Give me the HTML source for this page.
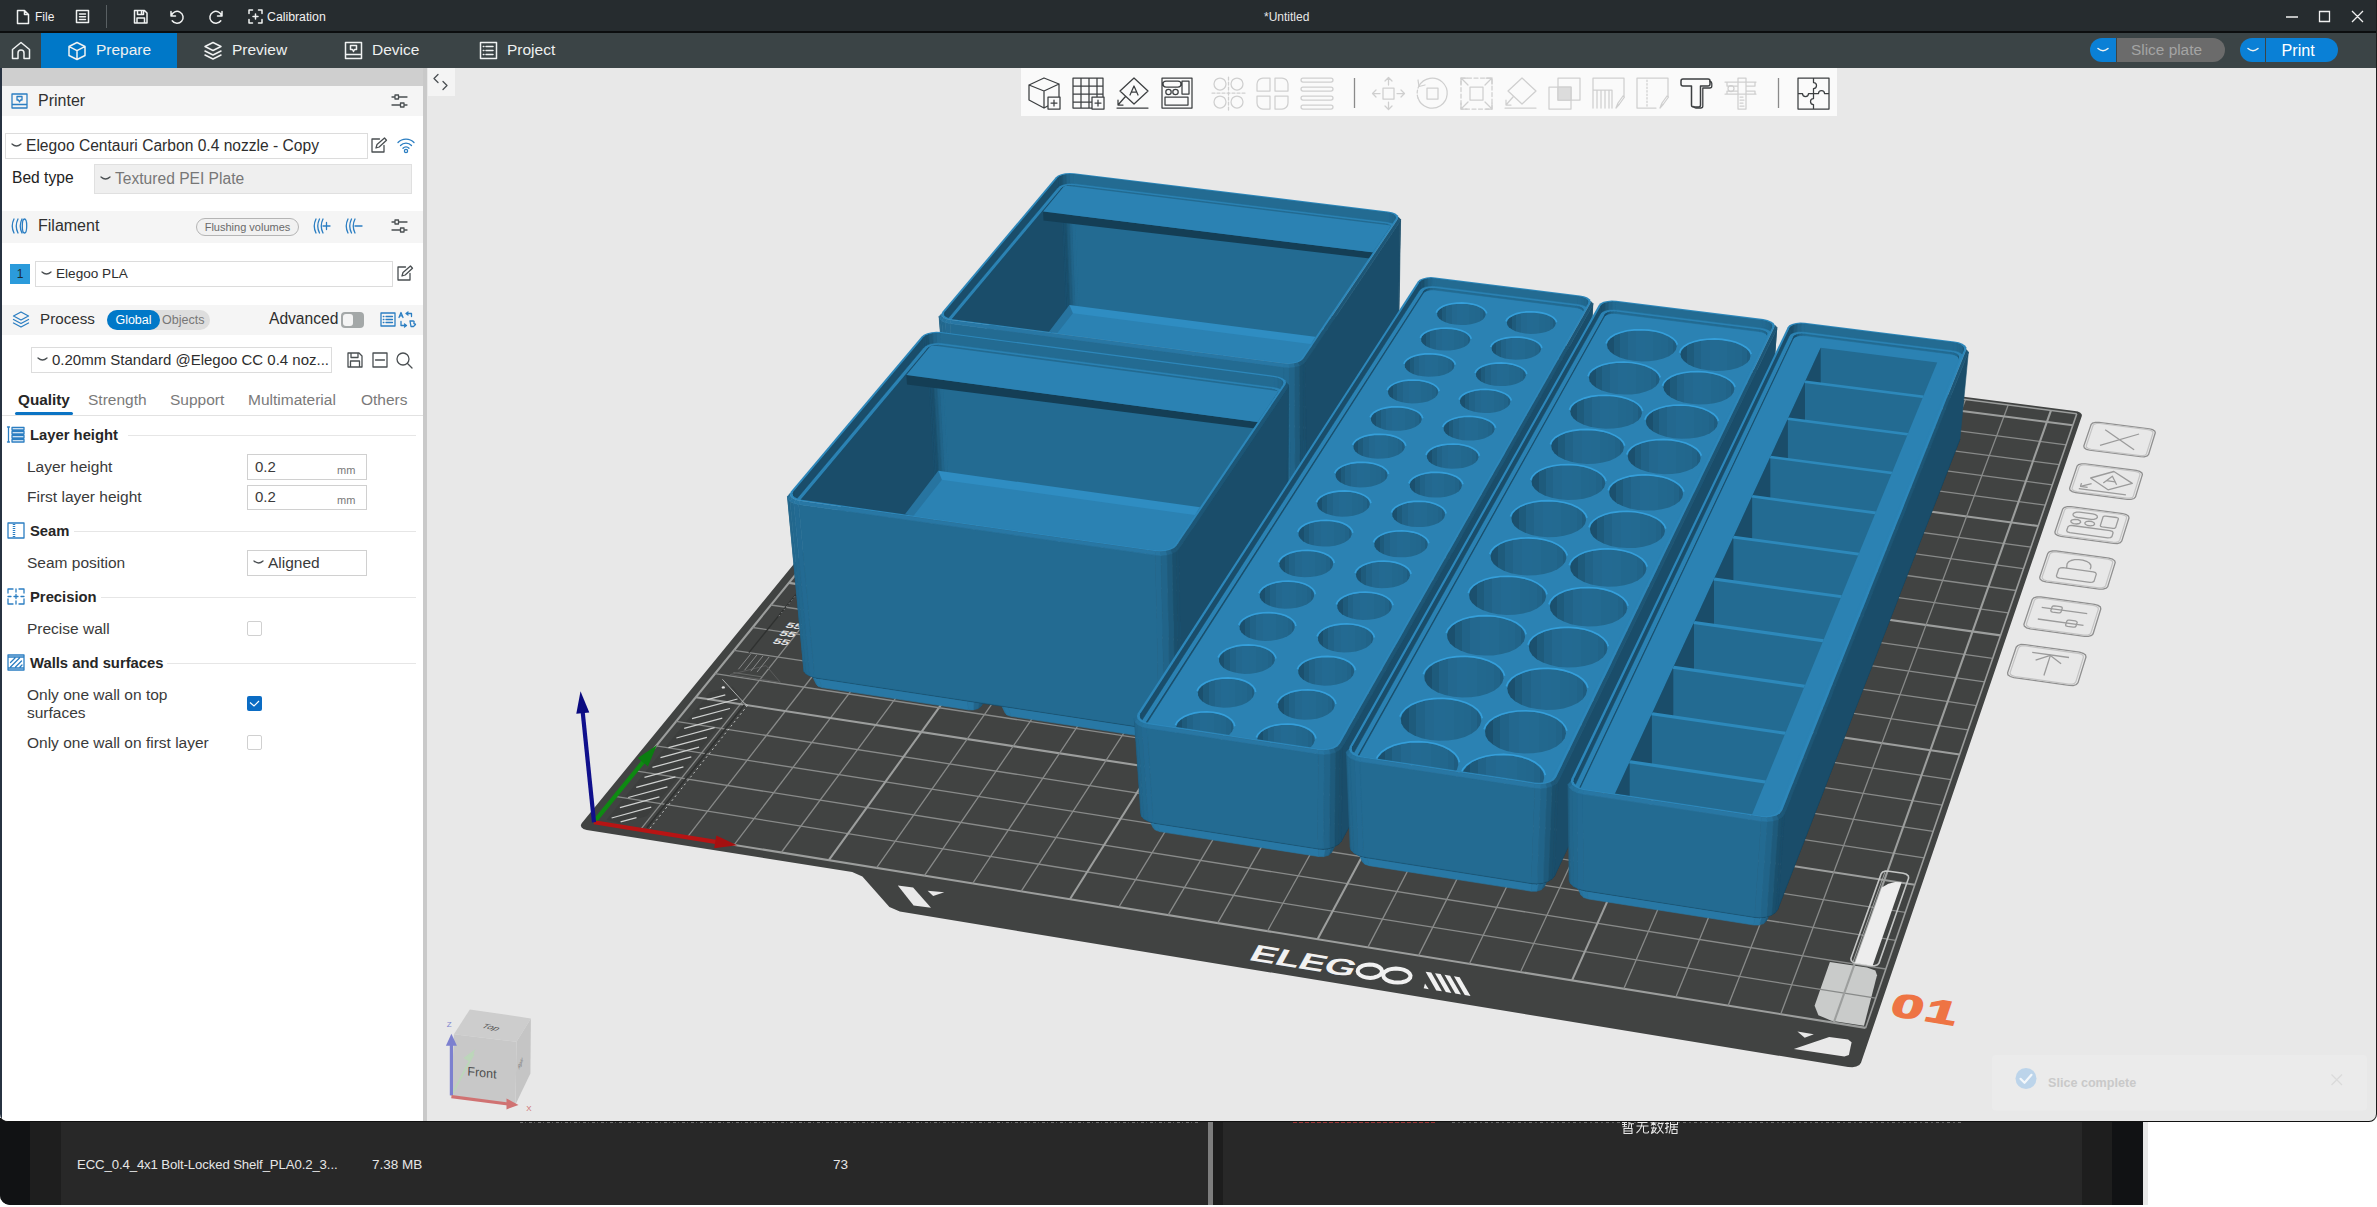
<!DOCTYPE html>
<html><head><meta charset="utf-8"><title>ElegooSlicer</title>
<style>
*{box-sizing:border-box;margin:0;padding:0}
html,body{width:2377px;height:1207px;overflow:hidden;background:#fff;font-family:"Liberation Sans",sans-serif;}
.abs{position:absolute}
#under{position:absolute;left:0;top:1118px;width:2148px;height:87px;background:#282828;border-radius:0 0 0 10px;overflow:hidden}
#win{position:absolute;left:0;top:0;width:2377px;height:1121.5px;background:#e8e8e8;border-radius:0 0 8px 8px;overflow:hidden;border-right:1.5px solid #1c1c1c;border-bottom:1.2px solid #101010}
#title{position:absolute;left:0;top:0;width:2377px;height:33px;background:#262c2f}
#tabs{position:absolute;left:0;top:33px;width:2377px;height:35px;background:#3b4446}
.tt{position:absolute;color:#f2f2f2;font-size:13px;line-height:16px;white-space:nowrap}
.tab{position:absolute;color:#eef0f0;font-size:15.5px;line-height:20px;top:7px;white-space:nowrap}
#side{position:absolute;left:0;top:68px;width:423px;height:1053px;background:#fff;border-left:2px solid #273241}
.hdr{position:absolute;left:0;width:421px;background:#f5f5f5}
.lbl{position:absolute;font-size:15.5px;color:#3a3a3a;white-space:nowrap;line-height:18px}
.sec{position:absolute;font-size:14.8px;color:#262626;font-weight:bold;white-space:nowrap;line-height:18px}
.box{position:absolute;border:1px solid #d0d0d0;background:#fff}
.hr{position:absolute;height:1px;background:#e6e6e6}
svg{position:absolute;overflow:visible}
.ic{fill:none;stroke:#4a4f52;stroke-width:1.3;stroke-linecap:round;stroke-linejoin:round}
.icw{fill:none;stroke:#f0f2f2;stroke-width:1.5;stroke-linecap:round;stroke-linejoin:round}
.icb{fill:none;stroke:#2b7ec2;stroke-width:1.3;stroke-linecap:round;stroke-linejoin:round}
.tb{fill:none;stroke:#3c3f41;stroke-width:1.25;stroke-linecap:round;stroke-linejoin:round}
.tbd{fill:none;stroke:#cfcfcf;stroke-width:1.25;stroke-linecap:round;stroke-linejoin:round}
</style></head><body>
<div id="under">
 <div class="abs" style="left:0;top:0;width:30px;height:87px;background:#111214"></div>
 <div class="abs" style="left:30px;top:0;width:31px;height:87px;background:#1e1e1e"></div>
 <div class="abs" style="left:1208px;top:0;width:5px;height:87px;background:#7d7d7d"></div>
 <div class="abs" style="left:1213px;top:0;width:10px;height:87px;background:#1d1d1d"></div>
 <div class="abs" style="left:2082px;top:0;width:30px;height:87px;background:#1e1e1e"></div>
 <div class="abs" style="left:2112px;top:0;width:31px;height:87px;background:#111214"></div>
 <div class="abs" style="left:2143px;top:0;width:5px;height:87px;background:#e8e8e8"></div>
 <div class="abs" style="left:520px;top:3px;width:680px;height:2px;opacity:.55;background:repeating-linear-gradient(90deg,#a8a8a8 0 3px,transparent 3px 5px,#8a8a8a 5px 6px,transparent 6px 9px)"></div>
 <div class="abs" style="left:1293px;top:3px;width:144px;height:2px;opacity:.75;background:repeating-linear-gradient(90deg,#c63c3c 0 4px,transparent 4px 6px)"></div>
 <div class="abs" style="left:1452px;top:3px;width:510px;height:2px;opacity:.5;background:repeating-linear-gradient(90deg,#b0b0b0 0 3px,transparent 3px 6px,#909090 6px 8px,transparent 8px 11px)"></div>
 <div class="abs" style="left:77px;top:39px;font-size:13.2px;color:#e6e6e6;white-space:nowrap;letter-spacing:-0.12px">ECC_0.4_4x1 Bolt-Locked Shelf_PLA0.2_3...</div>
 <div class="abs" style="left:372px;top:39px;font-size:13.5px;color:#e6e6e6;white-space:nowrap">7.38 MB</div>
 <div class="abs" style="left:833px;top:39px;font-size:13.5px;color:#e6e6e6">73</div>
 <svg class="abs" style="left:1621px;top:2px" width="58" height="15" viewBox="0 0 58 15"><g fill="none" stroke="#e6e6e6" stroke-width="1.050">
<path d="M1 2.500h5 M3.500 0.800v6 M1 4.500h5 M1.500 6.800h4.500 M8 1.800l4-1 M8 1.800v3q0 2-1 3 M8 3.800h5 M10.500 3.800v4 M3 8.500h8v5h-8z M3 11h8"/>
<path transform="translate(14.500 0)" d="M2 2.500h10 M1 6h12 M6.500 2.500q0 6-5.500 10.500 M8 6v5.500q0 1.500 1.500 1.500h2.500q1 0 1-2"/>
<path transform="translate(29 0)" d="M3.500 0.500v5 M1 3h5.500 M1.500 1l1 1.200 M5.500 1l-1 1.200 M1 5.500l2.500-2.500 2.500 2.500 M1 8h6 M4 6.500l-2.500 6.500 M2 10q3 1.500 4.500 3.500 M6 8q-1 4-5 5.500 M9.500 0.500q-0.500 3-2 5 M8.500 3.500h5 M12.500 3.500q-1 6-5.500 10 M8.500 5.500q1.500 5 5 8"/>
<path transform="translate(43.500 0)" d="M0.500 3.500h4 M2.500 0.500v11.500q0 1-1.500 0.500 M0.500 8.500l4-2 M6 1.500h7v3h-7 M6 1.500v5q0 4-1.500 7 M6 7h7.500 M9.500 4.500v5 M7.500 9.500h5v4h-5z"/>
</g></svg>
</div>
<div id="win">
<div id="title">
 <svg style="left:15px;top:9px" width="16" height="16" viewBox="0 0 16 16"><path class="icw" d="M2.5 1.5h7l4 4v9h-11z M9.5 1.5v4h4"/></svg>
 <div class="tt" style="left:35px;top:9px;font-size:12px">File</div>
 <svg style="left:75px;top:9px" width="16" height="16" viewBox="0 0 16 16"><path class="icw" d="M1.5 1.5h12v12h-12z M4.5 5h6 M4.5 7.7h6 M4.5 10.4h6"/></svg>
 <div class="abs" style="left:106px;top:5px;width:1px;height:23px;background:#596063"></div>
 <svg style="left:133px;top:9px" width="16" height="16" viewBox="0 0 16 16"><path class="icw" d="M1.5 1.5h10l2.5 2.5v10h-12.5z M4.5 1.5v4h6v-4 M4 14v-5h7.5v5 M8.5 2.8v1.6"/></svg>
 <svg style="left:169px;top:9px" width="17" height="16" viewBox="0 0 17 16"><path class="icw" d="M2 2.5v4.5h4.5 M2.3 6.8A6 6 0 1 1 3.2 11.8"/></svg>
 <svg style="left:207px;top:9px" width="17" height="16" viewBox="0 0 17 16"><path class="icw" d="M15 2.5v4.5h-4.5 M14.7 6.8A6 6 0 1 0 13.8 11.8"/></svg>
 <svg style="left:248px;top:9px" width="15" height="15" viewBox="0 0 15 15"><path class="icw" d="M1 4.5v-3.5h3.5 M10.5 1h3.5v3.5 M14 10.5v3.5h-3.5 M4.5 14h-3.5v-3.5 M7.5 5v5 M5 7.5h5"/></svg>
 <div class="tt" style="left:267px;top:9px;font-size:12.3px">Calibration</div>
 <div class="tt" style="left:1264px;top:9px;font-size:12px;color:#e8e8e8">*Untitled</div>
 <svg style="left:2285px;top:10px" width="80" height="14" viewBox="0 0 80 14"><path d="M1 7h12 M34.5 1.5h10v10h-10z M67 1l11 11 M78 1l-11 11" fill="none" stroke="#f0f0f0" stroke-width="1.3"/></svg>
</div>
<div id="tabs">
 <div id="sepl" class="abs" style="left:0;top:-2px;width:2377px;height:2px;background:#0c0e0f"></div>
 <svg style="left:11px;top:8px" width="20" height="19" viewBox="0 0 20 19"><path class="icw" d="M1.5 8.5l8.5-7 8.5 7v9h-5.5v-5.5a3 3 0 0 0 -6 0v5.5h-5.5z"/></svg>
 <div class="abs" style="left:41px;top:0;width:136px;height:35px;background:#0078c8"></div>
 <svg style="left:67px;top:8px" width="20" height="20" viewBox="0 0 20 20"><path class="icw" d="M10 1.5l8 4v9l-8 4-8-4v-9z M2.3 5.7l7.7 4 7.7-4 M10 9.7v8.5"/></svg>
 <div class="tab" style="left:96px">Prepare</div>
 <svg style="left:203px;top:8px" width="20" height="20" viewBox="0 0 20 20"><path class="icw" d="M10 1.5l8 4-8 4-8-4z M2 10l8 4 8-4 M2 14l8 4 8-4"/></svg>
 <div class="tab" style="left:232px">Preview</div>
 <svg style="left:344px;top:8px" width="19" height="19" viewBox="0 0 19 19"><path class="icw" d="M1.5 1.5h16v16h-16z M1.5 13.5h16 M6.5 4.5h6v4h-2l-1 2-1-2h-2z"/></svg>
 <div class="tab" style="left:372px">Device</div>
 <svg style="left:479px;top:8px" width="19" height="19" viewBox="0 0 19 19"><path class="icw" d="M1.5 1.5h16v16h-16z M7 5.5h7 M7 9.5h7 M7 13.5h7 M4.3 5.5h.6 M4.3 9.5h.6 M4.3 13.5h.6"/></svg>
 <div class="tab" style="left:507px">Project</div>
 <!-- slice / print -->
 <div class="abs" style="left:2090px;top:5px;width:26px;height:24px;background:#0a80d6;border-radius:12px 0 0 12px"></div>
 <svg style="left:2097px;top:14px" width="12" height="7" viewBox="0 0 12 7"><path class="icw" d="M1 1.5q5 4.5 10 0"/></svg>
 <div class="abs" style="left:2117px;top:5px;width:108px;height:24px;background:#6b6b6b;border-radius:0 12px 12px 0;color:#a4a4a4;font-size:15.4px;line-height:24px;padding-left:14px;white-space:nowrap">Slice plate</div>
 <div class="abs" style="left:2240px;top:5px;width:25px;height:24px;background:#0a80d6;border-radius:12px 0 0 12px"></div>
 <svg style="left:2247px;top:14px" width="12" height="7" viewBox="0 0 12 7"><path class="icw" d="M1 1.5q5 4.5 10 0"/></svg>
 <div class="abs" style="left:2266px;top:5px;width:72px;height:24px;background:#0a80d6;border-radius:0 12px 12px 0;color:#fff;font-size:16.2px;line-height:24px;padding-left:15.5px;white-space:nowrap">Print</div>
</div>
<div id="side">
 <div class="abs" style="left:0;top:0;width:421px;height:18px;background:#cfcfcf"></div>
 <!-- Printer -->
 <div class="hdr" style="top:18px;height:30px"></div>
 <svg style="left:9px;top:25px" width="17" height="16" viewBox="0 0 17 16"><path class="icb" d="M1 1h15v14h-15z M1 11.5h15 M6 3.5h5v3.5h-1.5l-1 2-1-2h-1.5z"/></svg>
 <div class="lbl" style="left:36px;top:24px;color:#303030;font-size:16px">Printer</div>
 <svg style="left:389px;top:25px" width="17" height="16" viewBox="0 0 17 16"><path class="ic" d="M1 4h3 M7.5 4h8.5 M4 2h3.5v4h-3.5z M1 12h8.5 M13 12h3 M9.5 10h3.5v4h-3.5z"/></svg>
 <div class="box" style="left:3px;top:65px;width:363px;height:26px;border-color:#dcdcdc"></div>
 <svg style="left:9px;top:75px" width="11" height="6" viewBox="0 0 11 6"><path class="ic" d="M1 1q4.500 4 9 0" stroke-width="1"/></svg>
 <div class="lbl" style="left:24px;top:69px;color:#2e2e2e;font-size:15.6px">Elegoo Centauri Carbon 0.4 nozzle - Copy</div>
 <svg style="left:369px;top:69px" width="17" height="16" viewBox="0 0 17 16"><path class="ic" d="M13 8.500v6.500h-12v-13h7.500 M5 11l1-3.500 7.500-6.500 2 2.200-7.300 6.800z"/></svg>
 <svg style="left:395px;top:68px" width="18" height="18" viewBox="0 0 18 18"><path class="icb" d="M1 6.500a11 11 0 0 1 16 0 M3.500 9.500a7.500 7.500 0 0 1 11 0 M6 12.300a4 4 0 0 1 6 0"/><circle cx="9" cy="15" r="1.600" class="icb"/></svg>
 <div class="lbl" style="left:10px;top:101px;color:#222;font-size:15.6px">Bed type</div>
 <div class="box" style="left:92px;top:96px;width:318px;height:30px;background:#efefef;border-color:#e0e0e0"></div>
 <svg style="left:98px;top:108px" width="11" height="6" viewBox="0 0 11 6"><path class="ic" d="M1 1q4.500 4 9 0" stroke="#8a8a8a" stroke-width="1"/></svg>
 <div class="lbl" style="left:113px;top:102px;color:#777;font-size:15.6px">Textured PEI Plate</div>
 <!-- Filament -->
 <div class="hdr" style="top:143px;height:32px"></div>
 <svg style="left:9px;top:150px" width="17" height="16" viewBox="0 0 17 16"><path class="icb" d="M3 1q-3.500 7 0 14 M7 1q-3.500 7 0 14 M11 1q-3.500 7 0 14 M13.500 1a2.200 7 0 0 1 0 14a2.200 7 0 0 1 0-14"/></svg>
 <div class="lbl" style="left:36px;top:149px;color:#303030;font-size:16px">Filament</div>
 <div class="abs" style="left:194px;top:150px;width:103px;height:18px;border:1px solid #b5b5b5;border-radius:9px;background:#f1f1f1;font-size:11px;line-height:16px;color:#6a6a6a;text-align:center;white-space:nowrap">Flushing volumes</div>
 <svg style="left:311px;top:150px" width="18" height="16" viewBox="0 0 18 16"><path class="icb" d="M3 1q-3.500 7 0 14 M6.500 1q-3.500 7 0 14 M10 1q-3.500 7 0 14"/><path class="icb" d="M10 8h7 M13.500 4.500v7" stroke="#5a5f62"/></svg>
 <svg style="left:343px;top:150px" width="18" height="16" viewBox="0 0 18 16"><path class="icb" d="M3 1q-3.500 7 0 14 M6.500 1q-3.500 7 0 14 M10 1q-3.500 7 0 14"/><path class="icb" d="M10 8h7" stroke="#5a5f62"/></svg>
 <svg style="left:389px;top:150px" width="17" height="16" viewBox="0 0 17 16"><path class="ic" d="M1 4h3 M7.500 4h8.500 M4 2h3.500v4h-3.500z M1 12h8.500 M13 12h3 M9.500 10h3.500v4h-3.500z"/></svg>
 <div class="abs" style="left:8px;top:196px;width:20px;height:20px;background:#2b9bdb;color:#1b2a33;font-size:12px;line-height:20px;text-align:center">1</div>
 <div class="box" style="left:33px;top:193px;width:358px;height:26px;border-color:#dcdcdc"></div>
 <svg style="left:39px;top:203px" width="11" height="6" viewBox="0 0 11 6"><path class="ic" d="M1 1q4.500 4 9 0" stroke-width="1"/></svg>
 <div class="lbl" style="left:54px;top:197px;color:#2e2e2e;font-size:13.600px">Elegoo PLA</div>
 <svg style="left:395px;top:197px" width="17" height="16" viewBox="0 0 17 16"><path class="ic" d="M13 8.500v6.500h-12v-13h7.500 M5 11l1-3.500 7.500-6.500 2 2.200-7.300 6.800z"/></svg>
 <!-- Process -->
 <div class="hdr" style="top:237px;height:30px"></div>
 <svg style="left:10px;top:243px" width="18" height="17" viewBox="0 0 18 17"><path class="icb" d="M9 1l7.500 4-7.500 4-7.500-4z M1.500 8.500l7.500 4 7.500-4 M1.500 12l7.500 4 7.500-4" stroke="#5b7f9d"/></svg>
 <div class="lbl" style="left:38px;top:242px;color:#303030;font-size:15.2px">Process</div>
 <div class="abs" style="left:105px;top:242px;width:103px;height:20px;border-radius:10px;background:#dedede"></div>
 <div class="abs" style="left:105px;top:242px;width:53px;height:20px;border-radius:10px;background:#0078c8;color:#fff;font-size:12.500px;line-height:20px;text-align:center">Global</div>
 <div class="abs" style="left:160px;top:242px;width:46px;height:20px;color:#777;font-size:12.500px;line-height:20px;white-space:nowrap">Objects</div>
 <div class="lbl" style="left:267px;top:242px;color:#2e2e2e;font-size:15.600px">Advanced</div>
 <div class="abs" style="left:339px;top:244px;width:23px;height:16px;border-radius:4px;background:#a4a8a8"></div>
 <div class="abs" style="left:341px;top:246px;width:10px;height:12px;border-radius:3px;background:#f4f4f4"></div>
 <svg style="left:378px;top:244px" width="16" height="15" viewBox="0 0 16 15"><path class="icb" d="M1 1h14v13h-14z M6 4.500h6.500 M6 7.500h6.500 M6 10.500h6.500 M3.300 4.500h.6 M3.300 7.500h.6 M3.300 10.500h.6"/></svg>
 <svg style="left:396px;top:243px" width="17" height="17" viewBox="0 0 17 17"><path class="icb" d="M1 6.500l2-5 2 5 M1.800 4.800h2.400 M8 2.500h5.500v3 M10 1l-2 1.500 2 1.500 M12 10h3q1.500 0 1 1.500t1 1.500t-1.500 2.500h-2.500z M8.500 14.500h-5.500v-4 M6.500 13l2 1.500-2 1.500" stroke-width="1.100"/></svg>
 <div class="box" style="left:29px;top:279px;width:301px;height:26px;border-color:#dcdcdc"></div>
 <svg style="left:35px;top:289px" width="11" height="6" viewBox="0 0 11 6"><path class="ic" d="M1 1q4.500 4 9 0" stroke-width="1"/></svg>
 <div class="lbl" style="left:50px;top:283px;color:#2e2e2e;font-size:15px">0.20mm Standard @Elegoo CC 0.4 noz...</div>
 <svg style="left:345px;top:284px" width="16" height="16" viewBox="0 0 16 16"><path class="ic" d="M1 1h11l3 3v11h-14z M4 1v4.500h7v-4.500 M3.500 15v-6h9v6" stroke="#868b8e" stroke-width="1.150"/></svg>
 <svg style="left:370px;top:284px" width="16" height="16" viewBox="0 0 16 16"><path class="ic" d="M1 1h14v14h-14z M3.500 8h9" stroke="#868b8e" stroke-width="1.150"/></svg>
 <svg style="left:394px;top:284px" width="17" height="17" viewBox="0 0 17 17"><circle class="ic" cx="7" cy="7" r="6" stroke="#868b8e" stroke-width="1.150"/><path class="ic" d="M11.500 11.500l4.500 4.500" stroke="#868b8e" stroke-width="1.150"/></svg>
 <!-- tabs -->
 <div class="sec" style="left:16px;top:323px;font-size:15.300px">Quality</div>
 <div class="abs" style="left:13px;top:344px;width:58px;height:3px;background:#0b74c4;border-radius:1.500px"></div>
 <div class="lbl" style="left:86px;top:323px;color:#7a7a7a">Strength</div>
 <div class="lbl" style="left:168px;top:323px;color:#7a7a7a">Support</div>
 <div class="lbl" style="left:246px;top:323px;color:#7a7a7a">Multimaterial</div>
 <div class="lbl" style="left:359px;top:323px;color:#7a7a7a">Others</div>
 <div class="hr" style="left:0;top:347px;width:421px;background:#e2e2e2"></div>
 <!-- Layer height -->
 <svg style="left:5px;top:358px" width="18" height="17" viewBox="0 0 18 17"><path class="icb" d="M1.500 1v15 M0.500 1h2 M0.500 16h2 M5 1.500h12v2.500h-12z M5 5.500h12v2.500h-12z M5 9.500h12v2.500h-12z M5 13.500h12v2.500h-12z" stroke="#5b7f9d" stroke-width="1"/></svg>
 <div class="sec" style="left:28px;top:358px">Layer height</div>
 <div class="hr" style="left:126px;top:367px;width:288px"></div>
 <div class="lbl" style="left:25px;top:390px">Layer height</div>
 <div class="box" style="left:245px;top:386px;width:120px;height:26px"></div>
 <div class="lbl" style="left:253px;top:390px;font-size:15px">0.2</div>
 <div class="lbl" style="left:335px;top:393px;font-size:11px;color:#777">mm</div>
 <div class="lbl" style="left:25px;top:420px">First layer height</div>
 <div class="box" style="left:245px;top:417px;width:120px;height:25px"></div>
 <div class="lbl" style="left:253px;top:420px;font-size:15px">0.2</div>
 <div class="lbl" style="left:335px;top:423px;font-size:11px;color:#777">mm</div>
 <!-- Seam -->
 <svg style="left:5px;top:454px" width="18" height="17" viewBox="0 0 18 17"><path class="icb" d="M1 1h16v15h-16z" stroke="#5b7f9d" stroke-width="1"/><path d="M7 2v13" stroke="#2b7ec2" stroke-width="2.500" stroke-dasharray="1 1" fill="none"/></svg>
 <div class="sec" style="left:28px;top:454px">Seam</div>
 <div class="hr" style="left:72px;top:463px;width:342px"></div>
 <div class="lbl" style="left:25px;top:486px">Seam position</div>
 <div class="box" style="left:245px;top:482px;width:120px;height:26px"></div>
 <svg style="left:251px;top:492px" width="11" height="6" viewBox="0 0 11 6"><path class="ic" d="M1 1q4.500 4 9 0" stroke-width="1"/></svg>
 <div class="lbl" style="left:266px;top:486px">Aligned</div>
 <!-- Precision -->
 <svg style="left:5px;top:520px" width="18" height="17" viewBox="0 0 18 17"><path class="icb" d="M1 5v-4h5 M12 1h5v4 M17 11v5h-5 M6 16h-5v-5 M9 1v3 M9 13v3 M1 8.500h3 M14 8.500h3 M9 6.500v4 M7 8.500h4" stroke="#5b7f9d" stroke-width="1"/></svg>
 <div class="sec" style="left:28px;top:520px">Precision</div>
 <div class="hr" style="left:99px;top:529px;width:315px"></div>
 <div class="lbl" style="left:25px;top:552px">Precise wall</div>
 <div class="box" style="left:245px;top:553px;width:15px;height:15px;border-radius:2px"></div>
 <!-- Walls -->
 <svg style="left:5px;top:586px" width="18" height="17" viewBox="0 0 18 17"><path class="icb" d="M1 1h16v15h-16z M1 3h16 M1 14h16 M3.500 13l9-9 M3.500 8.500l4.500-4.500 M8.500 13l6-6 M13 13l2-2" stroke-width="1"/></svg>
 <div class="sec" style="left:28px;top:586px">Walls and surfaces</div>
 <div class="hr" style="left:165px;top:595px;width:249px"></div>
 <div class="lbl" style="left:25px;top:618px">Only one wall on top</div>
 <div class="lbl" style="left:25px;top:636px">surfaces</div>
 <div class="abs" style="left:245px;top:628px;width:15px;height:15px;border-radius:2px;background:#0b6cc4"></div>
 <svg style="left:247px;top:632px" width="11" height="8" viewBox="0 0 11 8"><path d="M1 2.500l4 3.500 5-5" fill="none" stroke="#fff" stroke-width="1.200"/></svg>
 <div class="lbl" style="left:25px;top:666px">Only one wall on first layer</div>
 <div class="box" style="left:245px;top:667px;width:15px;height:15px;border-radius:2px"></div>
</div>
<div class="abs" style="left:423px;top:68px;width:4px;height:1053px;background:#c9c9c9"></div>
<svg style="left:0;top:0" width="2377" height="1121" viewBox="0 0 2377 1121">
<defs><clipPath id="vp"><rect x="427" y="68" width="1950" height="1053"/></clipPath></defs>
<g clip-path="url(#vp)">
<polygon points="581.7,823.2 580.8,825.3 581.4,827.3 583.5,828.9 586.7,829.9 852.2,872.1 862.4,876.5 889.4,907.1 899.8,911.6 1848.1,1067.1 1852.4,1067.3 1856.3,1066.6 1859.3,1065.0 1861.0,1062.8 2081.9,415.8 2081.7,414.2 2080.3,412.7 2077.8,411.6 2074.6,410.9 1036.3,278.2 1033.1,278.0 1030.0,278.5 1027.4,279.4 1025.8,280.6" fill="#414342"/>
<polygon points="1829.9,962.0 1867.0,967.6 1875.4,970.4 1877.0,975.3 1864.0,1025.8 1831.5,1020.8 1818.4,1015.2 1814.6,1005.8" fill="#c9cbca"/>
<polygon points="606.5,819.8 620.3,823.5 647.2,816.1 741.6,697.6 732.6,686.4 709.7,692.5" fill="#3c3e3d"/>
<line x1="594.0" y1="822.2" x2="1035.2" y2="280.5" stroke="#9c9e9d" stroke-width="2.1"/>
<line x1="594.0" y1="822.2" x2="1865.6" y2="1027.9" stroke="#9c9e9d" stroke-width="2.1"/>
<line x1="640.5" y1="829.7" x2="1073.8" y2="285.4" stroke="#888a89" stroke-width="1.3"/>
<line x1="615.1" y1="796.3" x2="1875.8" y2="998.2" stroke="#888a89" stroke-width="1.3"/>
<line x1="687.2" y1="837.3" x2="1112.5" y2="290.4" stroke="#888a89" stroke-width="1.3"/>
<line x1="635.8" y1="770.9" x2="1885.8" y2="969.0" stroke="#888a89" stroke-width="1.3"/>
<line x1="734.1" y1="844.9" x2="1151.4" y2="295.3" stroke="#888a89" stroke-width="1.3"/>
<line x1="656.1" y1="745.9" x2="1895.6" y2="940.4" stroke="#888a89" stroke-width="1.3"/>
<line x1="781.3" y1="852.5" x2="1190.4" y2="300.3" stroke="#888a89" stroke-width="1.3"/>
<line x1="676.1" y1="721.4" x2="1905.3" y2="912.4" stroke="#888a89" stroke-width="1.3"/>
<line x1="828.8" y1="860.2" x2="1229.6" y2="305.4" stroke="#9c9e9d" stroke-width="2.1"/>
<line x1="695.7" y1="697.3" x2="1914.8" y2="884.8" stroke="#9c9e9d" stroke-width="2.1"/>
<line x1="876.5" y1="867.9" x2="1269.0" y2="310.4" stroke="#888a89" stroke-width="1.3"/>
<line x1="715.0" y1="673.6" x2="1924.1" y2="857.8" stroke="#888a89" stroke-width="1.3"/>
<line x1="924.4" y1="875.7" x2="1308.6" y2="315.5" stroke="#888a89" stroke-width="1.3"/>
<line x1="734.0" y1="650.4" x2="1933.2" y2="831.3" stroke="#888a89" stroke-width="1.3"/>
<line x1="972.6" y1="883.5" x2="1348.3" y2="320.5" stroke="#888a89" stroke-width="1.3"/>
<line x1="752.6" y1="627.5" x2="1942.1" y2="805.2" stroke="#888a89" stroke-width="1.3"/>
<line x1="1021.1" y1="891.3" x2="1388.2" y2="325.6" stroke="#888a89" stroke-width="1.3"/>
<line x1="770.9" y1="605.0" x2="1950.9" y2="779.7" stroke="#888a89" stroke-width="1.3"/>
<line x1="1069.9" y1="899.2" x2="1428.3" y2="330.8" stroke="#9c9e9d" stroke-width="2.1"/>
<line x1="788.9" y1="582.9" x2="1959.6" y2="754.5" stroke="#9c9e9d" stroke-width="2.1"/>
<line x1="1118.8" y1="907.1" x2="1468.5" y2="335.9" stroke="#888a89" stroke-width="1.3"/>
<line x1="806.6" y1="561.2" x2="1968.0" y2="729.9" stroke="#888a89" stroke-width="1.3"/>
<line x1="1168.1" y1="915.1" x2="1509.0" y2="341.1" stroke="#888a89" stroke-width="1.3"/>
<line x1="824.0" y1="539.8" x2="1976.4" y2="705.6" stroke="#888a89" stroke-width="1.3"/>
<line x1="1217.6" y1="923.1" x2="1549.6" y2="346.3" stroke="#888a89" stroke-width="1.3"/>
<line x1="841.2" y1="518.7" x2="1984.6" y2="681.8" stroke="#888a89" stroke-width="1.3"/>
<line x1="1267.4" y1="931.2" x2="1590.3" y2="351.5" stroke="#888a89" stroke-width="1.3"/>
<line x1="858.0" y1="498.1" x2="1992.6" y2="658.4" stroke="#888a89" stroke-width="1.3"/>
<line x1="1317.5" y1="939.3" x2="1631.3" y2="356.7" stroke="#9c9e9d" stroke-width="2.1"/>
<line x1="874.6" y1="477.7" x2="2000.5" y2="635.4" stroke="#9c9e9d" stroke-width="2.1"/>
<line x1="1367.8" y1="947.4" x2="1672.4" y2="362.0" stroke="#888a89" stroke-width="1.3"/>
<line x1="890.9" y1="457.7" x2="2008.3" y2="612.8" stroke="#888a89" stroke-width="1.3"/>
<line x1="1418.5" y1="955.6" x2="1713.8" y2="367.3" stroke="#888a89" stroke-width="1.3"/>
<line x1="907.0" y1="438.0" x2="2016.0" y2="590.5" stroke="#888a89" stroke-width="1.3"/>
<line x1="1469.4" y1="963.8" x2="1755.3" y2="372.6" stroke="#888a89" stroke-width="1.3"/>
<line x1="922.8" y1="418.5" x2="2023.5" y2="568.7" stroke="#888a89" stroke-width="1.3"/>
<line x1="1520.5" y1="972.1" x2="1796.9" y2="377.9" stroke="#888a89" stroke-width="1.3"/>
<line x1="938.3" y1="399.4" x2="2030.9" y2="547.2" stroke="#888a89" stroke-width="1.3"/>
<line x1="1572.0" y1="980.4" x2="1838.8" y2="383.3" stroke="#9c9e9d" stroke-width="2.1"/>
<line x1="953.7" y1="380.6" x2="2038.1" y2="526.0" stroke="#9c9e9d" stroke-width="2.1"/>
<line x1="1623.8" y1="988.8" x2="1880.9" y2="388.7" stroke="#888a89" stroke-width="1.3"/>
<line x1="968.7" y1="362.1" x2="2045.3" y2="505.2" stroke="#888a89" stroke-width="1.3"/>
<line x1="1675.8" y1="997.2" x2="1923.1" y2="394.1" stroke="#888a89" stroke-width="1.3"/>
<line x1="983.6" y1="343.9" x2="2052.3" y2="484.8" stroke="#888a89" stroke-width="1.3"/>
<line x1="1728.1" y1="1005.7" x2="1965.5" y2="399.5" stroke="#888a89" stroke-width="1.3"/>
<line x1="998.2" y1="325.9" x2="2059.3" y2="464.6" stroke="#888a89" stroke-width="1.3"/>
<line x1="1780.7" y1="1014.2" x2="2008.2" y2="404.9" stroke="#888a89" stroke-width="1.3"/>
<line x1="1012.6" y1="308.2" x2="2066.1" y2="444.8" stroke="#888a89" stroke-width="1.3"/>
<line x1="1833.7" y1="1022.8" x2="2051.0" y2="410.4" stroke="#9c9e9d" stroke-width="2.1"/>
<line x1="1026.8" y1="290.8" x2="2072.8" y2="425.3" stroke="#9c9e9d" stroke-width="2.1"/>
<line x1="1865.6" y1="1027.9" x2="2076.8" y2="413.7" stroke="#9b9d9c" stroke-width="1.6"/>
<line x1="1035.2" y1="280.5" x2="2076.8" y2="413.7" stroke="#9b9d9c" stroke-width="1.6"/>
<line x1="611.6" y1="818.0" x2="651.2" y2="807.1" stroke="#cfd1d0" stroke-width="1.2" />
<line x1="619.9" y1="807.7" x2="659.4" y2="796.9" stroke="#cfd1d0" stroke-width="1.2" />
<line x1="628.2" y1="797.5" x2="667.4" y2="786.8" stroke="#cfd1d0" stroke-width="1.2" />
<line x1="636.3" y1="787.4" x2="675.4" y2="776.8" stroke="#cfd1d0" stroke-width="1.2" />
<line x1="644.5" y1="777.4" x2="683.4" y2="766.8" stroke="#cfd1d0" stroke-width="1.2" />
<line x1="652.5" y1="767.4" x2="691.3" y2="756.9" stroke="#cfd1d0" stroke-width="1.2" />
<line x1="660.5" y1="757.6" x2="699.1" y2="747.1" stroke="#cfd1d0" stroke-width="1.2" />
<line x1="668.5" y1="747.7" x2="706.9" y2="737.3" stroke="#cfd1d0" stroke-width="1.2" />
<line x1="676.4" y1="738.0" x2="714.6" y2="727.7" stroke="#cfd1d0" stroke-width="1.2" />
<line x1="684.2" y1="728.3" x2="722.3" y2="718.1" stroke="#cfd1d0" stroke-width="1.2" />
<line x1="692.0" y1="718.7" x2="729.9" y2="708.5" stroke="#cfd1d0" stroke-width="1.2" />
<line x1="699.7" y1="709.1" x2="737.5" y2="699.0" stroke="#cfd1d0" stroke-width="1.2" />
<line x1="707.4" y1="699.6" x2="725.3" y2="694.9" stroke="#cfd1d0" stroke-width="1.2" />
<line x1="620.6" y1="821.8" x2="636.5" y2="817.6" stroke="#cfd1d0" stroke-width="1.2" />
<line x1="646.8" y1="827.8" x2="744.5" y2="704.8" stroke="#2f3130" stroke-width="1.6" />
<line x1="650.0" y1="828.3" x2="747.6" y2="705.3" stroke="#cfd1d0" stroke-width="0.9" stroke-dasharray="2 3"/>
<line x1="722.4" y1="679.3" x2="744.3" y2="703.2" stroke="#b9bbba" stroke-width="0.9" />
<line x1="744.3" y1="703.2" x2="747.6" y2="705.3" stroke="#b9bbba" stroke-width="0.9" />
<ellipse cx="723.3" cy="687.4" rx="1.6" ry="1.2" fill="#e6e6e6"/>
<line x1="733.4" y1="672.5" x2="763.1" y2="677.0" stroke="#6a6c6b" stroke-width="0.9" />
<polygon points="730.1,674.6 780.3,682.3 766.1,665.6" fill="none" stroke="#5c5e5d" stroke-width="0.9"/>
<line x1="738.4" y1="669.3" x2="750.6" y2="654.2" stroke="#8d8f8e" stroke-width="0.9" />
<line x1="744.6" y1="670.2" x2="756.8" y2="655.1" stroke="#8d8f8e" stroke-width="0.9" />
<line x1="750.8" y1="671.2" x2="762.9" y2="656.0" stroke="#8d8f8e" stroke-width="0.9" />
<line x1="757.0" y1="672.1" x2="769.1" y2="657.0" stroke="#8d8f8e" stroke-width="0.9" />
<line x1="748.9" y1="652.6" x2="796.4" y2="593.9" stroke="#2f3130" stroke-width="1.4" />
<text transform="matrix(4.3873 0.6587 -1.8397 2.2926 771.80 643.16)" font-size="3.20" fill="#e4e4e4" font-family="Liberation Sans, sans-serif" font-weight="bold">55</text>
<text transform="matrix(4.3758 0.6548 -1.8287 2.2789 778.23 635.15)" font-size="3.20" fill="#e4e4e4" font-family="Liberation Sans, sans-serif" font-weight="bold">55</text>
<text transform="matrix(4.3642 0.6509 -1.8178 2.2653 784.61 627.19)" font-size="3.20" fill="#e4e4e4" font-family="Liberation Sans, sans-serif" font-weight="bold">55</text>
<line x1="778.8" y1="616.2" x2="802.2" y2="587.3" stroke="#8d8f8e" stroke-width="0.9" stroke-dasharray="1.5 2.5"/>
<polygon points="897.8,885.6 913.1,887.4 931.0,907.8 913.6,905.6" fill="#e9e9e9"/>
<polygon points="927.6,890.7 944.3,892.2 933.2,895.9" fill="#e9e9e9"/>
<polygon points="1797.4,1031.5 1813.8,1034.2 1804.7,1037.8" fill="#e9e9e9"/>
<polygon points="1793.8,1048.9 1829.2,1037.0 1848.1,1039.4 1851.6,1042.2 1848.9,1055.0 1844.4,1056.5" fill="#e9e9e9"/>
<polygon points="1871.0,965.8 1874.5,965.8 1877.5,964.8 1879.0,963.1 1908.6,877.9 1908.3,876.0 1906.4,874.3 1903.2,873.3 1889.1,871.2 1885.6,871.1 1882.7,872.0 1881.2,873.7 1850.9,958.6 1851.2,960.7 1853.2,962.4 1856.4,963.5" fill="none" stroke="#c4c6c5" stroke-width="1.6"/>
<line x1="1852.7" y1="962.9" x2="1884.9" y2="872.2" stroke="#a9abaa" stroke-width="0.9" />
<polygon points="1854.9,962.9 1872.6,965.7 1901.7,882.3 1895.4,881.9 1888.4,883.7 1881.7,887.5" fill="#ededed"/>
<text transform="matrix(5.0377 0.8238 -1.6011 2.8674 1247.59 959.86)" font-size="7.70" fill="#f1f1f1" font-family="Liberation Sans, sans-serif" font-weight="bold" letter-spacing="-0.1">ELEG</text>
<polygon points="1381.5,973.1 1382.0,971.0 1381.2,969.0 1379.3,967.2 1376.5,965.7 1373.1,964.8 1369.3,964.6 1365.6,964.9 1362.3,965.9 1359.7,967.4 1358.1,969.3 1357.7,971.3 1358.4,973.4 1360.3,975.2 1363.1,976.7 1366.5,977.6 1370.3,977.9 1374.0,977.5 1377.4,976.5 1379.9,975.0" fill="none" stroke="#f1f1f1" stroke-width="4"/>
<polygon points="1410.1,977.8 1410.5,975.6 1409.5,973.4 1407.3,971.5 1404.1,969.9 1400.2,968.9 1395.9,968.6 1391.8,968.9 1388.1,969.9 1385.3,971.5 1383.6,973.4 1383.2,975.6 1384.1,977.8 1386.3,979.7 1389.5,981.3 1393.4,982.3 1397.7,982.6 1401.9,982.3 1405.6,981.3 1408.4,979.7" fill="none" stroke="#f1f1f1" stroke-width="4"/>
<polygon points="1423.7,988.3 1428.8,989.2 1425.0,983.5" fill="#f1f1f1"/>
<polygon points="1436.3,990.4 1441.9,991.3 1431.2,972.6 1425.6,971.7" fill="#f1f1f1"/>
<polygon points="1445.8,991.9 1451.4,992.9 1440.6,974.1 1435.0,973.2" fill="#f1f1f1"/>
<polygon points="1455.3,993.5 1461.0,994.4 1450.1,975.7 1444.5,974.7" fill="#f1f1f1"/>
<polygon points="1464.8,995.1 1470.5,996.0 1459.6,977.2 1453.9,976.3" fill="#f1f1f1"/>
<text transform="matrix(5.3096 0.8543 -1.0046 2.9737 1888.50 1014.91)" font-size="10.60" fill="#ee7444" font-family="Liberation Sans, sans-serif" font-weight="bold" letter-spacing="0.5" stroke="#ee7444" stroke-width="0.45">01</text>
<line x1="594.0" y1="822.2" x2="644.1" y2="760.7" stroke="#0e8a12" stroke-width="4.2"/><polygon points="656.8,745.2 647.9,766.4 637.8,758.1" fill="#0a7d10"/>
<line x1="594.0" y1="822.2" x2="717.2" y2="842.1" stroke="#b71414" stroke-width="4.2"/><polygon points="737.0,845.3 714.2,848.2 716.3,835.4" fill="#a51010"/>
<line x1="594.0" y1="822.2" x2="582.6" y2="711.1" stroke="#10108c" stroke-width="4.2"/><polygon points="580.5,691.2 589.3,712.4 576.3,713.8" fill="#0a0a80"/>
<polygon points="1216.7,373.4 1216.9,371.4 1222.9,353.3 1222.5,356.3" fill="#1c5372" stroke="#1c5372" stroke-width="0.6"/>
<polygon points="1174.8,432.7 1216.7,373.4 1222.5,356.3 1179.5,416.9" fill="#1d5777" stroke="#1d5777" stroke-width="0.6"/>
<polygon points="1024.8,414.5 1026.7,416.3 1020.3,401.0 1017.5,398.3" fill="#26739e" stroke="#26739e" stroke-width="0.6"/>
<polygon points="1026.7,416.3 1030.4,417.4 1025.9,402.6 1020.3,401.0" fill="#2777a3" stroke="#2777a3" stroke-width="0.6"/>
<polygon points="1030.4,417.4 1163.7,435.5 1162.9,421.0 1025.9,402.6" fill="#2878a5" stroke="#2878a5" stroke-width="0.6"/>
<polygon points="1172.3,434.5 1174.8,432.7 1179.5,416.9 1175.8,419.6" fill="#1d597a" stroke="#1d597a" stroke-width="0.6"/>
<polygon points="1168.2,435.5 1172.3,434.5 1175.8,419.6 1169.7,421.1" fill="#22658b" stroke="#22658b" stroke-width="0.6"/>
<polygon points="1163.7,435.5 1168.2,435.5 1169.7,421.1 1162.9,421.0" fill="#2776a2" stroke="#2776a2" stroke-width="0.6"/>
<polygon points="1387.7,395.9 1387.7,393.9 1394.0,375.7 1393.9,378.7" fill="#1c5372" stroke="#1c5372" stroke-width="0.6"/>
<polygon points="1349.6,456.3 1387.7,395.9 1393.9,378.7 1354.9,440.4" fill="#1d5777" stroke="#1d5777" stroke-width="0.6"/>
<polygon points="1196.9,437.8 1198.9,439.7 1193.0,424.2 1189.9,421.5" fill="#26739e" stroke="#26739e" stroke-width="0.6"/>
<polygon points="1198.9,439.7 1202.7,440.8 1198.7,425.8 1193.0,424.2" fill="#2777a3" stroke="#2777a3" stroke-width="0.6"/>
<polygon points="1202.7,440.8 1338.6,459.2 1338.4,444.7 1198.7,425.8" fill="#2878a5" stroke="#2878a5" stroke-width="0.6"/>
<polygon points="1347.2,458.2 1349.6,456.3 1354.9,440.4 1351.3,443.2" fill="#1d597a" stroke="#1d597a" stroke-width="0.6"/>
<polygon points="1343.2,459.2 1347.2,458.2 1351.3,443.2 1345.3,444.7" fill="#22658b" stroke="#22658b" stroke-width="0.6"/>
<polygon points="1338.6,459.2 1343.2,459.2 1345.3,444.7 1338.4,444.7" fill="#2776a2" stroke="#2776a2" stroke-width="0.6"/>
<polygon points="1161.7,451.1 1162.0,449.0 1168.0,430.5 1167.6,433.7" fill="#1c5372" stroke="#1c5372" stroke-width="0.6"/>
<polygon points="1117.0,514.4 1161.7,451.1 1167.6,433.7 1121.7,498.3" fill="#1d5777" stroke="#1d5777" stroke-width="0.6"/>
<polygon points="962.5,495.0 964.4,496.9 957.7,481.3 954.8,478.4" fill="#26739e" stroke="#26739e" stroke-width="0.6"/>
<polygon points="964.4,496.9 968.2,498.1 963.3,483.0 957.7,481.3" fill="#2777a3" stroke="#2777a3" stroke-width="0.6"/>
<polygon points="968.2,498.1 1105.5,517.4 1104.5,502.7 963.3,483.0" fill="#2878a5" stroke="#2878a5" stroke-width="0.6"/>
<polygon points="1114.4,516.3 1117.0,514.4 1121.7,498.3 1117.8,501.1" fill="#1d597a" stroke="#1d597a" stroke-width="0.6"/>
<polygon points="1110.2,517.4 1114.4,516.3 1117.8,501.1 1111.5,502.8" fill="#22658b" stroke="#22658b" stroke-width="0.6"/>
<polygon points="1105.5,517.4 1110.2,517.4 1111.5,502.8 1104.5,502.7" fill="#2776a2" stroke="#2776a2" stroke-width="0.6"/>
<polygon points="1337.7,475.1 1337.8,473.0 1344.2,454.3 1344.0,457.6" fill="#1c5372" stroke="#1c5372" stroke-width="0.6"/>
<polygon points="1297.1,539.6 1337.7,475.1 1344.0,457.6 1302.4,523.4" fill="#1d5777" stroke="#1d5777" stroke-width="0.6"/>
<polygon points="1139.7,519.9 1141.7,521.8 1135.5,506.1 1132.4,503.2" fill="#26739e" stroke="#26739e" stroke-width="0.6"/>
<polygon points="1141.7,521.8 1145.6,523.0 1141.3,507.8 1135.5,506.1" fill="#2777a3" stroke="#2777a3" stroke-width="0.6"/>
<polygon points="1145.6,523.0 1285.7,542.7 1285.3,528.0 1141.3,507.8" fill="#2878a5" stroke="#2878a5" stroke-width="0.6"/>
<polygon points="1294.6,541.6 1297.1,539.6 1302.4,523.4 1298.6,526.4" fill="#1d597a" stroke="#1d597a" stroke-width="0.6"/>
<polygon points="1290.4,542.7 1294.6,541.6 1298.6,526.4 1292.4,528.0" fill="#22658b" stroke="#22658b" stroke-width="0.6"/>
<polygon points="1285.7,542.7 1290.4,542.7 1292.4,528.0 1285.3,528.0" fill="#2776a2" stroke="#2776a2" stroke-width="0.6"/>
<polygon points="1392.7,385.1 1393.1,383.4 1397.9,379.8 1397.3,382.0" fill="#12364a" stroke="#12364a" stroke-width="0.6"/>
<polygon points="1301.2,530.0 1392.7,385.1 1397.3,382.0 1305.8,527.3" fill="#12374c" stroke="#12374c" stroke-width="0.6"/>
<polygon points="956.4,483.8 956.8,485.5 951.7,482.8 951.1,480.4" fill="#17455e" stroke="#17455e" stroke-width="0.6"/>
<polygon points="956.8,485.5 958.3,487.1 953.8,485.0 951.7,482.8" fill="#184965" stroke="#184965" stroke-width="0.6"/>
<polygon points="958.3,487.1 960.9,488.3 957.3,486.7 953.8,485.0" fill="#194b66" stroke="#194b66" stroke-width="0.6"/>
<polygon points="960.9,488.3 964.2,489.1 961.8,487.7 957.3,486.7" fill="#194c69" stroke="#194c69" stroke-width="0.6"/>
<polygon points="964.2,489.1 1285.8,534.1 1284.7,532.9 961.8,487.7" fill="#194d69" stroke="#194d69" stroke-width="0.6"/>
<polygon points="1299.5,531.7 1301.2,530.0 1305.8,527.3 1303.5,529.6" fill="#13384d" stroke="#13384d" stroke-width="0.6"/>
<polygon points="1296.8,533.1 1299.5,531.7 1303.5,529.6 1299.8,531.5" fill="#13394e" stroke="#13394e" stroke-width="0.6"/>
<polygon points="1293.4,534.0 1296.8,533.1 1299.8,531.5 1295.1,532.7" fill="#154159" stroke="#154159" stroke-width="0.6"/>
<polygon points="1289.6,534.3 1293.4,534.0 1295.1,532.7 1289.9,533.2" fill="#184863" stroke="#184863" stroke-width="0.6"/>
<polygon points="1285.8,534.1 1289.6,534.3 1289.9,533.2 1284.7,532.9" fill="#194c68" stroke="#194c68" stroke-width="0.6"/>
<polygon points="1397.3,382.0 1397.9,379.8 1400.6,219.3 1400.0,221.4" fill="#194b67" stroke="#194b67" stroke-width="0.6"/>
<polygon points="1305.8,527.3 1397.3,382.0 1400.0,221.4 1305.4,361.8" fill="#1a4d6a" stroke="#1a4d6a" stroke-width="0.6"/>
<polygon points="951.1,480.4 951.7,482.8 939.7,318.8 939.1,316.5" fill="#206083" stroke="#206083" stroke-width="0.6"/>
<polygon points="951.7,482.8 953.8,485.0 941.8,320.9 939.7,318.8" fill="#22668c" stroke="#22668c" stroke-width="0.6"/>
<polygon points="953.8,485.0 957.3,486.7 945.4,322.5 941.8,320.9" fill="#22688e" stroke="#22688e" stroke-width="0.6"/>
<polygon points="957.3,486.7 961.8,487.7 950.0,323.5 945.4,322.5" fill="#236a92" stroke="#236a92" stroke-width="0.6"/>
<polygon points="961.8,487.7 1284.7,532.9 1283.9,367.2 950.0,323.5" fill="#236b92" stroke="#236b92" stroke-width="0.6"/>
<polygon points="1303.5,529.6 1305.8,527.3 1305.4,361.8 1303.0,364.0" fill="#1a4e6b" stroke="#1a4e6b" stroke-width="0.6"/>
<polygon points="1299.8,531.5 1303.5,529.6 1303.0,364.0 1299.3,365.8" fill="#1a4f6c" stroke="#1a4f6c" stroke-width="0.6"/>
<polygon points="1295.1,532.7 1299.8,531.5 1299.3,365.8 1294.5,367.0" fill="#1e5a7b" stroke="#1e5a7b" stroke-width="0.6"/>
<polygon points="1289.9,533.2 1295.1,532.7 1294.5,367.0 1289.2,367.5" fill="#216489" stroke="#216489" stroke-width="0.6"/>
<polygon points="1284.7,532.9 1289.9,533.2 1289.2,367.5 1283.9,367.2" fill="#236a91" stroke="#236a91" stroke-width="0.6"/>
<polygon points="1400.0,221.4 1400.6,219.3 1398.3,217.1 1397.8,219.0" fill="#1c5473" stroke="#1c5473" stroke-width="0.6"/>
<polygon points="1305.4,361.8 1400.0,221.4 1397.8,219.0 1303.3,358.8" fill="#1d5676" stroke="#1d5676" stroke-width="0.6"/>
<polygon points="939.1,316.5 939.7,318.8 941.9,315.9 941.4,313.9" fill="#236b93" stroke="#236b93" stroke-width="0.6"/>
<polygon points="939.7,318.8 941.8,320.9 943.8,317.8 941.9,315.9" fill="#26729d" stroke="#26729d" stroke-width="0.6"/>
<polygon points="941.8,320.9 945.4,322.5 947.0,319.2 943.8,317.8" fill="#26749f" stroke="#26749f" stroke-width="0.6"/>
<polygon points="945.4,322.5 950.0,323.5 951.1,320.1 947.0,319.2" fill="#2777a3" stroke="#2777a3" stroke-width="0.6"/>
<polygon points="950.0,323.5 1283.9,367.2 1284.1,363.6 951.1,320.1" fill="#2877a4" stroke="#2877a4" stroke-width="0.6"/>
<polygon points="1303.0,364.0 1305.4,361.8 1303.3,358.8 1301.2,360.8" fill="#1d5878" stroke="#1d5878" stroke-width="0.6"/>
<polygon points="1299.3,365.8 1303.0,364.0 1301.2,360.8 1297.8,362.4" fill="#1d5879" stroke="#1d5879" stroke-width="0.6"/>
<polygon points="1294.5,367.0 1299.3,365.8 1297.8,362.4 1293.6,363.4" fill="#21648a" stroke="#21648a" stroke-width="0.6"/>
<polygon points="1289.2,367.5 1294.5,367.0 1293.6,363.4 1288.8,363.9" fill="#25709a" stroke="#25709a" stroke-width="0.6"/>
<polygon points="1283.9,367.2 1289.2,367.5 1288.8,363.9 1284.1,363.6" fill="#2776a2" stroke="#2776a2" stroke-width="0.6"/>
<polygon points="1284.1,363.6 1288.8,363.9 1293.6,363.4 1297.8,362.4 1301.2,360.8 1303.3,358.8 1397.8,219.0 1398.3,217.1 1397.5,215.2 1395.3,213.5 1392.0,212.2 1387.9,211.4 1074.0,173.2 1069.6,173.0 1065.2,173.3 1061.2,174.2 1058.0,175.6 1055.8,177.2 942.4,311.8 941.4,313.9 941.9,315.9 943.8,317.8 947.0,319.2 951.1,320.1" fill="#2d87ba"/>
<clipPath id="c2"><polygon points="1283.9,362.5 1288.2,362.7 1292.5,362.3 1296.4,361.4 1299.4,359.9 1301.3,358.1 1395.4,219.1 1395.9,217.3 1395.1,215.6 1393.2,214.1 1390.2,212.9 1386.5,212.2 1074.1,174.1 1070.1,173.9 1066.1,174.3 1062.5,175.1 1059.5,176.3 1057.6,177.8 944.8,311.7 944.0,313.6 944.4,315.4 946.2,317.1 949.1,318.4 952.8,319.2"/></clipPath>
<g clip-path="url(#c2)">
<polygon points="1284.0,372.4 1288.3,372.7 1292.6,372.3 1296.5,371.3 1299.5,369.9 1301.5,368.1 1395.4,228.6 1395.9,226.9 1395.1,225.2 1393.2,223.6 1390.2,222.4 1386.5,221.7 1074.4,183.5 1070.5,183.3 1066.5,183.7 1062.8,184.5 1059.9,185.7 1058.0,187.2 945.4,321.5 944.5,323.4 944.9,325.3 946.7,326.9 949.6,328.2 953.3,329.0" fill="#2b82b3"/>
<polygon points="1070.5,183.3 1066.5,183.7 1066.1,174.3 1070.1,173.9" fill="#216489" stroke="#216489" stroke-width="0.6"/>
<polygon points="1074.4,183.5 1070.5,183.3 1070.1,173.9 1074.1,174.1" fill="#236a91" stroke="#236a91" stroke-width="0.6"/>
<polygon points="1066.5,183.7 1062.8,184.5 1062.5,175.1 1066.1,174.3" fill="#1e5a7b" stroke="#1e5a7b" stroke-width="0.6"/>
<polygon points="1062.8,184.5 1059.9,185.7 1059.5,176.3 1062.5,175.1" fill="#1a4f6c" stroke="#1a4f6c" stroke-width="0.6"/>
<polygon points="1059.9,185.7 1058.0,187.2 1057.6,177.8 1059.5,176.3" fill="#1a4e6b" stroke="#1a4e6b" stroke-width="0.6"/>
<polygon points="1386.5,221.7 1074.4,183.5 1074.1,174.1 1386.5,212.2" fill="#236b92" stroke="#236b92" stroke-width="0.6"/>
<polygon points="1390.2,222.4 1386.5,221.7 1386.5,212.2 1390.2,212.9" fill="#236a92" stroke="#236a92" stroke-width="0.6"/>
<polygon points="1393.2,223.6 1390.2,222.4 1390.2,212.9 1393.2,214.1" fill="#22688e" stroke="#22688e" stroke-width="0.6"/>
<polygon points="1395.1,225.2 1393.2,223.6 1393.2,214.1 1395.1,215.6" fill="#22668c" stroke="#22668c" stroke-width="0.6"/>
<polygon points="1395.9,226.9 1395.1,225.2 1395.1,215.6 1395.9,217.3" fill="#206083" stroke="#206083" stroke-width="0.6"/>
<polygon points="1058.0,187.2 945.4,321.5 944.8,311.7 1057.6,177.8" fill="#1a4d6a" stroke="#1a4d6a" stroke-width="0.6"/>
<polygon points="945.4,321.5 944.5,323.4 944.0,313.6 944.8,311.7" fill="#194b67" stroke="#194b67" stroke-width="0.6"/>
<clipPath id="c1"><polygon points="1283.9,370.4 1287.4,370.6 1290.8,370.3 1293.9,369.6 1296.3,368.4 1297.9,367.0 1391.3,228.7 1391.7,227.3 1391.1,225.9 1389.5,224.7 1387.1,223.8 1384.1,223.2 1074.4,185.2 1071.2,185.1 1068.0,185.3 1065.1,186.0 1062.7,187.0 1061.2,188.2 949.7,321.4 949.0,322.9 949.4,324.4 950.8,325.8 953.1,326.8 956.1,327.5"/></clipPath>
<g clip-path="url(#c1)">
<polygon points="1285.8,503.5 1289.2,503.7 1292.6,503.4 1295.6,502.6 1298.0,501.4 1299.5,499.9 1391.4,356.1 1391.8,354.7 1391.2,353.3 1389.6,352.0 1387.3,351.0 1384.3,350.4 1079.2,310.9 1076.1,310.8 1072.9,311.0 1070.0,311.7 1067.7,312.7 1066.2,314.0 956.8,452.6 956.1,454.1 956.5,455.7 957.9,457.1 960.1,458.2 963.1,458.8" fill="#2b82b3"/>
<polygon points="1076.1,310.8 1072.9,311.0 1068.0,185.3 1071.2,185.1" fill="#216489" stroke="#216489" stroke-width="0.6"/>
<polygon points="1079.2,310.9 1076.1,310.8 1071.2,185.1 1074.4,185.2" fill="#236a91" stroke="#236a91" stroke-width="0.6"/>
<polygon points="1072.9,311.0 1070.0,311.7 1065.1,186.0 1068.0,185.3" fill="#1e5a7b" stroke="#1e5a7b" stroke-width="0.6"/>
<polygon points="1070.0,311.7 1067.7,312.7 1062.7,187.0 1065.1,186.0" fill="#1a4f6c" stroke="#1a4f6c" stroke-width="0.6"/>
<polygon points="1067.7,312.7 1066.2,314.0 1061.2,188.2 1062.7,187.0" fill="#1a4e6b" stroke="#1a4e6b" stroke-width="0.6"/>
<polygon points="1384.3,350.4 1079.2,310.9 1074.4,185.2 1384.1,223.2" fill="#236b92" stroke="#236b92" stroke-width="0.6"/>
<polygon points="1387.3,351.0 1384.3,350.4 1384.1,223.2 1387.1,223.8" fill="#236a92" stroke="#236a92" stroke-width="0.6"/>
<polygon points="1389.6,352.0 1387.3,351.0 1387.1,223.8 1389.5,224.7" fill="#22688e" stroke="#22688e" stroke-width="0.6"/>
<polygon points="1391.2,353.3 1389.6,352.0 1389.5,224.7 1391.1,225.9" fill="#22668c" stroke="#22668c" stroke-width="0.6"/>
<polygon points="1391.8,354.7 1391.2,353.3 1391.1,225.9 1391.7,227.3" fill="#206083" stroke="#206083" stroke-width="0.6"/>
<polygon points="1066.2,314.0 956.8,452.6 949.7,321.4 1061.2,188.2" fill="#1a4d6a" stroke="#1a4d6a" stroke-width="0.6"/>
<polygon points="956.8,452.6 956.1,454.1 949.0,322.9 949.7,321.4" fill="#194b67" stroke="#194b67" stroke-width="0.6"/>
<polygon points="1067.3,312.6 1392.3,354.6 1394.3,347.0 1069.4,305.1" fill="#2f8dc2"/>
<polygon points="949.9,461.3 955.8,462.1 1072.9,313.3 1069.4,305.1" fill="#2774a0"/>
<polygon points="1043.5,220.5 1376.1,259.2 1376.1,252.8 1043.1,211.5" fill="#143e55"/>
<polygon points="1043.1,211.5 1376.1,252.8 1394.2,226.0 1064.7,185.6" fill="#2b82b3"/>
</g>
</g>
<polygon points="1095.2,544.9 1095.5,542.6 1101.7,523.5 1101.2,526.9" fill="#1c5372" stroke="#1c5372" stroke-width="0.6"/>
<polygon points="1047.3,612.6 1095.2,544.9 1101.2,526.9 1052.0,596.1" fill="#1d5777" stroke="#1d5777" stroke-width="0.6"/>
<polygon points="887.6,591.7 889.6,593.8 882.3,577.9 879.4,574.7" fill="#26739e" stroke="#26739e" stroke-width="0.6"/>
<polygon points="889.6,593.8 893.4,595.0 888.2,579.7 882.3,577.9" fill="#2777a3" stroke="#2777a3" stroke-width="0.6"/>
<polygon points="893.4,595.0 1035.3,615.8 1034.0,600.9 888.2,579.7" fill="#2878a5" stroke="#2878a5" stroke-width="0.6"/>
<polygon points="1044.5,614.7 1047.3,612.6 1052.0,596.1 1047.9,599.2" fill="#1d597a" stroke="#1d597a" stroke-width="0.6"/>
<polygon points="1040.1,615.8 1044.5,614.7 1047.9,599.2 1041.2,601.0" fill="#22658b" stroke="#22658b" stroke-width="0.6"/>
<polygon points="1035.3,615.8 1040.1,615.8 1041.2,601.0 1034.0,600.9" fill="#2776a2" stroke="#2776a2" stroke-width="0.6"/>
<polygon points="1277.0,570.7 1277.2,568.4 1283.7,549.2 1283.4,552.6" fill="#1c5372" stroke="#1c5372" stroke-width="0.6"/>
<polygon points="1233.4,639.8 1277.0,570.7 1283.4,552.6 1238.8,623.3" fill="#1d5777" stroke="#1d5777" stroke-width="0.6"/>
<polygon points="1070.7,618.5 1072.8,620.6 1066.0,604.6 1062.9,601.4" fill="#26739e" stroke="#26739e" stroke-width="0.6"/>
<polygon points="1072.8,620.6 1076.8,621.9 1072.1,606.5 1066.0,604.6" fill="#2777a3" stroke="#2777a3" stroke-width="0.6"/>
<polygon points="1076.8,621.9 1221.5,643.1 1220.9,628.1 1072.1,606.5" fill="#2878a5" stroke="#2878a5" stroke-width="0.6"/>
<polygon points="1230.8,641.9 1233.4,639.8 1238.8,623.3 1234.8,626.4" fill="#1d597a" stroke="#1d597a" stroke-width="0.6"/>
<polygon points="1226.4,643.1 1230.8,641.9 1234.8,626.4 1228.2,628.2" fill="#22658b" stroke="#22658b" stroke-width="0.6"/>
<polygon points="1221.5,643.1 1226.4,643.1 1228.2,628.2 1220.9,628.1" fill="#2776a2" stroke="#2776a2" stroke-width="0.6"/>
<polygon points="1032.2,633.8 1032.7,631.4 1038.9,611.8 1038.3,615.5" fill="#1c5372" stroke="#1c5372" stroke-width="0.6"/>
<polygon points="980.9,706.4 1032.2,633.8 1038.3,615.5 985.6,689.6" fill="#1d5777" stroke="#1d5777" stroke-width="0.6"/>
<polygon points="816.2,684.0 818.1,686.2 810.4,670.0 807.5,666.7" fill="#26739e" stroke="#26739e" stroke-width="0.6"/>
<polygon points="818.1,686.2 822.1,687.6 816.4,672.0 810.4,670.0" fill="#2777a3" stroke="#2777a3" stroke-width="0.6"/>
<polygon points="822.1,687.6 968.4,709.8 966.8,694.8 816.4,672.0" fill="#2878a5" stroke="#2878a5" stroke-width="0.6"/>
<polygon points="978.0,708.6 980.9,706.4 985.6,689.6 981.2,693.0" fill="#1d597a" stroke="#1d597a" stroke-width="0.6"/>
<polygon points="973.4,709.9 978.0,708.6 981.2,693.0 974.3,694.8" fill="#22658b" stroke="#22658b" stroke-width="0.6"/>
<polygon points="968.4,709.8 973.4,709.9 974.3,694.8 966.8,694.8" fill="#2776a2" stroke="#2776a2" stroke-width="0.6"/>
<polygon points="1219.7,661.5 1220.0,659.0 1226.6,639.3 1226.3,643.0" fill="#1c5372" stroke="#1c5372" stroke-width="0.6"/>
<polygon points="1173.0,735.6 1219.7,661.5 1226.3,643.0 1178.4,718.7" fill="#1d5777" stroke="#1d5777" stroke-width="0.6"/>
<polygon points="1005.0,712.7 1007.1,715.0 999.9,698.7 996.8,695.3" fill="#26739e" stroke="#26739e" stroke-width="0.6"/>
<polygon points="1007.1,715.0 1011.2,716.3 1006.1,700.7 999.9,698.7" fill="#2777a3" stroke="#2777a3" stroke-width="0.6"/>
<polygon points="1011.2,716.3 1160.6,739.1 1159.7,724.0 1006.1,700.7" fill="#2878a5" stroke="#2878a5" stroke-width="0.6"/>
<polygon points="1170.2,737.8 1173.0,735.6 1178.4,718.7 1174.2,722.1" fill="#1d597a" stroke="#1d597a" stroke-width="0.6"/>
<polygon points="1165.7,739.1 1170.2,737.8 1174.2,722.1 1167.4,724.1" fill="#22658b" stroke="#22658b" stroke-width="0.6"/>
<polygon points="1160.6,739.1 1165.7,739.1 1167.4,724.1 1159.7,724.0" fill="#2776a2" stroke="#2776a2" stroke-width="0.6"/>
<polygon points="1282.2,559.3 1282.8,557.4 1287.9,553.6 1287.1,556.1" fill="#12364a" stroke="#12364a" stroke-width="0.6"/>
<polygon points="1177.2,725.6 1282.2,559.3 1287.1,556.1 1182.0,722.9" fill="#12374c" stroke="#12374c" stroke-width="0.6"/>
<polygon points="809.4,672.2 809.7,674.2 804.1,671.5 803.7,668.7" fill="#17455e" stroke="#17455e" stroke-width="0.6"/>
<polygon points="809.7,674.2 811.3,676.0 806.3,674.0 804.1,671.5" fill="#184965" stroke="#184965" stroke-width="0.6"/>
<polygon points="811.3,676.0 814.0,677.5 809.9,675.9 806.3,674.0" fill="#194b66" stroke="#194b66" stroke-width="0.6"/>
<polygon points="814.0,677.5 817.5,678.3 814.7,677.2 809.9,675.9" fill="#194c69" stroke="#194c69" stroke-width="0.6"/>
<polygon points="817.5,678.3 1160.4,730.4 1159.0,729.4 814.7,677.2" fill="#194d69" stroke="#194d69" stroke-width="0.6"/>
<polygon points="1175.3,727.6 1177.2,725.6 1182.0,722.9 1179.4,725.6" fill="#13384d" stroke="#13384d" stroke-width="0.6"/>
<polygon points="1172.3,729.2 1175.3,727.6 1179.4,725.6 1175.4,727.7" fill="#13394e" stroke="#13394e" stroke-width="0.6"/>
<polygon points="1168.6,730.2 1172.3,729.2 1175.4,727.7 1170.3,729.2" fill="#154159" stroke="#154159" stroke-width="0.6"/>
<polygon points="1160.4,730.4 1164.5,730.6 1164.7,729.7 1159.0,729.4" fill="#194c68" stroke="#194c68" stroke-width="0.6"/>
<polygon points="1164.5,730.6 1168.6,730.2 1170.3,729.2 1164.7,729.7" fill="#184863" stroke="#184863" stroke-width="0.6"/>
<polygon points="1287.1,556.1 1287.9,553.6 1288.5,384.8 1287.8,387.3" fill="#194b67" stroke="#194b67" stroke-width="0.6"/>
<polygon points="1182.0,722.9 1287.1,556.1 1287.8,387.3 1178.8,548.9" fill="#1a4d6a" stroke="#1a4d6a" stroke-width="0.6"/>
<polygon points="803.7,668.7 804.1,671.5 787.9,499.0 787.5,496.4" fill="#206083" stroke="#206083" stroke-width="0.6"/>
<polygon points="804.1,671.5 806.3,674.0 790.1,501.4 787.9,499.0" fill="#22668c" stroke="#22668c" stroke-width="0.6"/>
<polygon points="806.3,674.0 809.9,675.9 793.8,503.3 790.1,501.4" fill="#22688e" stroke="#22688e" stroke-width="0.6"/>
<polygon points="809.9,675.9 814.7,677.2 798.7,504.4 793.8,503.3" fill="#236a92" stroke="#236a92" stroke-width="0.6"/>
<polygon points="814.7,677.2 1159.0,729.4 1155.3,555.1 798.7,504.4" fill="#236b92" stroke="#236b92" stroke-width="0.6"/>
<polygon points="1179.4,725.6 1182.0,722.9 1178.8,548.9 1176.1,551.5" fill="#1a4e6b" stroke="#1a4e6b" stroke-width="0.6"/>
<polygon points="1175.4,727.7 1179.4,725.6 1176.1,551.5 1172.0,553.6" fill="#1a4f6c" stroke="#1a4f6c" stroke-width="0.6"/>
<polygon points="1170.3,729.2 1175.4,727.7 1172.0,553.6 1166.8,554.9" fill="#1e5a7b" stroke="#1e5a7b" stroke-width="0.6"/>
<polygon points="1159.0,729.4 1164.7,729.7 1161.0,555.5 1155.3,555.1" fill="#236a91" stroke="#236a91" stroke-width="0.6"/>
<polygon points="1164.7,729.7 1170.3,729.2 1166.8,554.9 1161.0,555.5" fill="#216489" stroke="#216489" stroke-width="0.6"/>
<polygon points="1287.8,387.3 1288.5,384.8 1286.0,382.5 1285.3,384.7" fill="#1c5473" stroke="#1c5473" stroke-width="0.6"/>
<polygon points="1178.8,548.9 1287.8,387.3 1285.3,384.7 1176.5,545.7" fill="#1d5676" stroke="#1d5676" stroke-width="0.6"/>
<polygon points="787.5,496.4 787.9,499.0 790.3,496.0 789.9,493.6" fill="#236b93" stroke="#236b93" stroke-width="0.6"/>
<polygon points="787.9,499.0 790.1,501.4 792.3,498.1 790.3,496.0" fill="#26729d" stroke="#26729d" stroke-width="0.6"/>
<polygon points="790.1,501.4 793.8,503.3 795.6,499.7 792.3,498.1" fill="#26749f" stroke="#26749f" stroke-width="0.6"/>
<polygon points="793.8,503.3 798.7,504.4 800.0,500.8 795.6,499.7" fill="#2777a3" stroke="#2777a3" stroke-width="0.6"/>
<polygon points="798.7,504.4 1155.3,555.1 1155.5,551.2 800.0,500.8" fill="#2877a4" stroke="#2877a4" stroke-width="0.6"/>
<polygon points="1176.1,551.5 1178.8,548.9 1176.5,545.7 1174.1,548.0" fill="#1d5878" stroke="#1d5878" stroke-width="0.6"/>
<polygon points="1172.0,553.6 1176.1,551.5 1174.1,548.0 1170.4,549.8" fill="#1d5879" stroke="#1d5879" stroke-width="0.6"/>
<polygon points="1166.8,554.9 1172.0,553.6 1170.4,549.8 1165.8,551.1" fill="#21648a" stroke="#21648a" stroke-width="0.6"/>
<polygon points="1155.3,555.1 1161.0,555.5 1160.7,551.6 1155.5,551.2" fill="#2776a2" stroke="#2776a2" stroke-width="0.6"/>
<polygon points="1161.0,555.5 1166.8,554.9 1165.8,551.1 1160.7,551.6" fill="#25709a" stroke="#25709a" stroke-width="0.6"/>
<polygon points="1155.5,551.2 1160.7,551.6 1165.8,551.1 1170.4,549.8 1174.1,548.0 1176.5,545.7 1285.3,384.7 1286.0,382.5 1285.2,380.3 1283.0,378.4 1279.5,376.9 1275.2,376.0 941.1,332.0 936.4,331.8 931.7,332.2 927.3,333.2 923.8,334.8 921.4,336.7 791.1,491.2 789.9,493.6 790.3,496.0 792.3,498.1 795.6,499.7 800.0,500.8" fill="#2d87ba"/>
<clipPath id="c4"><polygon points="1155.4,549.9 1160.0,550.2 1164.7,549.8 1168.9,548.7 1172.3,547.0 1174.5,544.9 1282.8,384.8 1283.4,382.8 1282.7,380.8 1280.7,379.1 1277.5,377.7 1273.6,376.9 941.1,333.1 936.9,332.9 932.6,333.3 928.6,334.2 925.4,335.6 923.2,337.4 793.8,491.1 792.7,493.2 793.1,495.4 794.8,497.3 797.8,498.8 801.8,499.8"/></clipPath>
<g clip-path="url(#c4)">
<polygon points="1155.7,560.4 1160.4,560.7 1165.0,560.3 1169.2,559.2 1172.6,557.5 1174.8,555.4 1283.0,394.8 1283.6,392.8 1282.8,390.9 1280.8,389.1 1277.7,387.7 1273.7,386.9 941.7,343.0 937.4,342.8 933.1,343.2 929.2,344.1 926.0,345.5 923.8,347.3 794.5,501.4 793.5,503.6 793.8,505.8 795.6,507.7 798.6,509.2 802.6,510.1" fill="#2b82b3"/>
<polygon points="937.4,342.8 933.1,343.2 932.6,333.3 936.9,332.9" fill="#216489" stroke="#216489" stroke-width="0.6"/>
<polygon points="941.7,343.0 937.4,342.8 936.9,332.9 941.1,333.1" fill="#236a91" stroke="#236a91" stroke-width="0.6"/>
<polygon points="933.1,343.2 929.2,344.1 928.6,334.2 932.6,333.3" fill="#1e5a7b" stroke="#1e5a7b" stroke-width="0.6"/>
<polygon points="929.2,344.1 926.0,345.5 925.4,335.6 928.6,334.2" fill="#1a4f6c" stroke="#1a4f6c" stroke-width="0.6"/>
<polygon points="926.0,345.5 923.8,347.3 923.2,337.4 925.4,335.6" fill="#1a4e6b" stroke="#1a4e6b" stroke-width="0.6"/>
<polygon points="1273.7,386.9 941.7,343.0 941.1,333.1 1273.6,376.9" fill="#236b92" stroke="#236b92" stroke-width="0.6"/>
<polygon points="1277.7,387.7 1273.7,386.9 1273.6,376.9 1277.5,377.7" fill="#236a92" stroke="#236a92" stroke-width="0.6"/>
<polygon points="1280.8,389.1 1277.7,387.7 1277.5,377.7 1280.7,379.1" fill="#22688e" stroke="#22688e" stroke-width="0.6"/>
<polygon points="1282.8,390.9 1280.8,389.1 1280.7,379.1 1282.7,380.8" fill="#22668c" stroke="#22668c" stroke-width="0.6"/>
<polygon points="1283.6,392.8 1282.8,390.9 1282.7,380.8 1283.4,382.8" fill="#206083" stroke="#206083" stroke-width="0.6"/>
<polygon points="923.8,347.3 794.5,501.4 793.8,491.1 923.2,337.4" fill="#1a4d6a" stroke="#1a4d6a" stroke-width="0.6"/>
<polygon points="794.5,501.4 793.5,503.6 792.7,493.2 793.8,491.1" fill="#194b67" stroke="#194b67" stroke-width="0.6"/>
<clipPath id="c3"><polygon points="1155.7,558.1 1159.4,558.3 1163.2,558.0 1166.5,557.1 1169.2,555.8 1171.0,554.1 1278.5,394.9 1279.0,393.3 1278.4,391.7 1276.8,390.3 1274.3,389.2 1271.1,388.6 941.5,345.0 938.1,344.8 934.6,345.1 931.5,345.8 928.9,347.0 927.2,348.4 799.2,501.3 798.4,503.1 798.6,504.8 800.1,506.3 802.5,507.5 805.6,508.3"/></clipPath>
<g clip-path="url(#c3)">
<polygon points="1159.9,698.1 1163.6,698.3 1167.2,698.0 1170.6,697.1 1173.2,695.7 1174.9,693.9 1280.5,528.9 1281.0,527.2 1280.4,525.6 1278.8,524.1 1276.3,523.0 1273.2,522.3 948.8,477.0 945.4,476.8 942.0,477.1 938.9,477.9 936.4,479.1 934.7,480.6 809.4,639.3 808.5,641.1 808.8,642.9 810.2,644.5 812.6,645.7 815.7,646.5" fill="#2b82b3"/>
<polygon points="945.4,476.8 942.0,477.1 934.6,345.1 938.1,344.8" fill="#216489" stroke="#216489" stroke-width="0.6"/>
<polygon points="948.8,477.0 945.4,476.8 938.1,344.8 941.5,345.0" fill="#236a91" stroke="#236a91" stroke-width="0.6"/>
<polygon points="942.0,477.1 938.9,477.9 931.5,345.8 934.6,345.1" fill="#1e5a7b" stroke="#1e5a7b" stroke-width="0.6"/>
<polygon points="938.9,477.9 936.4,479.1 928.9,347.0 931.5,345.8" fill="#1a4f6c" stroke="#1a4f6c" stroke-width="0.6"/>
<polygon points="936.4,479.1 934.7,480.6 927.2,348.4 928.9,347.0" fill="#1a4e6b" stroke="#1a4e6b" stroke-width="0.6"/>
<polygon points="1273.2,522.3 948.8,477.0 941.5,345.0 1271.1,388.6" fill="#236b92" stroke="#236b92" stroke-width="0.6"/>
<polygon points="1276.3,523.0 1273.2,522.3 1271.1,388.6 1274.3,389.2" fill="#236a92" stroke="#236a92" stroke-width="0.6"/>
<polygon points="1278.8,524.1 1276.3,523.0 1274.3,389.2 1276.8,390.3" fill="#22688e" stroke="#22688e" stroke-width="0.6"/>
<polygon points="1280.4,525.6 1278.8,524.1 1276.8,390.3 1278.4,391.7" fill="#22668c" stroke="#22668c" stroke-width="0.6"/>
<polygon points="1281.0,527.2 1280.4,525.6 1278.4,391.7 1279.0,393.3" fill="#206083" stroke="#206083" stroke-width="0.6"/>
<polygon points="934.7,480.6 809.4,639.3 799.2,501.3 927.2,348.4" fill="#1a4d6a" stroke="#1a4d6a" stroke-width="0.6"/>
<polygon points="809.4,639.3 808.5,641.1 798.4,503.1 799.2,501.3" fill="#194b67" stroke="#194b67" stroke-width="0.6"/>
<polygon points="936.0,478.9 1281.6,527.2 1283.7,518.9 938.3,470.8" fill="#2f8dc2"/>
<polygon points="801.4,649.3 807.7,650.3 941.9,479.7 938.3,470.8" fill="#2774a0"/>
<polygon points="907.0,384.5 1261.1,429.3 1261.0,422.5 906.4,375.0" fill="#143e55"/>
<polygon points="906.4,375.0 1261.0,422.5 1281.9,391.6 931.2,345.3" fill="#2b82b3"/>
</g>
</g>
<defs><linearGradient id="hg" x1="0" y1="0" x2="1" y2="0">
<stop offset="0.000" stop-color="#194b67"/><stop offset="0.000" stop-color="#194b67"/><stop offset="0.000" stop-color="#1a4e6b"/><stop offset="0.000" stop-color="#1a4e6b"/><stop offset="0.000" stop-color="#1a4f6c"/><stop offset="0.031" stop-color="#1a4f6c"/><stop offset="0.031" stop-color="#1b506e"/><stop offset="0.098" stop-color="#1b506e"/><stop offset="0.098" stop-color="#1e5b7c"/><stop offset="0.189" stop-color="#1e5b7c"/><stop offset="0.189" stop-color="#216388"/><stop offset="0.297" stop-color="#216388"/><stop offset="0.297" stop-color="#23688f"/><stop offset="0.418" stop-color="#23688f"/><stop offset="0.418" stop-color="#236a92"/><stop offset="0.543" stop-color="#236a92"/><stop offset="0.543" stop-color="#236a91"/><stop offset="0.666" stop-color="#236a91"/><stop offset="0.666" stop-color="#22688e"/><stop offset="0.779" stop-color="#22688e"/><stop offset="0.779" stop-color="#22678d"/><stop offset="0.876" stop-color="#22678d"/><stop offset="0.876" stop-color="#216489"/><stop offset="0.951" stop-color="#216489"/><stop offset="0.951" stop-color="#1f5d80"/><stop offset="1.000" stop-color="#1f5d80"/></linearGradient></defs>
<polygon points="1543.2,467.4 1577.9,404.3 1584.5,388.3 1549.1,452.6" fill="#1d5777" stroke="#1d5777" stroke-width="0.6"/>
<polygon points="1387.2,448.5 1389.4,450.4 1384.0,436.0 1380.7,433.3" fill="#26739e" stroke="#26739e" stroke-width="0.6"/>
<polygon points="1389.4,450.4 1393.2,451.5 1389.8,437.7 1384.0,436.0" fill="#2777a3" stroke="#2777a3" stroke-width="0.6"/>
<polygon points="1393.2,451.5 1532.5,470.2 1532.9,456.9 1389.8,437.7" fill="#2878a5" stroke="#2878a5" stroke-width="0.6"/>
<polygon points="1541.0,469.2 1543.2,467.4 1549.1,452.6 1545.7,455.3" fill="#1d597a" stroke="#1d597a" stroke-width="0.6"/>
<polygon points="1537.1,470.3 1541.0,469.2 1545.7,455.3 1539.8,456.9" fill="#22658b" stroke="#22658b" stroke-width="0.6"/>
<polygon points="1532.5,470.2 1537.1,470.3 1539.8,456.9 1532.9,456.9" fill="#2776a2" stroke="#2776a2" stroke-width="0.6"/>
<polygon points="1495.7,553.7 1532.8,486.3 1539.6,469.9 1501.7,538.7" fill="#1d5777" stroke="#1d5777" stroke-width="0.6"/>
<polygon points="1334.7,533.5 1336.9,535.5 1331.2,521.0 1327.9,518.0" fill="#26739e" stroke="#26739e" stroke-width="0.6"/>
<polygon points="1336.9,535.5 1340.9,536.7 1337.2,522.7 1331.2,521.0" fill="#2777a3" stroke="#2777a3" stroke-width="0.6"/>
<polygon points="1340.9,536.7 1484.6,556.8 1484.8,543.2 1337.2,522.7" fill="#2878a5" stroke="#2878a5" stroke-width="0.6"/>
<polygon points="1493.4,555.7 1495.7,553.7 1501.7,538.7 1498.1,541.6" fill="#1d597a" stroke="#1d597a" stroke-width="0.6"/>
<polygon points="1489.3,556.8 1493.4,555.7 1498.1,541.6 1492.0,543.3" fill="#22658b" stroke="#22658b" stroke-width="0.6"/>
<polygon points="1484.6,556.8 1489.3,556.8 1492.0,543.3 1484.8,543.2" fill="#2776a2" stroke="#2776a2" stroke-width="0.6"/>
<polygon points="1444.8,646.2 1484.6,574.0 1491.5,557.2 1450.8,630.9" fill="#1d5777" stroke="#1d5777" stroke-width="0.6"/>
<polygon points="1278.5,624.6 1280.7,626.7 1274.7,611.9 1271.3,608.7" fill="#26739e" stroke="#26739e" stroke-width="0.6"/>
<polygon points="1280.7,626.7 1284.8,628.0 1280.8,613.8 1274.7,611.9" fill="#2777a3" stroke="#2777a3" stroke-width="0.6"/>
<polygon points="1284.8,628.0 1433.2,649.5 1433.3,635.8 1280.8,613.8" fill="#2878a5" stroke="#2878a5" stroke-width="0.6"/>
<polygon points="1442.4,648.4 1444.8,646.2 1450.8,630.9 1447.1,634.1" fill="#1d597a" stroke="#1d597a" stroke-width="0.6"/>
<polygon points="1438.1,649.6 1442.4,648.4 1447.1,634.1 1440.7,635.9" fill="#22658b" stroke="#22658b" stroke-width="0.6"/>
<polygon points="1433.2,649.5 1438.1,649.6 1440.7,635.9 1433.3,635.8" fill="#2776a2" stroke="#2776a2" stroke-width="0.6"/>
<polygon points="1432.9,668.0 1432.9,665.5 1440.0,647.0 1439.9,650.8" fill="#1c5372" stroke="#1c5372" stroke-width="0.6"/>
<polygon points="1390.2,745.7 1432.9,668.0 1439.9,650.8 1396.2,730.0" fill="#1d5777" stroke="#1d5777" stroke-width="0.6"/>
<polygon points="1218.1,722.4 1220.4,724.7 1213.9,709.6 1210.5,706.2" fill="#26739e" stroke="#26739e" stroke-width="0.6"/>
<polygon points="1220.4,724.7 1224.6,726.0 1220.3,711.7 1213.9,709.6" fill="#2777a3" stroke="#2777a3" stroke-width="0.6"/>
<polygon points="1224.6,726.0 1378.0,749.2 1377.9,735.3 1220.3,711.7" fill="#2878a5" stroke="#2878a5" stroke-width="0.6"/>
<polygon points="1387.5,747.9 1390.2,745.7 1396.2,730.0 1392.3,733.5" fill="#1d597a" stroke="#1d597a" stroke-width="0.6"/>
<polygon points="1383.1,749.2 1387.5,747.9 1392.3,733.5 1385.6,735.4" fill="#22658b" stroke="#22658b" stroke-width="0.6"/>
<polygon points="1378.0,749.2 1383.1,749.2 1385.6,735.4 1377.9,735.3" fill="#2776a2" stroke="#2776a2" stroke-width="0.6"/>
<polygon points="1377.3,769.1 1377.4,766.4 1384.6,747.4 1384.4,751.4" fill="#1c5372" stroke="#1c5372" stroke-width="0.6"/>
<polygon points="1331.3,852.7 1377.3,769.1 1384.4,751.4 1337.4,836.9" fill="#1d5777" stroke="#1d5777" stroke-width="0.6"/>
<polygon points="1153.1,827.7 1155.5,830.1 1148.5,814.8 1145.0,811.1" fill="#26739e" stroke="#26739e" stroke-width="0.6"/>
<polygon points="1155.5,830.1 1159.8,831.6 1155.1,817.0 1148.5,814.8" fill="#2777a3" stroke="#2777a3" stroke-width="0.6"/>
<polygon points="1159.8,831.6 1318.5,856.5 1318.2,842.6 1155.1,817.0" fill="#2878a5" stroke="#2878a5" stroke-width="0.6"/>
<polygon points="1328.5,855.2 1331.3,852.7 1337.4,836.9 1333.2,840.5" fill="#1d597a" stroke="#1d597a" stroke-width="0.6"/>
<polygon points="1323.8,856.6 1328.5,855.2 1333.2,840.5 1326.2,842.6" fill="#22658b" stroke="#22658b" stroke-width="0.6"/>
<polygon points="1318.5,856.5 1323.8,856.6 1326.2,842.6 1318.2,842.6" fill="#2776a2" stroke="#2776a2" stroke-width="0.6"/>
<polygon points="1583.1,394.6 1583.5,393.0 1588.3,389.3 1587.9,391.6" fill="#12364a" stroke="#12364a" stroke-width="0.6"/>
<polygon points="1335.9,843.9 1583.1,394.6 1587.9,391.6 1341.2,841.2" fill="#12374c" stroke="#12374c" stroke-width="0.6"/>
<polygon points="1146.5,816.7 1147.1,818.9 1141.5,816.2 1140.7,813.1" fill="#17455e" stroke="#17455e" stroke-width="0.6"/>
<polygon points="1147.1,818.9 1149.0,821.0 1144.1,819.0 1141.5,816.2" fill="#184965" stroke="#184965" stroke-width="0.6"/>
<polygon points="1149.0,821.0 1152.0,822.5 1148.2,821.1 1144.1,819.0" fill="#194b66" stroke="#194b66" stroke-width="0.6"/>
<polygon points="1152.0,822.5 1155.8,823.5 1153.4,822.5 1148.2,821.1" fill="#194c69" stroke="#194c69" stroke-width="0.6"/>
<polygon points="1155.8,823.5 1318.8,849.1 1317.6,848.2 1153.4,822.5" fill="#194d69" stroke="#194d69" stroke-width="0.6"/>
<polygon points="1334.1,846.1 1335.9,843.9 1341.2,841.2 1338.6,844.1" fill="#13384d" stroke="#13384d" stroke-width="0.6"/>
<polygon points="1331.1,847.8 1334.1,846.1 1338.6,844.1 1334.5,846.4" fill="#13394e" stroke="#13394e" stroke-width="0.6"/>
<polygon points="1327.3,848.9 1331.1,847.8 1334.5,846.4 1329.3,848.0" fill="#154159" stroke="#154159" stroke-width="0.6"/>
<polygon points="1323.0,849.4 1327.3,848.9 1329.3,848.0 1323.4,848.6" fill="#184863" stroke="#184863" stroke-width="0.6"/>
<polygon points="1318.8,849.1 1323.0,849.4 1323.4,848.6 1317.6,848.2" fill="#194c68" stroke="#194c68" stroke-width="0.6"/>
<polygon points="1587.9,391.6 1588.3,389.3 1592.9,303.5 1592.5,305.7" fill="#194b67" stroke="#194b67" stroke-width="0.6"/>
<polygon points="1341.2,841.2 1587.9,391.6 1592.5,305.7 1342.2,747.1" fill="#1a4d6a" stroke="#1a4d6a" stroke-width="0.6"/>
<polygon points="1140.7,813.1 1141.5,816.2 1135.1,721.9 1134.3,718.9" fill="#206083" stroke="#206083" stroke-width="0.6"/>
<polygon points="1141.5,816.2 1144.1,819.0 1137.7,724.6 1135.1,721.9" fill="#22668c" stroke="#22668c" stroke-width="0.6"/>
<polygon points="1144.1,819.0 1148.2,821.1 1141.9,726.7 1137.7,724.6" fill="#22688e" stroke="#22688e" stroke-width="0.6"/>
<polygon points="1148.2,821.1 1153.4,822.5 1147.2,728.0 1141.9,726.7" fill="#236a92" stroke="#236a92" stroke-width="0.6"/>
<polygon points="1153.4,822.5 1317.6,848.2 1318.3,754.0 1147.2,728.0" fill="#236b92" stroke="#236b92" stroke-width="0.6"/>
<polygon points="1338.6,844.1 1341.2,841.2 1342.2,747.1 1339.6,750.0" fill="#1a4e6b" stroke="#1a4e6b" stroke-width="0.6"/>
<polygon points="1334.5,846.4 1338.6,844.1 1339.6,750.0 1335.4,752.3" fill="#1a4f6c" stroke="#1a4f6c" stroke-width="0.6"/>
<polygon points="1329.3,848.0 1334.5,846.4 1335.4,752.3 1330.2,753.8" fill="#1e5a7b" stroke="#1e5a7b" stroke-width="0.6"/>
<polygon points="1323.4,848.6 1329.3,848.0 1330.2,753.8 1324.2,754.4" fill="#216489" stroke="#216489" stroke-width="0.6"/>
<polygon points="1317.6,848.2 1323.4,848.6 1324.2,754.4 1318.3,754.0" fill="#236a91" stroke="#236a91" stroke-width="0.6"/>
<polygon points="1592.5,305.7 1592.9,303.5 1590.7,301.3 1590.3,303.2" fill="#1c5473" stroke="#1c5473" stroke-width="0.6"/>
<polygon points="1342.2,747.1 1592.5,305.7 1590.3,303.2 1339.8,743.8" fill="#1d5676" stroke="#1d5676" stroke-width="0.6"/>
<polygon points="1134.3,718.9 1135.1,721.9 1137.6,718.7 1136.9,716.0" fill="#236b93" stroke="#236b93" stroke-width="0.6"/>
<polygon points="1135.1,721.9 1137.7,724.6 1140.0,721.2 1137.6,718.7" fill="#26729d" stroke="#26729d" stroke-width="0.6"/>
<polygon points="1137.7,724.6 1141.9,726.7 1143.7,723.0 1140.0,721.2" fill="#26749f" stroke="#26749f" stroke-width="0.6"/>
<polygon points="1141.9,726.7 1147.2,728.0 1148.4,724.2 1143.7,723.0" fill="#2777a3" stroke="#2777a3" stroke-width="0.6"/>
<polygon points="1147.2,728.0 1318.3,754.0 1318.5,750.0 1148.4,724.2" fill="#2877a4" stroke="#2877a4" stroke-width="0.6"/>
<polygon points="1339.6,750.0 1342.2,747.1 1339.8,743.8 1337.5,746.4" fill="#1d5878" stroke="#1d5878" stroke-width="0.6"/>
<polygon points="1335.4,752.3 1339.6,750.0 1337.5,746.4 1333.8,748.4" fill="#1d5879" stroke="#1d5879" stroke-width="0.6"/>
<polygon points="1330.2,753.8 1335.4,752.3 1333.8,748.4 1329.1,749.8" fill="#21648a" stroke="#21648a" stroke-width="0.6"/>
<polygon points="1324.2,754.4 1330.2,753.8 1329.1,749.8 1323.8,750.3" fill="#25709a" stroke="#25709a" stroke-width="0.6"/>
<polygon points="1318.3,754.0 1324.2,754.4 1323.8,750.3 1318.5,750.0" fill="#2776a2" stroke="#2776a2" stroke-width="0.6"/>
<polygon points="1318.5,750.0 1323.8,750.3 1329.1,749.8 1333.8,748.4 1337.5,746.4 1339.8,743.8 1590.3,303.2 1590.7,301.3 1589.7,299.3 1587.4,297.6 1584.0,296.3 1579.9,295.4 1435.3,277.4 1430.9,277.1 1426.5,277.5 1422.7,278.4 1419.6,279.8 1417.8,281.6 1137.8,713.3 1136.9,716.0 1137.6,718.7 1140.0,721.2 1143.7,723.0 1148.4,724.2" fill="#2d87ba"/>
<clipPath id="c6"><polygon points="1318.3,748.5 1323.1,748.8 1327.9,748.3 1332.2,747.1 1335.5,745.2 1337.7,742.9 1588.0,303.3 1588.4,301.6 1587.5,299.8 1585.4,298.2 1582.3,297.0 1578.5,296.2 1435.6,278.4 1431.6,278.1 1427.6,278.5 1424.1,279.3 1421.3,280.6 1419.6,282.2 1140.6,713.2 1139.7,715.7 1140.4,718.1 1142.5,720.3 1145.9,722.0 1150.2,723.1"/></clipPath>
<g clip-path="url(#c6)">
<polygon points="1318.4,757.3 1323.2,757.6 1328.0,757.2 1332.3,755.9 1335.6,754.0 1337.7,751.7 1587.8,311.2 1588.2,309.4 1587.3,307.6 1585.2,306.0 1582.1,304.8 1578.4,304.0 1435.5,286.1 1431.5,285.9 1427.6,286.2 1424.0,287.1 1421.3,288.4 1419.6,290.0 1140.8,721.9 1140.0,724.4 1140.7,726.9 1142.8,729.1 1146.2,730.8 1150.5,731.8" fill="#2b82b3"/>
<polygon points="1435.5,286.1 1431.5,285.9 1431.6,278.1 1435.6,278.4" fill="#236a91" stroke="#236a91" stroke-width="0.6"/>
<polygon points="1431.5,285.9 1427.6,286.2 1427.6,278.5 1431.6,278.1" fill="#216489" stroke="#216489" stroke-width="0.6"/>
<polygon points="1427.6,286.2 1424.0,287.1 1424.1,279.3 1427.6,278.5" fill="#1e5a7b" stroke="#1e5a7b" stroke-width="0.6"/>
<polygon points="1424.0,287.1 1421.3,288.4 1421.3,280.6 1424.1,279.3" fill="#1a4f6c" stroke="#1a4f6c" stroke-width="0.6"/>
<polygon points="1421.3,288.4 1419.6,290.0 1419.6,282.2 1421.3,280.6" fill="#1a4e6b" stroke="#1a4e6b" stroke-width="0.6"/>
<polygon points="1578.4,304.0 1435.5,286.1 1435.6,278.4 1578.5,296.2" fill="#236b92" stroke="#236b92" stroke-width="0.6"/>
<polygon points="1582.1,304.8 1578.4,304.0 1578.5,296.2 1582.3,297.0" fill="#236a92" stroke="#236a92" stroke-width="0.6"/>
<polygon points="1585.2,306.0 1582.1,304.8 1582.3,297.0 1585.4,298.2" fill="#22688e" stroke="#22688e" stroke-width="0.6"/>
<polygon points="1587.3,307.6 1585.2,306.0 1585.4,298.2 1587.5,299.8" fill="#22668c" stroke="#22668c" stroke-width="0.6"/>
<polygon points="1588.2,309.4 1587.3,307.6 1587.5,299.8 1588.4,301.6" fill="#206083" stroke="#206083" stroke-width="0.6"/>
<polygon points="1419.6,290.0 1140.8,721.9 1140.6,713.2 1419.6,282.2" fill="#1a4d6a" stroke="#1a4d6a" stroke-width="0.6"/>
<polygon points="1140.8,721.9 1140.0,724.4 1139.7,715.7 1140.6,713.2" fill="#194b67" stroke="#194b67" stroke-width="0.6"/>
<clipPath id="c5"><polygon points="1318.9,754.6 1322.4,754.8 1325.9,754.4 1329.1,753.5 1331.5,752.2 1333.1,750.5 1583.4,311.0 1583.7,309.7 1583.0,308.4 1581.5,307.2 1579.2,306.3 1576.5,305.8 1435.2,288.0 1432.3,287.9 1429.4,288.1 1426.8,288.8 1424.8,289.7 1423.5,290.9 1146.0,722.1 1145.4,724.0 1145.9,725.8 1147.5,727.4 1149.9,728.6 1153.1,729.4"/></clipPath>
<g clip-path="url(#c5)">
<polygon points="1318.9,756.8 1322.4,757.0 1325.9,756.6 1329.1,755.7 1331.5,754.4 1333.1,752.7 1583.4,313.0 1583.6,311.6 1583.0,310.3 1581.4,309.2 1579.2,308.3 1576.4,307.7 1435.2,290.0 1432.3,289.8 1429.3,290.1 1426.8,290.7 1424.8,291.7 1423.5,292.8 1146.1,724.3 1145.5,726.1 1146.0,727.9 1147.6,729.6 1150.0,730.8 1153.1,731.6" fill="#2b82b3"/>
<polygon points="1435.2,290.0 1432.3,289.8 1432.3,287.9 1435.2,288.0" fill="#236a91" stroke="#236a91" stroke-width="0.6"/>
<polygon points="1432.3,289.8 1429.3,290.1 1429.4,288.1 1432.3,287.9" fill="#216489" stroke="#216489" stroke-width="0.6"/>
<polygon points="1429.3,290.1 1426.8,290.7 1426.8,288.8 1429.4,288.1" fill="#1e5a7b" stroke="#1e5a7b" stroke-width="0.6"/>
<polygon points="1426.8,290.7 1424.8,291.7 1424.8,289.7 1426.8,288.8" fill="#1a4f6c" stroke="#1a4f6c" stroke-width="0.6"/>
<polygon points="1424.8,291.7 1423.5,292.8 1423.5,290.9 1424.8,289.7" fill="#1a4e6b" stroke="#1a4e6b" stroke-width="0.6"/>
<polygon points="1576.4,307.7 1435.2,290.0 1435.2,288.0 1576.5,305.8" fill="#236b92" stroke="#236b92" stroke-width="0.6"/>
<polygon points="1579.2,308.3 1576.4,307.7 1576.5,305.8 1579.2,306.3" fill="#236a92" stroke="#236a92" stroke-width="0.6"/>
<polygon points="1581.4,309.2 1579.2,308.3 1579.2,306.3 1581.5,307.2" fill="#22688e" stroke="#22688e" stroke-width="0.6"/>
<polygon points="1583.0,310.3 1581.4,309.2 1581.5,307.2 1583.0,308.4" fill="#22668c" stroke="#22668c" stroke-width="0.6"/>
<polygon points="1583.6,311.6 1583.0,310.3 1583.0,308.4 1583.7,309.7" fill="#206083" stroke="#206083" stroke-width="0.6"/>
<polygon points="1423.5,292.8 1146.1,724.3 1146.0,722.1 1423.5,290.9" fill="#1a4d6a" stroke="#1a4d6a" stroke-width="0.6"/>
<polygon points="1146.1,724.3 1145.5,726.1 1145.4,724.0 1146.0,722.1" fill="#194b67" stroke="#194b67" stroke-width="0.6"/>
<polygon points="1484.9,317.1 1485.7,314.8 1485.3,312.3 1483.7,310.0 1481.0,307.9 1477.3,306.1 1472.9,304.7 1467.8,303.8 1462.4,303.4 1457.0,303.6 1451.8,304.2 1447.1,305.4 1443.1,307.0 1440.0,309.0 1437.9,311.2 1437.1,313.6 1437.4,316.0 1439.0,318.3 1441.7,320.4 1445.3,322.2 1449.8,323.7 1454.9,324.6 1460.3,325.0 1465.8,324.9 1471.0,324.2 1475.8,323.0 1479.8,321.4 1482.9,319.4" fill="url(#hg)"/>
<polyline points="1486.8,313.4 1485.7,311.1 1483.7,308.9 1480.6,306.9 1476.8,305.3 1472.2,304.1 1467.2,303.3 1462.0,302.9 1456.7,303.1 1451.6,303.7 1447.0,304.8 1442.9,306.3 1439.7,308.2 1437.4,310.3 1436.2,312.6" fill="none" stroke="#359fda" stroke-width="1.6"/>
<polygon points="1555.0,326.0 1555.8,323.6 1555.3,321.2 1553.6,318.9 1550.8,316.7 1547.1,314.9 1542.5,313.5 1537.4,312.6 1532.0,312.2 1526.6,312.4 1521.4,313.0 1516.7,314.2 1512.7,315.8 1509.6,317.8 1507.7,320.0 1506.9,322.4 1507.3,324.9 1508.9,327.2 1511.7,329.3 1515.4,331.2 1520.0,332.6 1525.1,333.5 1530.6,333.9 1536.1,333.8 1541.3,333.1 1546.0,331.9 1550.0,330.3 1553.1,328.3" fill="url(#hg)"/>
<polyline points="1556.7,322.2 1555.7,319.9 1553.5,317.7 1550.4,315.7 1546.5,314.1 1541.9,312.9 1536.8,312.1 1531.6,311.7 1526.3,311.9 1521.2,312.5 1516.6,313.6 1512.6,315.2 1509.4,317.0 1507.1,319.1 1505.9,321.4" fill="none" stroke="#359fda" stroke-width="1.6"/>
<polygon points="1469.4,342.6 1470.3,340.1 1469.9,337.7 1468.3,335.3 1465.5,333.1 1461.8,331.3 1457.3,329.9 1452.2,329.0 1446.8,328.6 1441.3,328.7 1436.0,329.4 1431.3,330.6 1427.2,332.2 1424.0,334.2 1421.9,336.5 1421.1,338.9 1421.4,341.4 1423.0,343.8 1425.7,345.9 1429.4,347.8 1433.9,349.2 1439.0,350.2 1444.5,350.6 1450.0,350.4 1455.3,349.8 1460.2,348.5 1464.2,346.9 1467.4,344.9" fill="url(#hg)"/>
<polyline points="1471.3,338.7 1470.3,336.4 1468.2,334.1 1465.2,332.1 1461.3,330.5 1456.7,329.2 1451.6,328.4 1446.3,328.1 1441.0,328.2 1435.9,328.9 1431.1,330.0 1427.1,331.5 1423.8,333.4 1421.4,335.6 1420.2,337.9" fill="none" stroke="#359fda" stroke-width="1.6"/>
<polygon points="1540.2,351.7 1541.0,349.2 1540.5,346.7 1538.8,344.3 1536.0,342.2 1532.2,340.3 1527.7,338.9 1522.5,337.9 1517.1,337.5 1511.6,337.7 1506.3,338.4 1501.5,339.6 1497.5,341.2 1494.4,343.2 1492.4,345.5 1491.6,348.0 1492.0,350.5 1493.6,352.9 1496.4,355.0 1500.2,356.9 1504.8,358.4 1509.9,359.3 1515.4,359.7 1521.0,359.6 1526.3,358.9 1531.1,357.7 1535.1,356.0 1538.2,354.0" fill="url(#hg)"/>
<polyline points="1542.0,347.8 1540.9,345.4 1538.7,343.1 1535.6,341.1 1531.6,339.5 1527.0,338.2 1521.9,337.4 1516.6,337.0 1511.2,337.2 1506.1,337.9 1501.4,339.0 1497.4,340.5 1494.1,342.4 1491.8,344.6 1490.6,347.0" fill="none" stroke="#359fda" stroke-width="1.6"/>
<polygon points="1453.6,368.6 1454.4,366.1 1454.0,363.5 1452.4,361.1 1449.7,358.9 1446.0,357.1 1441.4,355.6 1436.3,354.7 1430.8,354.2 1425.2,354.4 1419.9,355.1 1415.1,356.3 1410.9,358.0 1407.7,360.0 1405.6,362.3 1404.7,364.8 1405.0,367.3 1406.6,369.8 1409.3,372.0 1413.0,373.9 1417.6,375.4 1422.8,376.3 1428.3,376.7 1433.9,376.6 1439.3,375.9 1444.2,374.7 1448.3,373.0 1451.5,370.9" fill="url(#hg)"/>
<polyline points="1455.5,364.6 1454.5,362.2 1452.4,359.9 1449.3,357.9 1445.4,356.2 1440.8,354.9 1435.7,354.1 1430.3,353.7 1424.9,353.9 1419.7,354.6 1415.0,355.7 1410.8,357.3 1407.5,359.2 1405.1,361.4 1403.8,363.8" fill="none" stroke="#359fda" stroke-width="1.6"/>
<polygon points="1525.1,377.8 1525.9,375.3 1525.4,372.8 1523.7,370.3 1520.9,368.1 1517.1,366.2 1512.5,364.8 1507.3,363.8 1501.8,363.4 1496.2,363.5 1490.9,364.2 1486.1,365.5 1482.0,367.2 1478.8,369.2 1476.8,371.6 1475.9,374.1 1476.3,376.6 1477.9,379.1 1480.7,381.3 1484.5,383.2 1489.2,384.7 1494.4,385.7 1500.0,386.1 1505.6,385.9 1511.0,385.2 1515.8,384.0 1519.9,382.3 1523.0,380.2" fill="url(#hg)"/>
<polyline points="1526.9,373.9 1525.8,371.4 1523.6,369.1 1520.5,367.1 1516.5,365.4 1511.8,364.1 1506.7,363.2 1501.3,362.9 1495.9,363.1 1490.7,363.7 1485.9,364.9 1481.8,366.5 1478.5,368.4 1476.2,370.6 1475.0,373.0" fill="none" stroke="#359fda" stroke-width="1.6"/>
<polygon points="1437.3,395.1 1438.2,392.6 1437.9,390.0 1436.3,387.5 1433.5,385.3 1429.7,383.4 1425.1,381.9 1420.0,380.9 1414.4,380.5 1408.8,380.6 1403.4,381.3 1398.5,382.6 1394.3,384.3 1391.1,386.4 1388.9,388.8 1388.0,391.3 1388.3,393.9 1389.8,396.4 1392.6,398.6 1396.3,400.6 1401.0,402.1 1406.2,403.1 1411.8,403.5 1417.4,403.3 1422.9,402.6 1427.8,401.4 1432.0,399.6 1435.2,397.5" fill="url(#hg)"/>
<polyline points="1439.3,391.1 1438.3,388.6 1436.2,386.3 1433.1,384.2 1429.2,382.5 1424.5,381.2 1419.4,380.3 1414.0,380.0 1408.5,380.1 1403.2,380.8 1398.4,382.0 1394.2,383.6 1390.8,385.6 1388.4,387.8 1387.1,390.2" fill="none" stroke="#359fda" stroke-width="1.6"/>
<polygon points="1509.6,404.6 1510.4,402.0 1510.0,399.4 1508.3,396.9 1505.5,394.7 1501.6,392.8 1496.9,391.3 1491.7,390.3 1486.1,389.8 1480.5,390.0 1475.1,390.7 1470.2,392.0 1466.1,393.7 1462.9,395.8 1460.8,398.2 1459.9,400.8 1460.3,403.3 1461.9,405.9 1464.7,408.1 1468.6,410.1 1473.3,411.6 1478.6,412.6 1484.2,413.0 1489.8,412.9 1495.3,412.2 1500.2,410.9 1504.3,409.1 1507.5,407.0" fill="url(#hg)"/>
<polyline points="1511.4,400.5 1510.4,398.1 1508.2,395.7 1505.0,393.6 1501.0,391.9 1496.3,390.5 1491.1,389.7 1485.6,389.3 1480.2,389.5 1474.9,390.2 1470.1,391.4 1465.9,393.0 1462.6,395.0 1460.2,397.2 1459.0,399.7" fill="none" stroke="#359fda" stroke-width="1.6"/>
<polygon points="1420.8,422.3 1421.7,419.7 1421.4,417.0 1419.8,414.5 1417.0,412.2 1413.2,410.2 1408.5,408.7 1403.3,407.7 1397.7,407.3 1392.0,407.4 1386.6,408.2 1381.6,409.4 1377.4,411.2 1374.1,413.3 1371.9,415.8 1370.9,418.4 1371.2,421.0 1372.7,423.5 1375.5,425.9 1379.3,427.8 1383.9,429.4 1389.2,430.4 1394.9,430.8 1400.6,430.7 1406.1,429.9 1411.1,428.7 1415.3,426.9 1418.6,424.7" fill="url(#hg)"/>
<polyline points="1422.8,418.2 1421.8,415.6 1419.7,413.2 1416.6,411.1 1412.6,409.4 1407.9,408.0 1402.7,407.1 1397.2,406.8 1391.7,406.9 1386.4,407.6 1381.5,408.8 1377.2,410.5 1373.8,412.5 1371.4,414.8 1370.0,417.3" fill="none" stroke="#359fda" stroke-width="1.6"/>
<polygon points="1493.8,432.0 1494.6,429.3 1494.2,426.7 1492.5,424.1 1489.6,421.8 1485.8,419.9 1481.1,418.3 1475.8,417.3 1470.1,416.9 1464.5,417.0 1459.0,417.8 1454.1,419.0 1449.8,420.8 1446.6,423.0 1444.5,425.4 1443.6,428.0 1443.9,430.7 1445.6,433.2 1448.4,435.6 1452.3,437.6 1457.0,439.1 1462.3,440.2 1468.0,440.6 1473.7,440.4 1479.2,439.7 1484.2,438.4 1488.4,436.6 1491.7,434.4" fill="url(#hg)"/>
<polyline points="1495.7,427.8 1494.6,425.3 1492.4,422.9 1489.2,420.7 1485.2,418.9 1480.4,417.6 1475.2,416.7 1469.7,416.3 1464.1,416.5 1458.8,417.2 1453.9,418.4 1449.7,420.1 1446.3,422.1 1443.9,424.4 1442.6,427.0" fill="none" stroke="#359fda" stroke-width="1.6"/>
<polygon points="1403.8,450.0 1404.8,447.4 1404.5,444.7 1402.9,442.1 1400.1,439.7 1396.2,437.7 1391.6,436.2 1386.3,435.2 1380.6,434.7 1374.9,434.9 1369.4,435.6 1364.3,436.9 1360.0,438.7 1356.7,440.9 1354.4,443.4 1353.4,446.0 1353.7,448.7 1355.2,451.3 1358.0,453.7 1361.8,455.7 1366.5,457.3 1371.9,458.3 1377.6,458.8 1383.4,458.6 1388.9,457.9 1394.0,456.6 1398.3,454.8 1401.6,452.5" fill="url(#hg)"/>
<polyline points="1405.9,445.8 1404.9,443.2 1402.8,440.8 1399.7,438.6 1395.7,436.8 1390.9,435.4 1385.7,434.5 1380.1,434.2 1374.6,434.4 1369.2,435.1 1364.2,436.3 1359.9,438.0 1356.4,440.0 1353.9,442.4 1352.5,444.9" fill="none" stroke="#359fda" stroke-width="1.6"/>
<polygon points="1477.6,460.0 1478.5,457.3 1478.0,454.6 1476.4,451.9 1473.5,449.6 1469.6,447.6 1464.8,446.0 1459.5,445.0 1453.8,444.5 1448.1,444.7 1442.5,445.4 1437.5,446.7 1433.2,448.5 1429.9,450.7 1427.8,453.3 1426.8,455.9 1427.2,458.6 1428.8,461.3 1431.7,463.7 1435.6,465.7 1440.3,467.3 1445.7,468.3 1451.5,468.8 1457.3,468.6 1462.8,467.9 1467.9,466.5 1472.2,464.7 1475.5,462.5" fill="url(#hg)"/>
<polyline points="1479.5,455.7 1478.5,453.1 1476.3,450.7 1473.1,448.5 1469.0,446.6 1464.2,445.2 1458.9,444.3 1453.3,444.0 1447.7,444.2 1442.3,444.9 1437.4,446.1 1433.1,447.8 1429.7,449.9 1427.2,452.3 1425.9,454.8" fill="none" stroke="#359fda" stroke-width="1.6"/>
<polygon points="1386.5,478.4 1387.5,475.7 1387.2,473.0 1385.6,470.3 1382.8,467.9 1378.9,465.9 1374.2,464.3 1368.8,463.2 1363.1,462.8 1357.3,462.9 1351.7,463.7 1346.6,465.0 1342.3,466.9 1338.8,469.1 1336.6,471.6 1335.5,474.4 1335.8,477.1 1337.3,479.8 1340.1,482.2 1344.0,484.3 1348.7,485.9 1354.1,486.9 1359.9,487.4 1365.7,487.2 1371.4,486.5 1376.5,485.1 1380.9,483.3 1384.3,481.0" fill="url(#hg)"/>
<polyline points="1388.6,474.1 1387.7,471.5 1385.5,469.0 1382.4,466.8 1378.3,464.9 1373.5,463.5 1368.2,462.6 1362.6,462.2 1357.0,462.4 1351.5,463.1 1346.5,464.4 1342.1,466.1 1338.6,468.2 1336.1,470.6 1334.6,473.2" fill="none" stroke="#359fda" stroke-width="1.6"/>
<polygon points="1461.0,488.6 1461.9,485.8 1461.5,483.1 1459.8,480.4 1457.0,478.0 1453.0,475.9 1448.2,474.3 1442.8,473.3 1437.1,472.8 1431.3,473.0 1425.7,473.7 1420.6,475.1 1416.3,476.9 1412.9,479.2 1410.7,481.7 1409.7,484.5 1410.1,487.3 1411.7,489.9 1414.6,492.4 1418.5,494.5 1423.3,496.1 1428.8,497.2 1434.6,497.6 1440.4,497.5 1446.1,496.7 1451.2,495.3 1455.5,493.5 1458.9,491.2" fill="url(#hg)"/>
<polyline points="1463.0,484.3 1462.0,481.6 1459.8,479.1 1456.6,476.8 1452.4,475.0 1447.6,473.5 1442.2,472.6 1436.6,472.2 1430.9,472.4 1425.5,473.2 1420.5,474.4 1416.1,476.2 1412.6,478.3 1410.1,480.7 1408.8,483.3" fill="none" stroke="#359fda" stroke-width="1.6"/>
<polygon points="1368.8,507.5 1369.8,504.7 1369.5,501.9 1367.9,499.2 1365.1,496.7 1361.2,494.6 1356.4,493.0 1351.0,491.9 1345.2,491.5 1339.4,491.6 1333.7,492.4 1328.5,493.8 1324.1,495.6 1320.6,497.9 1318.3,500.5 1317.2,503.3 1317.5,506.1 1319.0,508.9 1321.8,511.3 1325.7,513.5 1330.5,515.1 1335.9,516.2 1341.8,516.7 1347.7,516.5 1353.4,515.7 1358.6,514.3 1363.0,512.4 1366.5,510.1" fill="url(#hg)"/>
<polyline points="1371.0,503.1 1370.0,500.4 1367.9,497.8 1364.7,495.6 1360.6,493.7 1355.8,492.2 1350.4,491.3 1344.8,490.9 1339.0,491.1 1333.5,491.9 1328.4,493.1 1324.0,494.9 1320.4,497.0 1317.8,499.5 1316.3,502.2" fill="none" stroke="#359fda" stroke-width="1.6"/>
<polygon points="1444.1,517.9 1445.0,515.1 1444.6,512.2 1443.0,509.5 1440.0,507.0 1436.1,504.9 1431.2,503.3 1425.8,502.2 1420.0,501.7 1414.1,501.9 1408.4,502.7 1403.3,504.1 1398.9,505.9 1395.5,508.2 1393.2,510.9 1392.2,513.7 1392.5,516.5 1394.2,519.3 1397.1,521.8 1401.0,523.9 1405.9,525.6 1411.4,526.7 1417.3,527.1 1423.2,527.0 1428.9,526.2 1434.1,524.8 1438.5,522.9 1441.9,520.5" fill="url(#hg)"/>
<polyline points="1446.2,513.5 1445.1,510.7 1442.9,508.2 1439.6,505.9 1435.5,504.0 1430.6,502.5 1425.2,501.5 1419.5,501.2 1413.8,501.4 1408.2,502.1 1403.2,503.4 1398.8,505.2 1395.2,507.4 1392.7,509.8 1391.3,512.5" fill="none" stroke="#359fda" stroke-width="1.6"/>
<polygon points="1350.6,537.2 1351.7,534.4 1351.4,531.5 1349.8,528.7 1347.0,526.2 1343.0,524.1 1338.2,522.4 1332.8,521.3 1326.9,520.8 1321.0,521.0 1315.3,521.8 1310.0,523.2 1305.5,525.1 1302.0,527.5 1299.6,530.1 1298.5,533.0 1298.7,535.9 1300.3,538.6 1303.1,541.2 1307.0,543.4 1311.8,545.0 1317.3,546.1 1323.2,546.6 1329.2,546.5 1335.0,545.7 1340.3,544.2 1344.8,542.3 1348.3,539.9" fill="url(#hg)"/>
<polyline points="1352.9,532.7 1351.9,530.0 1349.8,527.4 1346.6,525.0 1342.5,523.1 1337.6,521.6 1332.2,520.7 1326.4,520.3 1320.7,520.5 1315.1,521.2 1309.9,522.5 1305.4,524.3 1301.8,526.5 1299.1,529.1 1297.6,531.8" fill="none" stroke="#359fda" stroke-width="1.6"/>
<polygon points="1426.8,547.9 1427.7,545.0 1427.4,542.1 1425.7,539.3 1422.7,536.8 1418.7,534.6 1413.9,532.9 1408.3,531.8 1402.5,531.3 1396.5,531.5 1390.8,532.3 1385.6,533.7 1381.1,535.6 1377.6,538.0 1375.3,540.7 1374.3,543.6 1374.6,546.5 1376.3,549.3 1379.1,551.8 1383.1,554.0 1388.0,555.7 1393.6,556.9 1399.5,557.3 1405.5,557.2 1411.3,556.4 1416.6,554.9 1421.0,553.0 1424.5,550.6" fill="url(#hg)"/>
<polyline points="1428.9,543.3 1427.8,540.5 1425.6,537.9 1422.3,535.6 1418.1,533.6 1413.2,532.1 1407.7,531.2 1402.0,530.8 1396.2,531.0 1390.6,531.7 1385.4,533.1 1381.0,534.9 1377.4,537.1 1374.8,539.6 1373.4,542.4" fill="none" stroke="#359fda" stroke-width="1.6"/>
<polygon points="1332.1,567.7 1333.1,564.8 1332.9,561.8 1331.3,559.0 1328.4,556.4 1324.5,554.2 1319.6,552.5 1314.1,551.4 1308.2,550.9 1302.2,551.1 1296.4,551.9 1291.1,553.3 1286.5,555.3 1282.9,557.7 1280.5,560.4 1279.3,563.3 1279.6,566.3 1281.1,569.1 1283.9,571.7 1287.9,573.9 1292.7,575.7 1298.3,576.8 1304.3,577.3 1310.3,577.1 1316.2,576.3 1321.5,574.9 1326.1,572.9 1329.7,570.4" fill="url(#hg)"/>
<polyline points="1334.3,563.1 1333.4,560.2 1331.3,557.6 1328.1,555.2 1323.9,553.2 1319.0,551.7 1313.5,550.7 1307.7,550.3 1301.9,550.5 1296.2,551.3 1291.0,552.6 1286.4,554.5 1282.7,556.7 1280.0,559.3 1278.4,562.1" fill="none" stroke="#359fda" stroke-width="1.6"/>
<polygon points="1409.0,578.6 1410.0,575.6 1409.6,572.7 1408.0,569.8 1405.0,567.2 1401.0,565.0 1396.1,563.3 1390.5,562.1 1384.5,561.7 1378.5,561.8 1372.7,562.6 1367.4,564.1 1362.9,566.1 1359.4,568.5 1357.0,571.2 1356.0,574.2 1356.3,577.1 1357.9,580.0 1360.8,582.6 1364.8,584.9 1369.8,586.6 1375.4,587.8 1381.4,588.3 1387.5,588.1 1393.3,587.3 1398.7,585.8 1403.2,583.8 1406.7,581.4" fill="url(#hg)"/>
<polyline points="1411.2,573.9 1410.1,571.1 1407.9,568.4 1404.6,566.0 1400.4,564.0 1395.4,562.4 1389.9,561.5 1384.0,561.1 1378.2,561.3 1372.5,562.0 1367.3,563.4 1362.8,565.3 1359.1,567.5 1356.5,570.1 1355.0,573.0" fill="none" stroke="#359fda" stroke-width="1.6"/>
<polygon points="1313.0,598.9 1314.1,595.9 1313.9,592.9 1312.3,590.0 1309.4,587.3 1305.4,585.1 1300.5,583.3 1295.0,582.2 1289.0,581.7 1282.9,581.9 1277.0,582.7 1271.7,584.1 1267.0,586.2 1263.4,588.6 1260.9,591.4 1259.7,594.4 1259.9,597.4 1261.5,600.3 1264.3,603.0 1268.3,605.3 1273.2,607.0 1278.8,608.2 1284.8,608.7 1291.0,608.5 1296.9,607.7 1302.3,606.2 1307.0,604.2 1310.6,601.7" fill="url(#hg)"/>
<polyline points="1315.4,594.2 1314.4,591.2 1312.3,588.5 1309.1,586.1 1304.9,584.0 1299.9,582.5 1294.4,581.5 1288.5,581.1 1282.6,581.3 1276.9,582.1 1271.6,583.5 1266.9,585.3 1263.1,587.7 1260.4,590.3 1258.8,593.2" fill="none" stroke="#359fda" stroke-width="1.6"/>
<polygon points="1390.8,610.0 1391.9,607.0 1391.5,604.0 1389.8,601.0 1386.9,598.4 1382.8,596.1 1377.8,594.3 1372.2,593.2 1366.2,592.7 1360.1,592.9 1354.2,593.7 1348.8,595.2 1344.3,597.2 1340.7,599.7 1338.3,602.5 1337.2,605.5 1337.5,608.6 1339.1,611.5 1342.0,614.2 1346.1,616.5 1351.1,618.3 1356.7,619.4 1362.8,620.0 1369.0,619.8 1374.9,618.9 1380.3,617.4 1384.9,615.4 1388.5,612.9" fill="url(#hg)"/>
<polyline points="1393.1,605.3 1392.0,602.3 1389.8,599.6 1386.5,597.1 1382.2,595.1 1377.2,593.5 1371.6,592.5 1365.7,592.1 1359.8,592.3 1354.0,593.1 1348.7,594.5 1344.1,596.4 1340.4,598.7 1337.7,601.4 1336.2,604.3" fill="none" stroke="#359fda" stroke-width="1.6"/>
<polygon points="1293.5,630.8 1294.7,627.7 1294.5,624.6 1292.9,621.7 1290.0,619.0 1286.0,616.7 1281.0,614.9 1275.4,613.7 1269.3,613.2 1263.2,613.4 1257.2,614.2 1251.8,615.7 1247.1,617.8 1243.4,620.3 1240.8,623.2 1239.6,626.2 1239.8,629.3 1241.3,632.3 1244.2,635.0 1248.2,637.4 1253.2,639.2 1258.8,640.4 1264.9,640.9 1271.1,640.7 1277.2,639.8 1282.7,638.3 1287.4,636.2 1291.1,633.7" fill="url(#hg)"/>
<polyline points="1296.0,626.0 1295.0,623.0 1292.9,620.2 1289.6,617.7 1285.4,615.6 1280.4,614.0 1274.8,613.0 1268.9,612.6 1262.9,612.8 1257.1,613.6 1251.7,615.0 1247.0,617.0 1243.1,619.3 1240.3,622.0 1238.7,625.0" fill="none" stroke="#359fda" stroke-width="1.6"/>
<polygon points="1372.2,642.2 1373.3,639.1 1373.0,636.0 1371.3,633.0 1368.3,630.3 1364.2,628.0 1359.2,626.2 1353.5,625.0 1347.4,624.5 1341.2,624.7 1335.3,625.5 1329.8,627.0 1325.2,629.1 1321.5,631.6 1319.1,634.5 1317.9,637.6 1318.2,640.7 1319.8,643.7 1322.8,646.5 1326.9,648.9 1331.9,650.7 1337.6,651.9 1343.8,652.4 1350.0,652.2 1356.0,651.4 1361.5,649.8 1366.2,647.7 1369.8,645.1" fill="url(#hg)"/>
<polyline points="1374.5,637.4 1373.5,634.4 1371.2,631.5 1367.9,629.0 1363.6,626.9 1358.5,625.3 1352.9,624.3 1346.9,623.8 1340.9,624.1 1335.1,624.9 1329.7,626.3 1325.0,628.3 1321.3,630.6 1318.5,633.4 1317.0,636.3" fill="none" stroke="#359fda" stroke-width="1.6"/>
<polygon points="1273.6,663.5 1274.8,660.4 1274.6,657.2 1273.0,654.2 1270.1,651.4 1266.0,649.0 1261.0,647.2 1255.3,646.0 1249.2,645.5 1243.0,645.7 1237.0,646.5 1231.4,648.1 1226.6,650.2 1222.9,652.8 1220.3,655.7 1219.0,658.8 1219.2,662.0 1220.7,665.1 1223.6,667.9 1227.6,670.3 1232.6,672.1 1238.4,673.3 1244.5,673.9 1250.8,673.7 1256.9,672.8 1262.5,671.2 1267.3,669.1 1271.0,666.5" fill="url(#hg)"/>
<polyline points="1276.1,658.6 1275.1,655.5 1273.0,652.7 1269.7,650.1 1265.5,648.0 1260.4,646.3 1254.7,645.3 1248.7,644.9 1242.7,645.1 1236.8,645.9 1231.3,647.4 1226.6,649.3 1222.6,651.8 1219.8,654.5 1218.1,657.5" fill="none" stroke="#359fda" stroke-width="1.6"/>
<polygon points="1353.1,675.2 1354.2,672.1 1353.9,668.9 1352.2,665.8 1349.2,663.0 1345.1,660.6 1340.0,658.8 1334.3,657.6 1328.1,657.0 1321.9,657.2 1315.9,658.1 1310.3,659.6 1305.6,661.8 1301.9,664.4 1299.4,667.3 1298.2,670.5 1298.5,673.7 1300.1,676.8 1303.0,679.6 1307.2,682.0 1312.3,683.9 1318.1,685.1 1324.3,685.7 1330.6,685.5 1336.7,684.6 1342.2,683.0 1347.0,680.9 1350.7,678.2" fill="url(#hg)"/>
<polyline points="1355.5,670.2 1354.5,667.2 1352.2,664.3 1348.9,661.7 1344.5,659.5 1339.4,657.9 1333.7,656.8 1327.6,656.4 1321.6,656.6 1315.7,657.5 1310.2,658.9 1305.5,660.9 1301.6,663.4 1298.9,666.2 1297.3,669.2" fill="none" stroke="#359fda" stroke-width="1.6"/>
<polygon points="1253.1,697.1 1254.3,693.8 1254.2,690.6 1252.6,687.5 1249.7,684.6 1245.6,682.2 1240.5,680.4 1234.8,679.1 1228.6,678.6 1222.3,678.8 1216.2,679.7 1210.5,681.2 1205.7,683.4 1201.9,686.0 1199.2,689.0 1197.9,692.2 1198.1,695.5 1199.6,698.6 1202.5,701.5 1206.5,704.0 1211.6,705.9 1217.4,707.1 1223.6,707.7 1230.0,707.5 1236.2,706.6 1241.8,705.0 1246.7,702.8 1250.5,700.1" fill="url(#hg)"/>
<polyline points="1255.7,692.0 1254.8,688.9 1252.6,685.9 1249.3,683.3 1245.0,681.1 1239.9,679.4 1234.2,678.4 1228.1,677.9 1222.0,678.1 1216.0,679.0 1210.5,680.5 1205.6,682.5 1201.6,685.0 1198.7,687.8 1197.0,690.9" fill="none" stroke="#359fda" stroke-width="1.6"/>
<polygon points="1333.6,709.1 1334.7,705.8 1334.4,702.5 1332.7,699.4 1329.7,696.5 1325.6,694.1 1320.4,692.2 1314.6,691.0 1308.4,690.4 1302.1,690.6 1296.0,691.5 1290.4,693.1 1285.5,695.3 1281.8,697.9 1279.2,701.0 1278.0,704.2 1278.2,707.5 1279.9,710.7 1282.8,713.6 1287.0,716.0 1292.1,717.9 1298.0,719.2 1304.3,719.8 1310.7,719.6 1316.8,718.7 1322.5,717.0 1327.3,714.8 1331.1,712.1" fill="url(#hg)"/>
<polyline points="1336.0,703.9 1335.0,700.8 1332.7,697.8 1329.4,695.2 1325.0,693.0 1319.8,691.3 1314.0,690.2 1307.9,689.8 1301.7,690.0 1295.8,690.9 1290.3,692.3 1285.4,694.4 1281.5,696.9 1278.7,699.8 1277.0,702.9" fill="none" stroke="#359fda" stroke-width="1.6"/>
<polygon points="1232.1,731.5 1233.4,728.2 1233.2,724.8 1231.6,721.6 1228.7,718.7 1224.6,716.2 1219.5,714.3 1213.7,713.0 1207.5,712.5 1201.1,712.7 1194.9,713.6 1189.2,715.2 1184.2,717.4 1180.3,720.1 1177.6,723.2 1176.3,726.5 1176.4,729.8 1177.9,733.1 1180.8,736.0 1184.9,738.5 1190.0,740.5 1195.9,741.8 1202.2,742.3 1208.7,742.1 1214.9,741.2 1220.7,739.6 1225.6,737.3 1229.5,734.6" fill="url(#hg)"/>
<polyline points="1234.8,726.2 1233.9,723.0 1231.7,720.0 1228.4,717.3 1224.1,715.1 1218.9,713.4 1213.1,712.3 1207.0,711.8 1200.8,712.0 1194.7,712.9 1189.1,714.5 1184.2,716.5 1180.1,719.1 1177.1,722.0 1175.4,725.2" fill="none" stroke="#359fda" stroke-width="1.6"/>
<polygon points="1313.5,743.8 1314.7,740.4 1314.4,737.1 1312.7,733.8 1309.7,730.9 1305.5,728.4 1300.3,726.5 1294.5,725.2 1288.2,724.6 1281.8,724.8 1275.6,725.8 1269.9,727.4 1265.0,729.6 1261.1,732.3 1258.5,735.4 1257.3,738.8 1257.5,742.1 1259.1,745.4 1262.1,748.4 1266.3,750.9 1271.5,752.9 1277.4,754.2 1283.8,754.7 1290.3,754.5 1296.5,753.6 1302.2,751.9 1307.1,749.7 1311.0,746.9" fill="url(#hg)"/>
<polyline points="1316.0,738.5 1315.0,735.3 1312.8,732.2 1309.3,729.5 1304.9,727.2 1299.7,725.5 1293.8,724.4 1287.7,724.0 1281.4,724.2 1275.4,725.1 1269.8,726.6 1264.9,728.7 1260.9,731.3 1258.0,734.2 1256.3,737.4" fill="none" stroke="#359fda" stroke-width="1.6"/>
</g>
</g>
<polygon points="1729.4,493.3 1759.6,429.0 1766.7,412.8 1735.8,478.4" fill="#1d5777" stroke="#1d5777" stroke-width="0.6"/>
<polygon points="1570.6,471.9 1570.7,474.1 1564.6,458.7 1564.5,455.5" fill="#21648a" stroke="#21648a" stroke-width="0.6"/>
<polygon points="1570.7,474.1 1573.1,476.0 1568.2,461.6 1564.6,458.7" fill="#26739e" stroke="#26739e" stroke-width="0.6"/>
<polygon points="1573.1,476.0 1577.1,477.1 1574.2,463.3 1568.2,461.6" fill="#2777a3" stroke="#2777a3" stroke-width="0.6"/>
<polygon points="1577.1,477.1 1718.7,496.2 1719.8,482.8 1574.2,463.3" fill="#2878a5" stroke="#2878a5" stroke-width="0.6"/>
<polygon points="1727.2,495.1 1729.4,493.3 1735.8,478.4 1732.6,481.2" fill="#1d597a" stroke="#1d597a" stroke-width="0.6"/>
<polygon points="1723.3,496.2 1727.2,495.1 1732.6,481.2 1726.7,482.8" fill="#22658b" stroke="#22658b" stroke-width="0.6"/>
<polygon points="1718.7,496.2 1723.3,496.2 1726.7,482.8 1719.8,482.8" fill="#2776a2" stroke="#2776a2" stroke-width="0.6"/>
<polygon points="1687.9,581.4 1720.3,512.6 1727.5,496.0 1694.4,566.3" fill="#1d5777" stroke="#1d5777" stroke-width="0.6"/>
<polygon points="1524.0,558.6 1524.0,560.9 1517.6,545.3 1517.6,541.8" fill="#21648a" stroke="#21648a" stroke-width="0.6"/>
<polygon points="1524.0,560.9 1526.4,562.9 1521.2,548.3 1517.6,545.3" fill="#26739e" stroke="#26739e" stroke-width="0.6"/>
<polygon points="1526.4,562.9 1530.6,564.1 1527.4,550.1 1521.2,548.3" fill="#2777a3" stroke="#2777a3" stroke-width="0.6"/>
<polygon points="1530.6,564.1 1676.8,584.6 1677.7,571.0 1527.4,550.1" fill="#2878a5" stroke="#2878a5" stroke-width="0.6"/>
<polygon points="1685.6,583.5 1687.9,581.4 1694.4,566.3 1691.0,569.3" fill="#1d597a" stroke="#1d597a" stroke-width="0.6"/>
<polygon points="1681.6,584.6 1685.6,583.5 1691.0,569.3 1684.9,571.0" fill="#22658b" stroke="#22658b" stroke-width="0.6"/>
<polygon points="1676.8,584.6 1681.6,584.6 1684.9,571.0 1677.7,571.0" fill="#2776a2" stroke="#2776a2" stroke-width="0.6"/>
<polygon points="1643.4,676.0 1678.1,602.2 1685.5,585.2 1650.0,660.6" fill="#1d5777" stroke="#1d5777" stroke-width="0.6"/>
<polygon points="1474.0,654.0 1476.4,656.1 1470.9,641.3 1467.2,638.0" fill="#26739e" stroke="#26739e" stroke-width="0.6"/>
<polygon points="1476.4,656.1 1480.7,657.4 1477.3,643.2 1470.9,641.3" fill="#2777a3" stroke="#2777a3" stroke-width="0.6"/>
<polygon points="1480.7,657.4 1631.8,679.4 1632.6,665.6 1477.3,643.2" fill="#2878a5" stroke="#2878a5" stroke-width="0.6"/>
<polygon points="1641.0,678.2 1643.4,676.0 1650.0,660.6 1646.4,663.8" fill="#1d597a" stroke="#1d597a" stroke-width="0.6"/>
<polygon points="1636.8,679.4 1641.0,678.2 1646.4,663.8 1640.1,665.7" fill="#22658b" stroke="#22658b" stroke-width="0.6"/>
<polygon points="1631.8,679.4 1636.8,679.4 1640.1,665.7 1632.6,665.6" fill="#2776a2" stroke="#2776a2" stroke-width="0.6"/>
<polygon points="1595.5,777.7 1632.9,698.3 1640.4,680.9 1602.2,762.0" fill="#1d5777" stroke="#1d5777" stroke-width="0.6"/>
<polygon points="1420.2,754.0 1422.7,756.3 1416.8,741.2 1413.1,737.7" fill="#26739e" stroke="#26739e" stroke-width="0.6"/>
<polygon points="1422.7,756.3 1427.1,757.7 1423.4,743.2 1416.8,741.2" fill="#2777a3" stroke="#2777a3" stroke-width="0.6"/>
<polygon points="1427.1,757.7 1583.5,781.3 1584.1,767.4 1423.4,743.2" fill="#2878a5" stroke="#2878a5" stroke-width="0.6"/>
<polygon points="1593.0,780.0 1595.5,777.7 1602.2,762.0 1598.5,765.5" fill="#1d597a" stroke="#1d597a" stroke-width="0.6"/>
<polygon points="1588.6,781.3 1593.0,780.0 1598.5,765.5 1591.9,767.5" fill="#22658b" stroke="#22658b" stroke-width="0.6"/>
<polygon points="1583.5,781.3 1588.6,781.3 1591.9,767.5 1584.1,767.4" fill="#2776a2" stroke="#2776a2" stroke-width="0.6"/>
<polygon points="1543.9,887.3 1584.2,801.7 1591.9,783.9 1550.7,871.3" fill="#1d5777" stroke="#1d5777" stroke-width="0.6"/>
<polygon points="1362.3,861.7 1364.8,864.2 1358.5,848.9 1354.7,845.1" fill="#26739e" stroke="#26739e" stroke-width="0.6"/>
<polygon points="1364.8,864.2 1369.4,865.7 1365.3,851.1 1358.5,848.9" fill="#2777a3" stroke="#2777a3" stroke-width="0.6"/>
<polygon points="1369.4,865.7 1531.3,891.2 1531.8,877.2 1365.3,851.1" fill="#2878a5" stroke="#2878a5" stroke-width="0.6"/>
<polygon points="1541.3,889.8 1543.9,887.3 1550.7,871.3 1546.8,875.1" fill="#1d597a" stroke="#1d597a" stroke-width="0.6"/>
<polygon points="1536.7,891.2 1541.3,889.8 1546.8,875.1 1539.9,877.2" fill="#22658b" stroke="#22658b" stroke-width="0.6"/>
<polygon points="1531.3,891.2 1536.7,891.2 1539.9,877.2 1531.8,877.2" fill="#2776a2" stroke="#2776a2" stroke-width="0.6"/>
<polygon points="1765.1,419.2 1765.3,417.5 1770.3,413.8 1770.1,416.1" fill="#12364a" stroke="#12364a" stroke-width="0.6"/>
<polygon points="1549.1,878.4 1765.1,419.2 1770.1,416.1 1554.6,875.7" fill="#12374c" stroke="#12374c" stroke-width="0.6"/>
<polygon points="1355.9,850.6 1356.6,852.9 1351.2,850.2 1350.1,847.0" fill="#17455e" stroke="#17455e" stroke-width="0.6"/>
<polygon points="1356.6,852.9 1358.7,855.0 1354.0,853.0 1351.2,850.2" fill="#184965" stroke="#184965" stroke-width="0.6"/>
<polygon points="1358.7,855.0 1361.9,856.6 1358.3,855.2 1354.0,853.0" fill="#194b66" stroke="#194b66" stroke-width="0.6"/>
<polygon points="1361.9,856.6 1365.8,857.6 1363.7,856.6 1358.3,855.2" fill="#194c69" stroke="#194c69" stroke-width="0.6"/>
<polygon points="1365.8,857.6 1532.1,883.7 1531.2,882.9 1363.7,856.6" fill="#194d69" stroke="#194d69" stroke-width="0.6"/>
<polygon points="1547.4,880.6 1549.1,878.4 1554.6,875.7 1552.2,878.7" fill="#13384d" stroke="#13384d" stroke-width="0.6"/>
<polygon points="1544.5,882.4 1547.4,880.6 1552.2,878.7 1548.2,881.1" fill="#13394e" stroke="#13394e" stroke-width="0.6"/>
<polygon points="1540.7,883.5 1544.5,882.4 1548.2,881.1 1543.1,882.7" fill="#154159" stroke="#154159" stroke-width="0.6"/>
<polygon points="1536.4,884.0 1540.7,883.5 1543.1,882.7 1537.2,883.3" fill="#184863" stroke="#184863" stroke-width="0.6"/>
<polygon points="1532.1,883.7 1536.4,884.0 1537.2,883.3 1531.2,882.9" fill="#194c68" stroke="#194c68" stroke-width="0.6"/>
<polygon points="1770.1,416.1 1770.3,413.8 1776.8,327.3 1776.6,329.6" fill="#194b67" stroke="#194b67" stroke-width="0.6"/>
<polygon points="1554.6,875.7 1770.1,416.1 1776.6,329.6 1558.4,780.9" fill="#1a4d6a" stroke="#1a4d6a" stroke-width="0.6"/>
<polygon points="1350.1,847.0 1351.2,850.2 1347.3,755.2 1346.3,752.1" fill="#206083" stroke="#206083" stroke-width="0.6"/>
<polygon points="1351.2,850.2 1354.0,853.0 1350.2,758.0 1347.3,755.2" fill="#22668c" stroke="#22668c" stroke-width="0.6"/>
<polygon points="1354.0,853.0 1358.3,855.2 1354.6,760.1 1350.2,758.0" fill="#22688e" stroke="#22688e" stroke-width="0.6"/>
<polygon points="1358.3,855.2 1363.7,856.6 1360.0,761.5 1354.6,760.1" fill="#236a92" stroke="#236a92" stroke-width="0.6"/>
<polygon points="1363.7,856.6 1531.2,882.9 1534.8,788.0 1360.0,761.5" fill="#236b92" stroke="#236b92" stroke-width="0.6"/>
<polygon points="1552.2,878.7 1554.6,875.7 1558.4,780.9 1556.0,783.9" fill="#1a4e6b" stroke="#1a4e6b" stroke-width="0.6"/>
<polygon points="1548.2,881.1 1552.2,878.7 1556.0,783.9 1552.0,786.2" fill="#1a4f6c" stroke="#1a4f6c" stroke-width="0.6"/>
<polygon points="1543.1,882.7 1548.2,881.1 1552.0,786.2 1546.7,787.8" fill="#1e5a7b" stroke="#1e5a7b" stroke-width="0.6"/>
<polygon points="1537.2,883.3 1543.1,882.7 1546.7,787.8 1540.8,788.4" fill="#216489" stroke="#216489" stroke-width="0.6"/>
<polygon points="1531.2,882.9 1537.2,883.3 1540.8,788.4 1534.8,788.0" fill="#236a91" stroke="#236a91" stroke-width="0.6"/>
<polygon points="1776.6,329.6 1776.8,327.3 1774.7,325.1 1774.4,327.1" fill="#1c5473" stroke="#1c5473" stroke-width="0.6"/>
<polygon points="1558.4,780.9 1776.6,329.6 1774.4,327.1 1556.0,777.6" fill="#1d5676" stroke="#1d5676" stroke-width="0.6"/>
<polygon points="1346.3,752.1 1347.3,755.2 1349.9,752.0 1349.0,749.2" fill="#236b93" stroke="#236b93" stroke-width="0.6"/>
<polygon points="1347.3,755.2 1350.2,758.0 1352.5,754.5 1349.9,752.0" fill="#26729d" stroke="#26729d" stroke-width="0.6"/>
<polygon points="1350.2,758.0 1354.6,760.1 1356.4,756.4 1352.5,754.5" fill="#26749f" stroke="#26749f" stroke-width="0.6"/>
<polygon points="1354.6,760.1 1360.0,761.5 1361.2,757.6 1356.4,756.4" fill="#2777a3" stroke="#2777a3" stroke-width="0.6"/>
<polygon points="1360.0,761.5 1534.8,788.0 1535.0,783.9 1361.2,757.6" fill="#2877a4" stroke="#2877a4" stroke-width="0.6"/>
<polygon points="1556.0,783.9 1558.4,780.9 1556.0,777.6 1553.9,780.2" fill="#1d5878" stroke="#1d5878" stroke-width="0.6"/>
<polygon points="1552.0,786.2 1556.0,783.9 1553.9,780.2 1550.3,782.3" fill="#1d5879" stroke="#1d5879" stroke-width="0.6"/>
<polygon points="1546.7,787.8 1552.0,786.2 1550.3,782.3 1545.6,783.7" fill="#21648a" stroke="#21648a" stroke-width="0.6"/>
<polygon points="1540.8,788.4 1546.7,787.8 1545.6,783.7 1540.4,784.3" fill="#25709a" stroke="#25709a" stroke-width="0.6"/>
<polygon points="1534.8,788.0 1540.8,788.4 1540.4,784.3 1535.0,783.9" fill="#2776a2" stroke="#2776a2" stroke-width="0.6"/>
<polygon points="1535.0,783.9 1540.4,784.3 1545.6,783.7 1550.3,782.3 1553.9,780.2 1556.0,777.6 1774.4,327.1 1774.7,325.1 1773.5,323.1 1771.0,321.4 1767.5,320.0 1763.2,319.1 1616.2,300.8 1611.7,300.5 1607.3,300.9 1603.5,301.8 1600.6,303.3 1598.8,305.1 1349.7,746.4 1349.0,749.2 1349.9,752.0 1352.5,754.5 1356.4,756.4 1361.2,757.6" fill="#2d87ba"/>
<clipPath id="c8"><polygon points="1534.6,782.4 1539.5,782.7 1544.3,782.2 1548.6,781.0 1551.8,779.1 1553.8,776.7 1772.1,327.2 1772.3,325.4 1771.2,323.6 1769.0,322.0 1765.8,320.7 1761.9,320.0 1616.5,301.8 1612.5,301.6 1608.5,301.9 1605.0,302.8 1602.3,304.1 1600.7,305.7 1352.4,746.3 1351.8,748.8 1352.7,751.3 1355.0,753.6 1358.6,755.3 1363.0,756.4"/></clipPath>
<g clip-path="url(#c8)">
<polygon points="1534.4,791.3 1539.3,791.6 1544.1,791.1 1548.4,789.9 1551.6,787.9 1553.6,785.6 1771.7,335.1 1771.9,333.3 1770.9,331.5 1768.6,329.9 1765.4,328.6 1761.6,327.8 1616.3,309.6 1612.3,309.4 1608.3,309.7 1604.8,310.6 1602.1,311.9 1600.5,313.6 1352.5,755.1 1351.9,757.6 1352.7,760.2 1355.1,762.4 1358.6,764.2 1363.0,765.3" fill="#2b82b3"/>
<polygon points="1616.3,309.6 1612.3,309.4 1612.5,301.6 1616.5,301.8" fill="#236a91" stroke="#236a91" stroke-width="0.6"/>
<polygon points="1612.3,309.4 1608.3,309.7 1608.5,301.9 1612.5,301.6" fill="#216489" stroke="#216489" stroke-width="0.6"/>
<polygon points="1608.3,309.7 1604.8,310.6 1605.0,302.8 1608.5,301.9" fill="#1e5a7b" stroke="#1e5a7b" stroke-width="0.6"/>
<polygon points="1604.8,310.6 1602.1,311.9 1602.3,304.1 1605.0,302.8" fill="#1a4f6c" stroke="#1a4f6c" stroke-width="0.6"/>
<polygon points="1602.1,311.9 1600.5,313.6 1600.7,305.7 1602.3,304.1" fill="#1a4e6b" stroke="#1a4e6b" stroke-width="0.6"/>
<polygon points="1761.6,327.8 1616.3,309.6 1616.5,301.8 1761.9,320.0" fill="#236b92" stroke="#236b92" stroke-width="0.6"/>
<polygon points="1765.4,328.6 1761.6,327.8 1761.9,320.0 1765.8,320.7" fill="#236a92" stroke="#236a92" stroke-width="0.6"/>
<polygon points="1768.6,329.9 1765.4,328.6 1765.8,320.7 1769.0,322.0" fill="#22688e" stroke="#22688e" stroke-width="0.6"/>
<polygon points="1770.9,331.5 1768.6,329.9 1769.0,322.0 1771.2,323.6" fill="#22668c" stroke="#22668c" stroke-width="0.6"/>
<polygon points="1771.9,333.3 1770.9,331.5 1771.2,323.6 1772.3,325.4" fill="#206083" stroke="#206083" stroke-width="0.6"/>
<polygon points="1600.5,313.6 1352.5,755.1 1352.4,746.3 1600.7,305.7" fill="#1a4d6a" stroke="#1a4d6a" stroke-width="0.6"/>
<polygon points="1352.5,755.1 1351.9,757.6 1351.8,748.8 1352.4,746.3" fill="#194b67" stroke="#194b67" stroke-width="0.6"/>
<clipPath id="c7"><polygon points="1534.7,788.5 1538.3,788.7 1541.9,788.3 1545.0,787.4 1547.3,786.0 1548.8,784.3 1767.2,334.9 1767.4,333.6 1766.6,332.3 1765.0,331.1 1762.6,330.2 1759.8,329.6 1616.1,311.6 1613.2,311.4 1610.2,311.6 1607.7,312.3 1605.7,313.3 1604.6,314.5 1357.7,755.3 1357.3,757.2 1357.9,759.0 1359.6,760.7 1362.2,762.0 1365.5,762.8"/></clipPath>
<g clip-path="url(#c7)">
<polygon points="1534.7,790.7 1538.3,790.9 1541.8,790.6 1544.9,789.6 1547.3,788.2 1548.7,786.5 1767.1,336.9 1767.3,335.6 1766.5,334.2 1764.9,333.1 1762.5,332.1 1759.7,331.6 1616.1,313.5 1613.1,313.3 1610.2,313.6 1607.6,314.2 1605.7,315.2 1604.5,316.4 1357.8,757.5 1357.3,759.4 1357.9,761.2 1359.7,762.9 1362.2,764.2 1365.5,765.0" fill="#2b82b3"/>
<polygon points="1616.1,313.5 1613.1,313.3 1613.2,311.4 1616.1,311.6" fill="#236a91" stroke="#236a91" stroke-width="0.6"/>
<polygon points="1613.1,313.3 1610.2,313.6 1610.2,311.6 1613.2,311.4" fill="#216489" stroke="#216489" stroke-width="0.6"/>
<polygon points="1610.2,313.6 1607.6,314.2 1607.7,312.3 1610.2,311.6" fill="#1e5a7b" stroke="#1e5a7b" stroke-width="0.6"/>
<polygon points="1607.6,314.2 1605.7,315.2 1605.7,313.3 1607.7,312.3" fill="#1a4f6c" stroke="#1a4f6c" stroke-width="0.6"/>
<polygon points="1605.7,315.2 1604.5,316.4 1604.6,314.5 1605.7,313.3" fill="#1a4e6b" stroke="#1a4e6b" stroke-width="0.6"/>
<polygon points="1759.7,331.6 1616.1,313.5 1616.1,311.6 1759.8,329.6" fill="#236b92" stroke="#236b92" stroke-width="0.6"/>
<polygon points="1762.5,332.1 1759.7,331.6 1759.8,329.6 1762.6,330.2" fill="#236a92" stroke="#236a92" stroke-width="0.6"/>
<polygon points="1764.9,333.1 1762.5,332.1 1762.6,330.2 1765.0,331.1" fill="#22688e" stroke="#22688e" stroke-width="0.6"/>
<polygon points="1766.5,334.2 1764.9,333.1 1765.0,331.1 1766.6,332.3" fill="#22668c" stroke="#22668c" stroke-width="0.6"/>
<polygon points="1767.3,335.6 1766.5,334.2 1766.6,332.3 1767.4,333.6" fill="#206083" stroke="#206083" stroke-width="0.6"/>
<polygon points="1604.5,316.4 1357.8,757.5 1357.7,755.3 1604.6,314.5" fill="#1a4d6a" stroke="#1a4d6a" stroke-width="0.6"/>
<polygon points="1357.8,757.5 1357.3,759.4 1357.3,757.2 1357.7,755.3" fill="#194b67" stroke="#194b67" stroke-width="0.6"/>
<polygon points="1675.8,350.0 1676.7,346.6 1675.8,343.1 1673.3,339.7 1669.1,336.7 1663.7,334.1 1657.1,332.1 1649.8,330.8 1642.1,330.2 1634.4,330.4 1627.0,331.3 1620.4,333.0 1614.8,335.3 1610.6,338.2 1607.9,341.4 1606.9,344.8 1607.7,348.3 1610.2,351.7 1614.2,354.8 1619.7,357.4 1626.3,359.5 1633.7,360.8 1641.5,361.4 1649.3,361.2 1656.7,360.2 1663.4,358.5 1669.0,356.2 1673.2,353.3" fill="url(#hg)"/>
<polyline points="1677.5,344.6 1675.8,341.3 1672.6,338.2 1668.1,335.4 1662.5,333.1 1656.0,331.3 1648.8,330.1 1641.4,329.7 1634.0,329.9 1626.9,330.8 1620.5,332.4 1614.9,334.5 1610.6,337.2 1607.5,340.2 1606.0,343.5" fill="none" stroke="#359fda" stroke-width="1.6"/>
<polygon points="1749.7,359.4 1750.5,356.0 1749.6,352.4 1746.9,349.1 1742.7,346.0 1737.1,343.4 1730.5,341.4 1723.1,340.0 1715.3,339.4 1707.6,339.6 1700.2,340.6 1693.6,342.3 1688.1,344.6 1684.0,347.5 1681.4,350.7 1680.5,354.2 1681.3,357.7 1683.9,361.1 1688.1,364.3 1693.7,366.9 1700.4,369.0 1707.8,370.3 1715.7,370.9 1723.5,370.7 1730.9,369.7 1737.6,368.0 1743.1,365.6 1747.2,362.7" fill="url(#hg)"/>
<polyline points="1751.3,354.0 1749.5,350.6 1746.2,347.5 1741.6,344.7 1735.9,342.3 1729.3,340.6 1722.1,339.4 1714.6,338.9 1707.2,339.2 1700.1,340.1 1693.7,341.7 1688.2,343.8 1683.9,346.5 1680.9,349.5 1679.5,352.8" fill="none" stroke="#359fda" stroke-width="1.6"/>
<polygon points="1658.6,382.9 1659.6,379.4 1658.7,375.8 1656.1,372.3 1652.0,369.2 1646.5,366.5 1639.8,364.5 1632.4,363.1 1624.6,362.5 1616.8,362.7 1609.4,363.7 1602.6,365.4 1597.0,367.8 1592.7,370.7 1589.9,374.0 1588.9,377.6 1589.6,381.2 1592.1,384.6 1596.2,387.8 1601.7,390.5 1608.4,392.6 1615.9,394.0 1623.8,394.6 1631.7,394.4 1639.2,393.4 1646.0,391.6 1651.7,389.2 1655.9,386.3" fill="url(#hg)"/>
<polyline points="1660.4,377.3 1658.7,373.9 1655.5,370.7 1651.0,367.9 1645.3,365.5 1638.7,363.7 1631.5,362.5 1623.9,362.0 1616.4,362.2 1609.2,363.2 1602.7,364.8 1597.1,367.0 1592.6,369.7 1589.5,372.8 1588.0,376.2" fill="none" stroke="#359fda" stroke-width="1.6"/>
<polygon points="1733.5,392.6 1734.4,389.0 1733.4,385.4 1730.7,381.9 1726.5,378.8 1720.8,376.1 1714.1,374.0 1706.7,372.6 1698.8,372.0 1691.0,372.2 1683.5,373.2 1676.8,375.0 1671.2,377.4 1666.9,380.3 1664.3,383.6 1663.4,387.2 1664.2,390.8 1666.8,394.3 1671.0,397.5 1676.6,400.3 1683.4,402.4 1691.0,403.8 1698.9,404.4 1706.9,404.2 1714.4,403.2 1721.2,401.4 1726.8,398.9 1731.0,396.0" fill="url(#hg)"/>
<polyline points="1735.2,386.9 1733.4,383.5 1730.1,380.3 1725.4,377.4 1719.6,375.0 1712.9,373.2 1705.7,372.0 1698.1,371.5 1690.5,371.8 1683.3,372.7 1676.8,374.3 1671.2,376.5 1666.9,379.3 1663.9,382.4 1662.4,385.8" fill="none" stroke="#359fda" stroke-width="1.6"/>
<polygon points="1641.0,416.7 1642.0,413.1 1641.1,409.4 1638.6,405.8 1634.4,402.6 1628.8,399.9 1622.1,397.8 1614.6,396.4 1606.7,395.8 1598.8,396.0 1591.2,397.0 1584.4,398.7 1578.6,401.2 1574.2,404.2 1571.4,407.6 1570.3,411.2 1571.0,414.9 1573.5,418.5 1577.6,421.8 1583.2,424.5 1590.0,426.7 1597.5,428.1 1605.5,428.8 1613.6,428.5 1621.2,427.5 1628.1,425.7 1633.9,423.2 1638.3,420.2" fill="url(#hg)"/>
<polyline points="1642.8,411.0 1641.2,407.5 1638.0,404.2 1633.4,401.2 1627.6,398.8 1620.9,396.9 1613.6,395.7 1606.0,395.2 1598.3,395.5 1591.1,396.4 1584.4,398.1 1578.7,400.4 1574.2,403.1 1571.0,406.3 1569.4,409.8" fill="none" stroke="#359fda" stroke-width="1.6"/>
<polygon points="1716.9,426.7 1717.8,423.0 1716.8,419.3 1714.1,415.7 1709.8,412.4 1704.1,409.7 1697.3,407.6 1689.8,406.1 1681.8,405.5 1673.9,405.7 1666.3,406.8 1659.5,408.6 1653.8,411.0 1649.5,414.0 1646.7,417.5 1645.8,421.1 1646.6,424.9 1649.2,428.5 1653.5,431.8 1659.1,434.6 1666.0,436.7 1673.6,438.2 1681.7,438.8 1689.8,438.6 1697.4,437.5 1704.3,435.7 1710.0,433.2 1714.3,430.1" fill="url(#hg)"/>
<polyline points="1718.6,420.9 1716.8,417.3 1713.5,414.0 1708.8,411.1 1702.9,408.6 1696.1,406.7 1688.8,405.5 1681.1,405.0 1673.4,405.2 1666.1,406.2 1659.5,407.9 1653.8,410.2 1649.4,413.0 1646.3,416.2 1644.8,419.7" fill="none" stroke="#359fda" stroke-width="1.6"/>
<polygon points="1622.9,451.5 1623.9,447.7 1623.1,443.9 1620.5,440.3 1616.3,437.0 1610.6,434.2 1603.8,432.0 1596.2,430.5 1588.2,429.9 1580.2,430.1 1572.5,431.2 1565.6,433.0 1559.7,435.5 1555.2,438.6 1552.3,442.1 1551.2,445.8 1551.9,449.6 1554.4,453.3 1558.6,456.7 1564.2,459.5 1571.0,461.8 1578.7,463.2 1586.8,463.9 1595.0,463.7 1602.8,462.6 1609.8,460.7 1615.6,458.1 1620.1,455.0" fill="url(#hg)"/>
<polyline points="1624.8,445.6 1623.1,442.0 1619.9,438.6 1615.2,435.6 1609.4,433.0 1602.7,431.1 1595.3,429.9 1587.5,429.4 1579.8,429.6 1572.4,430.6 1565.6,432.3 1559.8,434.7 1555.2,437.5 1552.0,440.8 1550.3,444.3" fill="none" stroke="#359fda" stroke-width="1.6"/>
<polygon points="1699.8,461.7 1700.7,457.9 1699.7,454.1 1697.0,450.4 1692.7,447.1 1686.9,444.2 1680.1,442.1 1672.4,440.6 1664.3,440.0 1656.3,440.2 1648.6,441.2 1641.7,443.1 1635.9,445.6 1631.5,448.7 1628.7,452.3 1627.7,456.0 1628.5,459.9 1631.1,463.6 1635.4,466.9 1641.1,469.8 1648.1,472.1 1655.8,473.6 1664.0,474.2 1672.2,474.0 1679.9,472.9 1686.9,471.0 1692.7,468.4 1697.1,465.3" fill="url(#hg)"/>
<polyline points="1701.5,455.7 1699.7,452.1 1696.4,448.7 1691.6,445.7 1685.7,443.1 1678.9,441.2 1671.4,439.9 1663.6,439.4 1655.8,439.7 1648.4,440.7 1641.7,442.4 1635.9,444.7 1631.4,447.6 1628.3,450.9 1626.7,454.5" fill="none" stroke="#359fda" stroke-width="1.6"/>
<polygon points="1604.2,487.2 1605.3,483.4 1604.5,479.5 1601.9,475.7 1597.6,472.3 1591.9,469.4 1585.1,467.2 1577.4,465.7 1569.3,465.1 1561.1,465.3 1553.3,466.4 1546.2,468.2 1540.3,470.8 1535.7,474.0 1532.7,477.6 1531.6,481.4 1532.3,485.4 1534.8,489.1 1539.0,492.6 1544.6,495.5 1551.6,497.8 1559.3,499.3 1567.6,500.0 1575.8,499.8 1583.7,498.7 1590.8,496.7 1596.8,494.1 1601.3,490.9" fill="url(#hg)"/>
<polyline points="1606.2,481.2 1604.5,477.4 1601.3,474.0 1596.6,470.9 1590.7,468.3 1583.9,466.3 1576.4,465.0 1568.5,464.5 1560.7,464.8 1553.2,465.8 1546.3,467.5 1540.4,469.9 1535.7,472.9 1532.4,476.2 1530.6,479.9" fill="none" stroke="#359fda" stroke-width="1.6"/>
<polygon points="1682.2,497.8 1683.1,493.9 1682.2,489.9 1679.5,486.2 1675.1,482.7 1669.3,479.8 1662.3,477.5 1654.5,476.1 1646.4,475.4 1638.2,475.6 1630.4,476.7 1623.4,478.6 1617.4,481.2 1613.0,484.4 1610.1,488.0 1609.1,491.9 1609.9,495.9 1612.5,499.7 1616.8,503.2 1622.6,506.1 1629.6,508.4 1637.5,510.0 1645.7,510.6 1654.1,510.4 1661.9,509.3 1669.0,507.4 1674.9,504.7 1679.4,501.4" fill="url(#hg)"/>
<polyline points="1684.0,491.6 1682.2,487.9 1678.8,484.4 1674.0,481.3 1668.0,478.6 1661.1,476.6 1653.5,475.4 1645.6,474.8 1637.8,475.1 1630.2,476.1 1623.4,477.9 1617.5,480.3 1612.9,483.3 1609.7,486.7 1608.1,490.4" fill="none" stroke="#359fda" stroke-width="1.6"/>
<polygon points="1585.0,524.1 1586.1,520.1 1585.3,516.0 1582.7,512.2 1578.4,508.7 1572.7,505.7 1565.7,503.4 1558.0,501.9 1549.7,501.2 1541.4,501.4 1533.5,502.6 1526.3,504.5 1520.3,507.1 1515.6,510.4 1512.6,514.1 1511.4,518.1 1512.0,522.1 1514.5,526.0 1518.8,529.6 1524.5,532.6 1531.5,534.9 1539.4,536.5 1547.7,537.2 1556.1,537.0 1564.1,535.8 1571.4,533.8 1577.5,531.1 1582.1,527.8" fill="url(#hg)"/>
<polyline points="1587.1,517.8 1585.4,514.0 1582.1,510.4 1577.4,507.2 1571.5,504.5 1564.5,502.5 1556.9,501.2 1549.0,500.6 1541.0,500.9 1533.4,502.0 1526.4,503.8 1520.4,506.2 1515.6,509.3 1512.2,512.7 1510.4,516.5" fill="none" stroke="#359fda" stroke-width="1.6"/>
<polygon points="1664.0,534.9 1665.0,530.9 1664.1,526.8 1661.4,522.9 1657.0,519.4 1651.1,516.4 1644.0,514.1 1636.2,512.5 1627.9,511.9 1619.6,512.1 1611.6,513.2 1604.5,515.2 1598.5,517.8 1593.9,521.1 1591.0,524.9 1589.9,528.9 1590.7,532.9 1593.3,536.9 1597.7,540.4 1603.5,543.5 1610.6,545.9 1618.6,547.5 1627.0,548.1 1635.4,547.9 1643.4,546.8 1650.6,544.8 1656.7,542.0 1661.2,538.7" fill="url(#hg)"/>
<polyline points="1665.9,528.6 1664.1,524.7 1660.7,521.1 1655.9,517.9 1649.8,515.2 1642.8,513.2 1635.1,511.8 1627.1,511.3 1619.1,511.6 1611.5,512.6 1604.5,514.4 1598.6,516.9 1593.9,520.0 1590.6,523.5 1588.9,527.3" fill="none" stroke="#359fda" stroke-width="1.6"/>
<polygon points="1565.2,562.0 1566.4,557.9 1565.6,553.7 1563.0,549.7 1558.7,546.1 1552.9,543.1 1545.8,540.7 1538.0,539.1 1529.6,538.4 1521.2,538.7 1513.2,539.8 1505.9,541.8 1499.7,544.5 1494.9,547.9 1491.8,551.7 1490.6,555.8 1491.2,560.0 1493.7,564.0 1498.0,567.6 1503.8,570.7 1510.8,573.2 1518.8,574.8 1527.3,575.5 1535.8,575.2 1544.0,574.1 1551.3,572.0 1557.5,569.2 1562.2,565.8" fill="url(#hg)"/>
<polyline points="1567.4,555.5 1565.7,551.6 1562.4,547.9 1557.7,544.6 1551.7,541.8 1544.6,539.8 1536.9,538.4 1528.9,537.9 1520.8,538.1 1513.0,539.2 1505.9,541.1 1499.8,543.6 1494.9,546.7 1491.5,550.3 1489.6,554.2" fill="none" stroke="#359fda" stroke-width="1.6"/>
<polygon points="1645.3,573.1 1646.4,569.0 1645.5,564.8 1642.7,560.8 1638.3,557.2 1632.3,554.1 1625.2,551.7 1617.2,550.1 1608.8,549.4 1600.4,549.6 1592.4,550.8 1585.1,552.8 1579.0,555.6 1574.3,559.0 1571.3,562.8 1570.2,566.9 1570.9,571.1 1573.6,575.2 1578.0,578.8 1583.9,582.0 1591.1,584.4 1599.1,586.1 1607.7,586.8 1616.2,586.5 1624.4,585.3 1631.7,583.3 1637.8,580.5 1642.4,577.0" fill="url(#hg)"/>
<polyline points="1647.3,566.6 1645.5,562.7 1642.1,558.9 1637.2,555.6 1631.1,552.8 1624.0,550.7 1616.2,549.4 1608.1,548.8 1600.0,549.1 1592.2,550.2 1585.1,552.1 1579.1,554.6 1574.2,557.8 1570.9,561.4 1569.2,565.3" fill="none" stroke="#359fda" stroke-width="1.6"/>
<polygon points="1544.9,601.0 1546.1,596.8 1545.3,592.5 1542.7,588.4 1538.4,584.7 1532.5,581.5 1525.4,579.1 1517.4,577.5 1508.9,576.8 1500.4,577.0 1492.2,578.2 1484.8,580.2 1478.5,583.1 1473.6,586.5 1470.4,590.5 1469.1,594.7 1469.7,598.9 1472.2,603.1 1476.5,606.8 1482.4,610.1 1489.6,612.6 1497.7,614.2 1506.2,614.9 1514.9,614.7 1523.2,613.5 1530.7,611.4 1537.0,608.5 1541.8,605.0" fill="url(#hg)"/>
<polyline points="1547.1,594.4 1545.5,590.3 1542.1,586.5 1537.3,583.1 1531.3,580.3 1524.2,578.1 1516.3,576.7 1508.2,576.2 1499.9,576.5 1492.1,577.6 1484.8,579.5 1478.6,582.1 1473.6,585.3 1470.1,589.0 1468.2,593.0" fill="none" stroke="#359fda" stroke-width="1.6"/>
<polygon points="1626.1,612.5 1627.2,608.2 1626.3,603.9 1623.6,599.8 1619.1,596.1 1613.1,592.9 1605.8,590.4 1597.8,588.8 1589.2,588.1 1580.7,588.3 1572.5,589.5 1565.1,591.6 1558.9,594.4 1554.1,597.9 1551.0,601.9 1549.8,606.1 1550.6,610.4 1553.2,614.6 1557.7,618.4 1563.7,621.6 1570.9,624.2 1579.1,625.8 1587.7,626.6 1596.4,626.3 1604.7,625.1 1612.2,623.0 1618.4,620.1 1623.1,616.5" fill="url(#hg)"/>
<polyline points="1628.2,605.8 1626.4,601.7 1622.9,597.9 1618.0,594.5 1611.8,591.6 1604.6,589.4 1596.7,588.0 1588.5,587.5 1580.2,587.7 1572.3,588.9 1565.2,590.8 1559.0,593.4 1554.1,596.7 1550.6,600.4 1548.8,604.4" fill="none" stroke="#359fda" stroke-width="1.6"/>
<polygon points="1523.9,641.2 1525.1,636.9 1524.4,632.5 1521.8,628.3 1517.4,624.4 1511.5,621.2 1504.3,618.7 1496.2,617.0 1487.6,616.3 1478.9,616.5 1470.6,617.7 1463.0,619.8 1456.6,622.8 1451.7,626.3 1448.4,630.4 1447.0,634.7 1447.6,639.1 1450.1,643.4 1454.5,647.3 1460.4,650.6 1467.6,653.2 1475.8,654.9 1484.5,655.6 1493.3,655.4 1501.8,654.1 1509.4,652.0 1515.8,649.0 1520.7,645.3" fill="url(#hg)"/>
<polyline points="1526.2,634.4 1524.6,630.2 1521.2,626.3 1516.4,622.8 1510.2,619.9 1503.0,617.7 1495.1,616.2 1486.8,615.6 1478.5,615.9 1470.5,617.1 1463.1,619.1 1456.8,621.8 1451.7,625.1 1448.1,628.9 1446.1,633.0" fill="none" stroke="#359fda" stroke-width="1.6"/>
<polygon points="1606.3,653.1 1607.4,648.7 1606.6,644.3 1603.8,640.0 1599.2,636.1 1593.2,632.9 1585.9,630.3 1577.7,628.7 1569.0,627.9 1560.3,628.2 1552.0,629.4 1544.5,631.5 1538.1,634.5 1533.3,638.1 1530.1,642.1 1528.9,646.5 1529.6,651.0 1532.3,655.3 1536.7,659.2 1542.8,662.5 1550.2,665.1 1558.4,666.9 1567.2,667.6 1576.0,667.3 1584.4,666.1 1592.0,663.9 1598.4,660.9 1603.2,657.2" fill="url(#hg)"/>
<polyline points="1608.4,646.2 1606.6,642.0 1603.1,638.0 1598.2,634.5 1591.9,631.6 1584.6,629.3 1576.6,627.9 1568.2,627.3 1559.9,627.6 1551.9,628.7 1544.6,630.7 1538.3,633.4 1533.2,636.8 1529.7,640.6 1527.9,644.8" fill="none" stroke="#359fda" stroke-width="1.6"/>
<polygon points="1502.2,682.7 1503.6,678.2 1502.9,673.7 1500.2,669.4 1495.8,665.4 1489.8,662.0 1482.5,659.5 1474.3,657.7 1465.6,657.0 1456.8,657.2 1448.3,658.5 1440.6,660.7 1434.1,663.7 1429.0,667.4 1425.7,671.5 1424.3,676.0 1424.8,680.5 1427.3,684.9 1431.7,688.9 1437.7,692.4 1445.0,695.0 1453.3,696.8 1462.2,697.6 1471.1,697.3 1479.7,696.0 1487.4,693.8 1494.0,690.7 1499.0,687.0" fill="url(#hg)"/>
<polyline points="1504.7,675.7 1503.0,671.4 1499.7,667.3 1494.8,663.7 1488.6,660.7 1481.3,658.4 1473.2,656.9 1464.8,656.3 1456.3,656.6 1448.2,657.8 1440.7,659.9 1434.3,662.6 1429.0,666.1 1425.3,670.0 1423.3,674.2" fill="none" stroke="#359fda" stroke-width="1.6"/>
<polygon points="1585.8,695.0 1587.0,690.4 1586.2,685.9 1583.4,681.5 1578.8,677.5 1572.7,674.1 1565.3,671.5 1557.0,669.7 1548.2,669.0 1539.4,669.3 1530.9,670.5 1523.3,672.7 1516.8,675.7 1511.8,679.4 1508.6,683.7 1507.3,688.2 1508.0,692.8 1510.6,697.2 1515.1,701.2 1521.3,704.7 1528.7,707.4 1537.1,709.1 1546.0,709.9 1555.0,709.7 1563.6,708.4 1571.3,706.1 1577.8,703.0 1582.7,699.2" fill="url(#hg)"/>
<polyline points="1588.0,687.8 1586.3,683.5 1582.8,679.4 1577.7,675.8 1571.4,672.7 1564.0,670.4 1555.9,668.9 1547.4,668.3 1538.9,668.6 1530.8,669.8 1523.3,671.9 1516.9,674.7 1511.8,678.1 1508.2,682.1 1506.3,686.4" fill="none" stroke="#359fda" stroke-width="1.6"/>
<polygon points="1479.9,725.5 1481.3,720.9 1480.6,716.2 1478.0,711.7 1473.5,707.7 1467.4,704.2 1460.1,701.5 1451.7,699.7 1442.9,699.0 1434.0,699.2 1425.4,700.5 1417.5,702.8 1410.9,705.9 1405.7,709.7 1402.3,714.0 1400.8,718.6 1401.3,723.3 1403.8,727.8 1408.2,731.9 1414.3,735.5 1421.7,738.2 1430.1,740.0 1439.1,740.8 1448.2,740.6 1456.9,739.2 1464.8,736.9 1471.5,733.8 1476.6,729.9" fill="url(#hg)"/>
<polyline points="1482.4,718.2 1480.8,713.8 1477.4,709.6 1472.5,705.9 1466.2,702.8 1458.8,700.5 1450.7,698.9 1442.1,698.3 1433.5,698.6 1425.2,699.8 1417.6,701.9 1411.0,704.8 1405.7,708.3 1401.9,712.4 1399.8,716.7" fill="none" stroke="#359fda" stroke-width="1.6"/>
<polygon points="1564.7,738.2 1566.0,733.5 1565.2,728.8 1562.4,724.2 1557.7,720.1 1551.5,716.6 1544.0,713.9 1535.6,712.1 1526.7,711.4 1517.7,711.6 1509.1,712.9 1501.3,715.2 1494.7,718.3 1489.7,722.1 1486.3,726.5 1485.0,731.1 1485.6,735.9 1488.3,740.4 1492.9,744.6 1499.1,748.2 1506.6,751.0 1515.1,752.8 1524.2,753.6 1533.3,753.3 1542.0,752.0 1549.9,749.7 1556.5,746.5 1561.5,742.6" fill="url(#hg)"/>
<polyline points="1567.0,730.8 1565.2,726.3 1561.7,722.1 1556.7,718.4 1550.2,715.2 1542.8,712.8 1534.5,711.3 1525.9,710.7 1517.3,711.0 1509.0,712.2 1501.4,714.3 1494.9,717.2 1489.6,720.8 1486.0,724.9 1484.0,729.3" fill="none" stroke="#359fda" stroke-width="1.6"/>
<polygon points="1456.9,769.7 1458.3,764.9 1457.7,760.1 1455.1,755.5 1450.5,751.2 1444.4,747.7 1436.9,744.9 1428.5,743.1 1419.5,742.3 1410.4,742.6 1401.7,743.9 1393.7,746.2 1386.9,749.4 1381.6,753.3 1378.1,757.8 1376.5,762.5 1377.0,767.4 1379.5,772.1 1384.0,776.3 1390.1,780.0 1397.6,782.8 1406.2,784.7 1415.3,785.5 1424.5,785.2 1433.4,783.8 1441.4,781.5 1448.2,778.2 1453.5,774.2" fill="url(#hg)"/>
<polyline points="1459.5,762.2 1457.9,757.6 1454.5,753.3 1449.5,749.5 1443.1,746.3 1435.7,743.8 1427.4,742.2 1418.7,741.6 1410.0,741.9 1401.6,743.2 1393.8,745.3 1387.1,748.3 1381.6,751.9 1377.8,756.1 1375.6,760.6" fill="none" stroke="#359fda" stroke-width="1.6"/>
<polygon points="1542.9,782.7 1544.2,777.9 1543.5,773.0 1540.7,768.4 1536.0,764.1 1529.7,760.5 1522.1,757.7 1513.6,755.9 1504.5,755.1 1495.4,755.3 1486.7,756.7 1478.7,759.0 1472.0,762.2 1466.8,766.2 1463.4,770.7 1462.0,775.5 1462.6,780.4 1465.3,785.1 1469.9,789.4 1476.2,793.1 1483.8,796.0 1492.4,797.8 1501.6,798.7 1510.9,798.4 1519.7,797.0 1527.7,794.6 1534.5,791.3 1539.6,787.3" fill="url(#hg)"/>
<polyline points="1545.4,775.1 1543.6,770.5 1540.0,766.2 1534.9,762.3 1528.4,759.1 1520.8,756.6 1512.5,755.0 1503.7,754.4 1495.0,754.7 1486.5,756.0 1478.8,758.2 1472.2,761.1 1466.8,764.8 1463.0,769.0 1461.0,773.6" fill="none" stroke="#359fda" stroke-width="1.6"/>
</g>
</g>
<polygon points="1923.4,517.8 1949.1,452.1 1956.6,435.8 1930.4,502.8" fill="#1d5777" stroke="#1d5777" stroke-width="0.6"/>
<polygon points="1762.0,496.1 1762.2,498.3 1756.5,482.9 1756.2,479.6" fill="#21648a" stroke="#21648a" stroke-width="0.6"/>
<polygon points="1762.2,498.3 1764.7,500.2 1760.3,485.8 1756.5,482.9" fill="#26739e" stroke="#26739e" stroke-width="0.6"/>
<polygon points="1764.7,500.2 1768.8,501.4 1766.5,487.5 1760.3,485.8" fill="#2777a3" stroke="#2777a3" stroke-width="0.6"/>
<polygon points="1768.8,501.4 1912.9,520.8 1914.6,507.3 1766.5,487.5" fill="#2878a5" stroke="#2878a5" stroke-width="0.6"/>
<polygon points="1921.4,519.7 1923.4,517.8 1930.4,502.8 1927.4,505.7" fill="#1d597a" stroke="#1d597a" stroke-width="0.6"/>
<polygon points="1917.6,520.8 1921.4,519.7 1927.4,505.7 1921.6,507.4" fill="#22658b" stroke="#22658b" stroke-width="0.6"/>
<polygon points="1912.9,520.8 1917.6,520.8 1921.6,507.4 1914.6,507.3" fill="#2776a2" stroke="#2776a2" stroke-width="0.6"/>
<polygon points="1888.3,607.9 1915.7,537.5 1923.4,520.8 1895.4,592.7" fill="#1d5777" stroke="#1d5777" stroke-width="0.6"/>
<polygon points="1721.5,584.6 1721.7,587.0 1715.7,571.3 1715.4,567.7" fill="#21648a" stroke="#21648a" stroke-width="0.6"/>
<polygon points="1721.7,587.0 1724.2,589.1 1719.6,574.4 1715.7,571.3" fill="#26739e" stroke="#26739e" stroke-width="0.6"/>
<polygon points="1724.2,589.1 1728.5,590.3 1726.0,576.2 1719.6,574.4" fill="#2777a3" stroke="#2777a3" stroke-width="0.6"/>
<polygon points="1728.5,590.3 1877.3,611.1 1879.0,597.4 1726.0,576.2" fill="#2878a5" stroke="#2878a5" stroke-width="0.6"/>
<polygon points="1886.2,610.0 1888.3,607.9 1895.4,592.7 1892.3,595.8" fill="#1d597a" stroke="#1d597a" stroke-width="0.6"/>
<polygon points="1882.2,611.1 1886.2,610.0 1892.3,595.8 1886.2,597.5" fill="#22658b" stroke="#22658b" stroke-width="0.6"/>
<polygon points="1877.3,611.1 1882.2,611.1 1886.2,597.5 1879.0,597.4" fill="#2776a2" stroke="#2776a2" stroke-width="0.6"/>
<polygon points="1850.6,704.6 1880.0,629.1 1887.9,612.0 1857.9,689.1" fill="#1d5777" stroke="#1d5777" stroke-width="0.6"/>
<polygon points="1678.0,679.6 1678.2,682.2 1671.9,666.1 1671.6,662.3" fill="#21648a" stroke="#21648a" stroke-width="0.6"/>
<polygon points="1678.2,682.2 1680.8,684.4 1675.9,669.4 1671.9,666.1" fill="#26739e" stroke="#26739e" stroke-width="0.6"/>
<polygon points="1680.8,684.4 1685.2,685.7 1682.5,671.4 1675.9,669.4" fill="#2777a3" stroke="#2777a3" stroke-width="0.6"/>
<polygon points="1685.2,685.7 1839.2,708.0 1840.7,694.2 1682.5,671.4" fill="#2878a5" stroke="#2878a5" stroke-width="0.6"/>
<polygon points="1848.4,706.8 1850.6,704.6 1857.9,689.1 1854.5,692.4" fill="#1d597a" stroke="#1d597a" stroke-width="0.6"/>
<polygon points="1844.2,708.1 1848.4,706.8 1854.5,692.4 1848.3,694.3" fill="#22658b" stroke="#22658b" stroke-width="0.6"/>
<polygon points="1839.2,708.0 1844.2,708.1 1848.3,694.3 1840.7,694.2" fill="#2776a2" stroke="#2776a2" stroke-width="0.6"/>
<polygon points="1810.0,808.7 1841.7,727.4 1849.8,709.9 1817.4,792.9" fill="#1d5777" stroke="#1d5777" stroke-width="0.6"/>
<polygon points="1631.3,781.8 1631.4,784.5 1624.8,768.1 1624.6,764.0" fill="#21648a" stroke="#21648a" stroke-width="0.6"/>
<polygon points="1631.4,784.5 1634.1,786.9 1628.8,771.7 1624.8,768.1" fill="#26739e" stroke="#26739e" stroke-width="0.6"/>
<polygon points="1634.1,786.9 1638.7,788.3 1635.6,773.8 1628.8,771.7" fill="#2777a3" stroke="#2777a3" stroke-width="0.6"/>
<polygon points="1638.7,788.3 1798.1,812.4 1799.5,798.4 1635.6,773.8" fill="#2878a5" stroke="#2878a5" stroke-width="0.6"/>
<polygon points="1807.6,811.1 1810.0,808.7 1817.4,792.9 1813.9,796.5" fill="#1d597a" stroke="#1d597a" stroke-width="0.6"/>
<polygon points="1803.3,812.4 1807.6,811.1 1813.9,796.5 1807.4,798.5" fill="#22658b" stroke="#22658b" stroke-width="0.6"/>
<polygon points="1798.1,812.4 1803.3,812.4 1807.4,798.5 1799.5,798.4" fill="#2776a2" stroke="#2776a2" stroke-width="0.6"/>
<polygon points="1766.2,921.0 1800.4,833.2 1808.7,815.3 1773.8,905.0" fill="#1d5777" stroke="#1d5777" stroke-width="0.6"/>
<polygon points="1580.9,891.9 1581.0,894.9 1574.0,878.2 1573.8,873.8" fill="#21648a" stroke="#21648a" stroke-width="0.6"/>
<polygon points="1581.0,894.9 1583.8,897.5 1578.1,882.0 1574.0,878.2" fill="#26739e" stroke="#26739e" stroke-width="0.6"/>
<polygon points="1583.8,897.5 1588.5,899.0 1585.1,884.3 1578.1,882.0" fill="#2777a3" stroke="#2777a3" stroke-width="0.6"/>
<polygon points="1588.5,899.0 1753.8,925.0 1755.1,910.9 1585.1,884.3" fill="#2878a5" stroke="#2878a5" stroke-width="0.6"/>
<polygon points="1763.7,923.6 1766.2,921.0 1773.8,905.0 1770.1,908.8" fill="#1d597a" stroke="#1d597a" stroke-width="0.6"/>
<polygon points="1759.2,925.1 1763.7,923.6 1770.1,908.8 1763.2,911.0" fill="#22658b" stroke="#22658b" stroke-width="0.6"/>
<polygon points="1753.8,925.0 1759.2,925.1 1763.2,911.0 1755.1,910.9" fill="#2776a2" stroke="#2776a2" stroke-width="0.6"/>
<polygon points="1771.9,912.1 1954.8,442.2 1959.9,439.1 1777.6,909.4" fill="#12374c" stroke="#12374c" stroke-width="0.6"/>
<polygon points="1574.8,883.7 1575.8,886.1 1570.4,883.4 1569.1,880.1" fill="#17455e" stroke="#17455e" stroke-width="0.6"/>
<polygon points="1575.8,886.1 1578.0,888.2 1573.5,886.3 1570.4,883.4" fill="#184965" stroke="#184965" stroke-width="0.6"/>
<polygon points="1578.0,888.2 1581.3,889.9 1578.0,888.5 1573.5,886.3" fill="#194b66" stroke="#194b66" stroke-width="0.6"/>
<polygon points="1581.3,889.9 1585.3,890.9 1583.6,889.9 1578.0,888.5" fill="#194c69" stroke="#194c69" stroke-width="0.6"/>
<polygon points="1585.3,890.9 1755.1,917.5 1754.6,916.8 1583.6,889.9" fill="#194d69" stroke="#194d69" stroke-width="0.6"/>
<polygon points="1770.3,914.4 1771.9,912.1 1777.6,909.4 1775.4,912.4" fill="#13384d" stroke="#13384d" stroke-width="0.6"/>
<polygon points="1767.5,916.2 1770.3,914.4 1775.4,912.4 1771.6,914.9" fill="#13394e" stroke="#13394e" stroke-width="0.6"/>
<polygon points="1763.8,917.4 1767.5,916.2 1771.6,914.9 1766.5,916.5" fill="#154159" stroke="#154159" stroke-width="0.6"/>
<polygon points="1759.5,917.8 1763.8,917.4 1766.5,916.5 1760.6,917.2" fill="#184863" stroke="#184863" stroke-width="0.6"/>
<polygon points="1755.1,917.5 1759.5,917.8 1760.6,917.2 1754.6,916.8" fill="#194c68" stroke="#194c68" stroke-width="0.6"/>
<polygon points="1777.6,909.4 1959.9,439.1 1968.4,352.0 1784.4,813.9" fill="#1a4d6a" stroke="#1a4d6a" stroke-width="0.6"/>
<polygon points="1569.1,880.1 1570.4,883.4 1569.4,787.7 1568.0,784.5" fill="#206083" stroke="#206083" stroke-width="0.6"/>
<polygon points="1570.4,883.4 1573.5,886.3 1572.5,790.5 1569.4,787.7" fill="#22668c" stroke="#22668c" stroke-width="0.6"/>
<polygon points="1573.5,886.3 1578.0,888.5 1577.1,792.7 1572.5,790.5" fill="#22688e" stroke="#22688e" stroke-width="0.6"/>
<polygon points="1578.0,888.5 1583.6,889.9 1582.7,794.1 1577.1,792.7" fill="#236a92" stroke="#236a92" stroke-width="0.6"/>
<polygon points="1583.6,889.9 1754.6,916.8 1761.1,821.2 1582.7,794.1" fill="#236b92" stroke="#236b92" stroke-width="0.6"/>
<polygon points="1775.4,912.4 1777.6,909.4 1784.4,813.9 1782.2,816.9" fill="#1a4e6b" stroke="#1a4e6b" stroke-width="0.6"/>
<polygon points="1771.6,914.9 1775.4,912.4 1782.2,816.9 1778.4,819.4" fill="#1a4f6c" stroke="#1a4f6c" stroke-width="0.6"/>
<polygon points="1766.5,916.5 1771.6,914.9 1778.4,819.4 1773.2,821.0" fill="#1e5a7b" stroke="#1e5a7b" stroke-width="0.6"/>
<polygon points="1760.6,917.2 1766.5,916.5 1773.2,821.0 1767.3,821.6" fill="#216489" stroke="#216489" stroke-width="0.6"/>
<polygon points="1754.6,916.8 1760.6,917.2 1767.3,821.6 1761.1,821.2" fill="#236a91" stroke="#236a91" stroke-width="0.6"/>
<polygon points="1784.4,813.9 1968.4,352.0 1966.3,349.6 1782.1,810.6" fill="#1d5676" stroke="#1d5676" stroke-width="0.6"/>
<polygon points="1568.0,784.5 1569.4,787.7 1572.0,784.4 1570.8,781.6" fill="#236b93" stroke="#236b93" stroke-width="0.6"/>
<polygon points="1569.4,787.7 1572.5,790.5 1574.8,787.0 1572.0,784.4" fill="#26729d" stroke="#26729d" stroke-width="0.6"/>
<polygon points="1572.5,790.5 1577.1,792.7 1578.9,788.9 1574.8,787.0" fill="#26749f" stroke="#26749f" stroke-width="0.6"/>
<polygon points="1577.1,792.7 1582.7,794.1 1583.9,790.2 1578.9,788.9" fill="#2777a3" stroke="#2777a3" stroke-width="0.6"/>
<polygon points="1582.7,794.1 1761.1,821.2 1761.3,817.0 1583.9,790.2" fill="#2877a4" stroke="#2877a4" stroke-width="0.6"/>
<polygon points="1782.2,816.9 1784.4,813.9 1782.1,810.6 1780.1,813.3" fill="#1d5878" stroke="#1d5878" stroke-width="0.6"/>
<polygon points="1778.4,819.4 1782.2,816.9 1780.1,813.3 1776.7,815.4" fill="#1d5879" stroke="#1d5879" stroke-width="0.6"/>
<polygon points="1773.2,821.0 1778.4,819.4 1776.7,815.4 1772.1,816.8" fill="#21648a" stroke="#21648a" stroke-width="0.6"/>
<polygon points="1767.3,821.6 1773.2,821.0 1772.1,816.8 1766.7,817.4" fill="#25709a" stroke="#25709a" stroke-width="0.6"/>
<polygon points="1761.1,821.2 1767.3,821.6 1766.7,817.4 1761.3,817.0" fill="#2776a2" stroke="#2776a2" stroke-width="0.6"/>
<polygon points="1761.3,817.0 1766.7,817.4 1772.1,816.8 1776.7,815.4 1780.1,813.3 1782.1,810.6 1966.3,349.6 1966.4,347.5 1965.0,345.5 1962.4,343.7 1958.7,342.3 1954.3,341.4 1804.8,322.7 1800.3,322.5 1795.9,322.9 1792.1,323.9 1789.3,325.3 1787.7,327.2 1571.3,778.8 1570.8,781.6 1572.0,784.4 1574.8,787.0 1578.9,788.9 1583.9,790.2" fill="#2d87ba"/>
<clipPath id="c10"><polygon points="1760.8,815.5 1765.8,815.8 1770.6,815.3 1774.8,814.0 1777.9,812.1 1779.7,809.7 1963.9,349.7 1964.0,347.8 1962.8,346.0 1960.4,344.3 1957.0,343.1 1953.1,342.3 1805.3,323.8 1801.1,323.6 1797.1,323.9 1793.7,324.8 1791.1,326.2 1789.6,327.8 1574.1,778.6 1573.6,781.2 1574.7,783.8 1577.3,786.1 1581.0,787.9 1585.5,789.0"/></clipPath>
<g clip-path="url(#c10)">
<polygon points="1760.4,824.5 1765.3,824.8 1770.2,824.3 1774.3,823.0 1777.5,821.0 1779.3,818.6 1963.4,357.6 1963.5,355.7 1962.2,353.9 1959.8,352.3 1956.5,351.0 1952.6,350.2 1804.9,331.7 1800.8,331.4 1796.8,331.8 1793.3,332.7 1790.7,334.0 1789.3,335.7 1573.9,787.5 1573.4,790.1 1574.5,792.7 1577.1,795.0 1580.8,796.8 1585.3,797.9" fill="#2b82b3"/>
<polygon points="1804.9,331.7 1800.8,331.4 1801.1,323.6 1805.3,323.8" fill="#236a91" stroke="#236a91" stroke-width="0.6"/>
<polygon points="1800.8,331.4 1796.8,331.8 1797.1,323.9 1801.1,323.6" fill="#216489" stroke="#216489" stroke-width="0.6"/>
<polygon points="1796.8,331.8 1793.3,332.7 1793.7,324.8 1797.1,323.9" fill="#1e5a7b" stroke="#1e5a7b" stroke-width="0.6"/>
<polygon points="1793.3,332.7 1790.7,334.0 1791.1,326.2 1793.7,324.8" fill="#1a4f6c" stroke="#1a4f6c" stroke-width="0.6"/>
<polygon points="1790.7,334.0 1789.3,335.7 1789.6,327.8 1791.1,326.2" fill="#1a4e6b" stroke="#1a4e6b" stroke-width="0.6"/>
<polygon points="1952.6,350.2 1804.9,331.7 1805.3,323.8 1953.1,342.3" fill="#236b92" stroke="#236b92" stroke-width="0.6"/>
<polygon points="1956.5,351.0 1952.6,350.2 1953.1,342.3 1957.0,343.1" fill="#236a92" stroke="#236a92" stroke-width="0.6"/>
<polygon points="1959.8,352.3 1956.5,351.0 1957.0,343.1 1960.4,344.3" fill="#22688e" stroke="#22688e" stroke-width="0.6"/>
<polygon points="1962.2,353.9 1959.8,352.3 1960.4,344.3 1962.8,346.0" fill="#22668c" stroke="#22668c" stroke-width="0.6"/>
<polygon points="1963.5,355.7 1962.2,353.9 1962.8,346.0 1964.0,347.8" fill="#206083" stroke="#206083" stroke-width="0.6"/>
<polygon points="1963.4,357.6 1963.5,355.7 1964.0,347.8 1963.9,349.7" fill="#1c5574" stroke="#1c5574" stroke-width="0.6"/>
<polygon points="1789.3,335.7 1573.9,787.5 1574.1,778.6 1789.6,327.8" fill="#1a4d6a" stroke="#1a4d6a" stroke-width="0.6"/>
<polygon points="1573.9,787.5 1573.4,790.1 1573.6,781.2 1574.1,778.6" fill="#194b67" stroke="#194b67" stroke-width="0.6"/>
<clipPath id="c9"><polygon points="1760.4,821.6 1764.1,821.8 1767.6,821.4 1770.7,820.5 1773.0,819.0 1774.3,817.3 1958.8,357.4 1958.9,356.1 1958.0,354.7 1956.2,353.5 1953.8,352.6 1950.9,352.0 1804.9,333.7 1801.8,333.5 1798.9,333.8 1796.4,334.4 1794.5,335.4 1793.4,336.6 1579.2,787.7 1578.9,789.6 1579.7,791.5 1581.6,793.2 1584.3,794.5 1587.6,795.3"/></clipPath>
<g clip-path="url(#c9)">
<polygon points="1760.3,823.8 1764.0,824.0 1767.5,823.7 1770.6,822.7 1772.9,821.3 1774.2,819.5 1958.7,359.4 1958.8,358.0 1957.9,356.7 1956.1,355.5 1953.7,354.6 1950.8,354.0 1804.8,335.6 1801.7,335.5 1798.8,335.7 1796.3,336.4 1794.4,337.4 1793.3,338.6 1579.2,789.9 1578.8,791.9 1579.7,793.7 1581.5,795.4 1584.2,796.7 1587.6,797.6" fill="#2b82b3"/>
<polygon points="1804.8,335.6 1801.7,335.5 1801.8,333.5 1804.9,333.7" fill="#236a91" stroke="#236a91" stroke-width="0.6"/>
<polygon points="1801.7,335.5 1798.8,335.7 1798.9,333.8 1801.8,333.5" fill="#216489" stroke="#216489" stroke-width="0.6"/>
<polygon points="1798.8,335.7 1796.3,336.4 1796.4,334.4 1798.9,333.8" fill="#1e5a7b" stroke="#1e5a7b" stroke-width="0.6"/>
<polygon points="1796.3,336.4 1794.4,337.4 1794.5,335.4 1796.4,334.4" fill="#1a4f6c" stroke="#1a4f6c" stroke-width="0.6"/>
<polygon points="1794.4,337.4 1793.3,338.6 1793.4,336.6 1794.5,335.4" fill="#1a4e6b" stroke="#1a4e6b" stroke-width="0.6"/>
<polygon points="1950.8,354.0 1804.8,335.6 1804.9,333.7 1950.9,352.0" fill="#236b92" stroke="#236b92" stroke-width="0.6"/>
<polygon points="1953.7,354.6 1950.8,354.0 1950.9,352.0 1953.8,352.6" fill="#236a92" stroke="#236a92" stroke-width="0.6"/>
<polygon points="1956.1,355.5 1953.7,354.6 1953.8,352.6 1956.2,353.5" fill="#22688e" stroke="#22688e" stroke-width="0.6"/>
<polygon points="1957.9,356.7 1956.1,355.5 1956.2,353.5 1958.0,354.7" fill="#22668c" stroke="#22668c" stroke-width="0.6"/>
<polygon points="1958.8,358.0 1957.9,356.7 1958.0,354.7 1958.9,356.1" fill="#206083" stroke="#206083" stroke-width="0.6"/>
<polygon points="1958.7,359.4 1958.8,358.0 1958.9,356.1 1958.8,357.4" fill="#1c5574" stroke="#1c5574" stroke-width="0.6"/>
<polygon points="1793.3,338.6 1579.2,789.9 1579.2,787.7 1793.4,336.6" fill="#1a4d6a" stroke="#1a4d6a" stroke-width="0.6"/>
<polygon points="1579.2,789.9 1578.8,791.9 1578.9,789.6 1579.2,787.7" fill="#194b67" stroke="#194b67" stroke-width="0.6"/>
<polygon points="1820.7,347.7 1937.2,362.4 1923.1,396.8 1805.0,381.7" fill="#236b92"/>
<polygon points="1820.7,347.7 1805.0,381.7 1820.7,383.7" fill="#1a4d6a"/>
<polygon points="1805.0,381.7 1923.1,396.8 1907.7,434.3 1787.9,418.7" fill="#236b92"/>
<polygon points="1805.0,381.7 1787.9,418.7 1805.0,421.0" fill="#1a4d6a"/>
<polygon points="1787.9,418.7 1907.7,434.3 1891.9,473.0 1770.3,456.9" fill="#236b92"/>
<polygon points="1787.9,418.7 1770.3,456.9 1787.9,459.3" fill="#1a4d6a"/>
<polygon points="1770.3,456.9 1891.9,473.0 1875.5,512.9 1752.1,496.3" fill="#236b92"/>
<polygon points="1770.3,456.9 1752.1,496.3 1770.3,498.8" fill="#1a4d6a"/>
<polygon points="1752.1,496.3 1875.5,512.9 1858.6,554.2 1733.4,537.0" fill="#236b92"/>
<polygon points="1752.1,496.3 1733.4,537.0 1752.1,539.6" fill="#1a4d6a"/>
<polygon points="1733.4,537.0 1858.6,554.2 1841.2,596.7 1714.0,579.0" fill="#236b92"/>
<polygon points="1733.4,537.0 1714.0,579.0 1733.4,581.7" fill="#1a4d6a"/>
<polygon points="1714.0,579.0 1841.2,596.7 1823.2,640.7 1694.0,622.4" fill="#236b92"/>
<polygon points="1714.0,579.0 1694.0,622.4 1714.0,625.3" fill="#1a4d6a"/>
<polygon points="1694.0,622.4 1823.2,640.7 1804.6,686.2 1673.3,667.3" fill="#236b92"/>
<polygon points="1694.0,622.4 1673.3,667.3 1694.0,670.3" fill="#1a4d6a"/>
<polygon points="1673.3,667.3 1804.6,686.2 1785.3,733.3 1651.9,713.7" fill="#236b92"/>
<polygon points="1673.3,667.3 1651.9,713.7 1673.3,716.9" fill="#1a4d6a"/>
<polygon points="1651.9,713.7 1785.3,733.3 1765.3,782.0 1629.7,761.8" fill="#236b92"/>
<polygon points="1651.9,713.7 1629.7,761.8 1651.9,765.1" fill="#1a4d6a"/>
<polygon points="1629.7,761.8 1765.3,782.0 1751.5,815.8 1614.4,795.0" fill="#236b92"/>
<polygon points="1629.7,761.8 1614.4,795.0 1629.7,797.3" fill="#1a4d6a"/>
<polygon points="1629.0,763.3 1764.7,783.6 1766.0,780.4 1630.5,760.2" fill="#2d89bb"/>
<polygon points="1651.2,715.2 1784.6,734.8 1785.9,731.8 1652.6,712.2" fill="#2d89bb"/>
<polygon points="1672.6,668.8 1803.9,687.7 1805.2,684.7 1674.0,665.8" fill="#2d89bb"/>
<polygon points="1693.3,623.9 1822.6,642.2 1823.8,639.3 1694.6,621.0" fill="#2d89bb"/>
<polygon points="1713.4,580.4 1840.6,598.1 1841.8,595.3 1714.6,577.6" fill="#2d89bb"/>
<polygon points="1732.7,538.4 1858.1,555.5 1859.2,552.8 1734.0,535.7" fill="#2d89bb"/>
<polygon points="1751.5,497.6 1875.0,514.3 1876.1,511.6 1752.7,495.1" fill="#2d89bb"/>
<polygon points="1769.7,458.2 1891.4,474.3 1892.4,471.8 1770.9,455.7" fill="#2d89bb"/>
<polygon points="1787.3,420.0 1907.2,435.6 1908.2,433.1 1788.5,417.5" fill="#2d89bb"/>
<polygon points="1804.4,382.9 1922.6,398.0 1923.6,395.6 1805.5,380.5" fill="#2d89bb"/>
</g>
</g>
<polygon points="2140.6,456.7 2144.2,456.8 2147.2,455.9 2148.6,454.5 2155.3,432.8 2154.8,431.2 2152.6,429.7 2149.3,428.8 2099.0,422.4 2095.4,422.4 2092.5,423.2 2091.1,424.6 2083.8,446.1 2084.3,447.8 2086.4,449.3 2089.8,450.1" fill="none" stroke="#8f8f8f" stroke-width="1.3"/><polygon points="2140.0,455.6 2143.0,455.6 2145.4,455.0 2146.5,453.8 2153.0,433.0 2152.6,431.6 2150.8,430.4 2148.1,429.7 2099.6,423.5 2096.6,423.5 2094.3,424.1 2093.1,425.3 2086.2,446.0 2086.5,447.3 2088.3,448.5 2091.0,449.3" fill="none" stroke="#c4c4c4" stroke-width="1.2"/>
<polygon points="2127.3,499.3 2131.0,499.4 2134.0,498.5 2135.5,497.0 2142.4,474.6 2141.9,472.9 2139.7,471.4 2136.3,470.5 2085.2,463.8 2081.5,463.8 2078.6,464.6 2077.1,466.1 2069.6,488.3 2070.0,490.1 2072.2,491.6 2075.6,492.5" fill="none" stroke="#8f8f8f" stroke-width="1.3"/><polygon points="2126.7,498.2 2129.7,498.2 2132.2,497.5 2133.3,496.3 2140.0,474.8 2139.7,473.3 2137.9,472.1 2135.1,471.4 2085.7,464.9 2082.8,464.9 2080.4,465.6 2079.2,466.8 2072.0,488.2 2072.3,489.6 2074.1,490.9 2076.9,491.6" fill="none" stroke="#c4c4c4" stroke-width="1.2"/>
<polygon points="2113.5,543.4 2117.3,543.5 2120.3,542.6 2121.8,541.0 2129.0,517.9 2128.5,516.1 2126.3,514.5 2122.8,513.6 2070.9,506.7 2067.2,506.7 2064.2,507.5 2062.7,509.0 2054.9,532.0 2055.3,533.8 2057.5,535.4 2061.0,536.4" fill="none" stroke="#8f8f8f" stroke-width="1.3"/><polygon points="2112.9,542.2 2116.0,542.3 2118.5,541.5 2119.7,540.3 2126.6,518.0 2126.3,516.5 2124.4,515.3 2121.6,514.5 2071.5,507.8 2068.4,507.8 2066.0,508.5 2064.7,509.8 2057.3,531.9 2057.6,533.4 2059.5,534.7 2062.3,535.4" fill="none" stroke="#c4c4c4" stroke-width="1.2"/>
<polygon points="2099.3,589.1 2103.1,589.1 2106.2,588.2 2107.7,586.6 2115.2,562.6 2114.7,560.8 2112.4,559.1 2108.9,558.2 2056.1,551.0 2052.3,551.0 2049.2,551.9 2047.7,553.5 2039.7,577.3 2040.1,579.2 2042.3,580.8 2045.9,581.8" fill="none" stroke="#8f8f8f" stroke-width="1.3"/><polygon points="2098.7,587.9 2101.8,587.9 2104.3,587.1 2105.6,585.8 2112.7,562.7 2112.4,561.2 2110.5,559.9 2107.7,559.1 2056.7,552.2 2053.6,552.2 2051.1,552.9 2049.8,554.2 2042.1,577.1 2042.5,578.7 2044.3,580.0 2047.1,580.8" fill="none" stroke="#c4c4c4" stroke-width="1.2"/>
<polygon points="2084.5,636.4 2088.4,636.4 2091.6,635.5 2093.1,633.8 2100.8,609.0 2100.4,607.0 2098.1,605.4 2094.5,604.4 2040.8,597.0 2036.9,596.9 2033.8,597.9 2032.2,599.5 2023.9,624.2 2024.3,626.1 2026.6,627.8 2030.2,628.8" fill="none" stroke="#8f8f8f" stroke-width="1.3"/><polygon points="2083.9,635.1 2087.1,635.2 2089.7,634.4 2090.9,633.0 2098.4,609.1 2098.0,607.5 2096.1,606.2 2093.2,605.4 2041.3,598.2 2038.2,598.2 2035.7,598.9 2034.4,600.3 2026.4,624.0 2026.7,625.6 2028.6,627.0 2031.5,627.8" fill="none" stroke="#c4c4c4" stroke-width="1.2"/>
<polygon points="2069.2,685.4 2073.2,685.5 2076.4,684.5 2078.0,682.7 2086.0,657.0 2085.5,655.0 2083.2,653.3 2079.5,652.2 2024.9,644.6 2021.0,644.5 2017.8,645.5 2016.2,647.2 2007.6,672.7 2007.9,674.8 2010.3,676.5 2013.9,677.6" fill="none" stroke="#8f8f8f" stroke-width="1.3"/><polygon points="2068.6,684.1 2071.8,684.2 2074.4,683.4 2075.8,681.9 2083.4,657.1 2083.1,655.5 2081.2,654.1 2078.2,653.3 2025.5,645.9 2022.3,645.8 2019.7,646.6 2018.4,648.0 2010.1,672.6 2010.4,674.3 2012.3,675.7 2015.2,676.5" fill="none" stroke="#c4c4c4" stroke-width="1.2"/>
<polyline points="2105.2,429.7 2134.1,449.7" fill="none" stroke="#9b9b9b" stroke-width="1.3" stroke-linejoin="round"/>
<polyline points="2100.0,445.3 2139.1,434.0" fill="none" stroke="#9b9b9b" stroke-width="1.3" stroke-linejoin="round"/>
<polygon points="2113.9,471.5 2132.3,483.4 2108.0,489.8 2090.6,478.0" fill="none" stroke="#9b9b9b" stroke-width="1.3" stroke-linejoin="round"/>
<polyline points="2103.3,483.0 2112.4,476.2 2116.6,484.7" fill="none" stroke="#9b9b9b" stroke-width="1.3" stroke-linejoin="round"/>
<polyline points="2106.4,480.6 2115.2,481.8" fill="none" stroke="#9b9b9b" stroke-width="1.3" stroke-linejoin="round"/>
<polyline points="2078.8,488.7 2125.9,494.9" fill="none" stroke="#9b9b9b" stroke-width="1.3" stroke-linejoin="round"/>
<polyline points="2091.6,483.6 2080.5,486.3" fill="none" stroke="#9b9b9b" stroke-width="1.3" stroke-linejoin="round"/>
<polyline points="2081.5,483.1 2080.5,486.3 2087.6,487.3" fill="none" stroke="#9b9b9b" stroke-width="1.3" stroke-linejoin="round"/>
<polygon points="2107.7,537.8 2110.4,537.6 2111.9,536.6 2113.1,532.8 2112.4,531.4 2110.0,530.6 2072.1,525.5 2069.4,525.7 2068.0,526.7 2066.7,530.5 2067.4,531.9 2069.8,532.7" fill="none" stroke="#9b9b9b" stroke-width="1.3" stroke-linejoin="round"/>
<polygon points="2113.0,528.4 2114.7,528.3 2115.6,527.6 2118.4,518.8 2118.0,518.0 2116.5,517.5 2105.7,516.1 2104.0,516.2 2103.1,516.8 2100.3,525.6 2100.7,526.4 2102.2,526.9" fill="none" stroke="#9b9b9b" stroke-width="1.3" stroke-linejoin="round"/>
<polygon points="2091.1,519.3 2093.9,519.4 2096.1,518.7 2097.3,517.6 2097.4,517.1 2097.1,515.8 2095.4,514.6 2092.8,513.9 2079.4,512.1 2076.6,512.1 2074.3,512.8 2073.2,513.9 2073.0,514.3 2073.3,515.7 2075.0,516.8 2077.6,517.5" fill="none" stroke="#9b9b9b" stroke-width="1.3" stroke-linejoin="round"/>
<polygon points="2080.7,522.3 2080.2,520.8 2078.0,519.7 2075.0,519.3 2072.2,519.8 2070.8,521.0 2071.3,522.5 2073.5,523.6 2076.6,524.0 2079.3,523.5" fill="none" stroke="#9b9b9b" stroke-width="1.3" stroke-linejoin="round"/>
<polygon points="2094.6,524.2 2094.1,522.7 2091.9,521.5 2088.9,521.1 2086.1,521.6 2084.8,522.9 2085.3,524.3 2087.5,525.5 2090.5,525.9 2093.3,525.4" fill="none" stroke="#9b9b9b" stroke-width="1.3" stroke-linejoin="round"/>
<polygon points="2089.9,582.3 2092.6,582.1 2094.1,581.1 2096.3,574.1 2095.6,572.7 2093.2,571.8 2063.0,567.7 2060.2,567.9 2058.7,569.0 2056.4,575.9 2057.1,577.3 2059.5,578.2" fill="none" stroke="#9b9b9b" stroke-width="1.3" stroke-linejoin="round"/>
<polyline points="2066.6,568.2 2067.1,563.8 2068.5,561.9 2071.1,560.5 2074.6,559.7 2078.7,559.6 2082.8,560.1 2086.5,561.3 2089.3,563.0 2090.8,565.0 2090.9,567.0 2090.2,569.2" fill="none" stroke="#9b9b9b" stroke-width="1.3" stroke-linejoin="round"/>
<polyline points="2041.7,607.3 2087.2,613.6" fill="none" stroke="#9b9b9b" stroke-width="1.3" stroke-linejoin="round"/>
<polyline points="2037.8,619.0 2083.5,625.4" fill="none" stroke="#9b9b9b" stroke-width="1.3" stroke-linejoin="round"/>
<polygon points="2058.3,612.9 2060.1,612.8 2061.0,612.1 2062.3,608.1 2061.9,607.2 2060.3,606.6 2054.8,605.9 2053.0,606.0 2052.1,606.7 2050.8,610.7 2051.2,611.6 2052.7,612.1" fill="none" stroke="#9b9b9b" stroke-width="1.3" stroke-linejoin="round"/>
<polygon points="2073.2,627.2 2074.9,627.1 2075.9,626.4 2077.2,622.3 2076.7,621.5 2075.2,620.9 2069.6,620.1 2067.8,620.2 2066.9,620.9 2065.6,625.0 2066.0,625.9 2067.6,626.4" fill="none" stroke="#9b9b9b" stroke-width="1.3" stroke-linejoin="round"/>
<polyline points="2032.2,652.3 2069.0,657.5" fill="none" stroke="#9b9b9b" stroke-width="1.3" stroke-linejoin="round"/>
<polyline points="2043.9,675.5 2050.4,655.4" fill="none" stroke="#9b9b9b" stroke-width="1.3" stroke-linejoin="round"/>
<polyline points="2035.6,660.1 2050.4,655.4 2061.1,663.7" fill="none" stroke="#9b9b9b" stroke-width="1.3" stroke-linejoin="round"/>
<polygon points="453.9,1034.3 516.5,1041.7 530.9,1018.4 469.8,1009.4" fill="#cdcdcd"/>
<polygon points="516.5,1041.7 530.9,1018.4 530.4,1073.6 515.5,1104.4" fill="#c5c5c5"/>
<polygon points="451.4,1095.4 515.5,1104.4 516.5,1041.7 453.9,1034.3" fill="#c8c8c8"/>
<line x1="451.4" y1="1095.4" x2="473.7" y2="1053.7" stroke="#bcd6ba" stroke-width="2"/><polygon points="470,1062 475.5,1049 463.5,1058" fill="#bcd6ba"/>
<line x1="451.4" y1="1095.4" x2="451.4" y2="1045" stroke="#7c80cf" stroke-width="3.2"/><polygon points="445.9,1045.7 456.9,1045.7 451.4,1033.8" fill="#7c80cf"/>
<line x1="451.4" y1="1096.6" x2="508" y2="1104" stroke="#d07272" stroke-width="3.2"/><polygon points="506.5,1098.4 518.5,1104.9 506.5,1109.4" fill="#d07272"/>
<text x="446.8" y="1026.8" font-size="8" fill="#8084cf" font-family="Liberation Sans, sans-serif">Z</text>
<text x="526.3" y="1110.6" font-size="8" fill="#d07272" font-family="Liberation Sans, sans-serif">X</text>
<text transform="matrix(0.99 0.10 -0.03 1 467.3 1075.6)" font-size="12.6" fill="#4e4e4e" font-family="Liberation Sans, sans-serif">Front</text>
<text transform="matrix(0.96 0.2 -0.5 0.55 481 1027.5)" font-size="10.5" fill="#555" font-style="italic" font-family="Liberation Sans, sans-serif">Top</text>
<text transform="matrix(0.25 -0.55 0.2 0.9 519 1070)" font-size="7" fill="#666" font-family="Liberation Sans, sans-serif">Right</text>
<rect x="1992" y="1055" width="375" height="55.5" rx="4" fill="#ebebeb"/>
<circle cx="2026" cy="1078.5" r="10.5" fill="#bcd4ea"/><path d="M2020.5 1078.8l4 4 7-8" fill="none" stroke="#f4f8fb" stroke-width="2.2" stroke-linecap="round" stroke-linejoin="round"/>
<text x="2048" y="1086.5" font-size="12.6" font-weight="bold" fill="#c9c9c9" font-family="Liberation Sans, sans-serif">Slice complete</text>
<path d="M2331.5 1074.5l10.5 10.5 M2342 1074.5l-10.5 10.5" stroke="#dadada" stroke-width="1.2" fill="none"/>
</g>
</svg>
<!-- collapse btn -->
<div class="abs" style="left:428px;top:68px;width:27px;height:28px;background:#f4f4f4"></div>
<svg style="left:432px;top:73px" width="18" height="18" viewBox="0 0 18 18"><path class="ic" d="M6 1.500l-4 4 4 4 M11 8.500l4 4-4 4" stroke="#3c3f41" stroke-width="1.300"/></svg>
<!-- toolbar -->
<div class="abs" style="left:1021px;top:68px;width:816px;height:48px;background:#fafafa"></div>
<svg style="left:1021px;top:69.5px" width="816" height="47" viewBox="1021 68 816 47">
 <!-- 1 cube+ -->
 <g class="tb" transform="translate(1028,75)"><path d="M1 8l15-7 15 6v16l-15 8-15-8z M1 8l15 6 15-7 M16 14v17"/><path d="M20 20h12v12h-12z" fill="#fafafa"/><path d="M23 26h6 M26 23v6"/></g>
 <!-- 2 grid+ -->
 <g class="tb" transform="translate(1072,75)"><path d="M1 1h30v30h-30z M1 9h30 M1 17h30 M1 25h30 M9 1v30 M17 1v30 M25 1v30"/><path d="M20 20h12v12h-12z" fill="#fafafa"/><path d="M23 26h6 M26 23v6"/></g>
 <!-- 3 auto orient -->
 <g class="tb" transform="translate(1116,75)"><path d="M18 1l14 13-14 13-14-13z M1 31h31 M9 20l-7 8 M2 23v5h5 M14 18l4-9 4 9 M15.500 15h5"/></g>
 <!-- 4 arrange -->
 <g class="tb" transform="translate(1161,75)"><path d="M1 1h30v30h-30z M4 20h23v8h-23z M21 4h7v13h-7z M5 4h12a3 3 0 0 1 0 6h-12a3 3 0 0 1 0-6z"/><circle cx="7.500" cy="15" r="2.700"/><circle cx="14.500" cy="15" r="2.700"/></g>
 <!-- 5 split objects -->
 <g class="tbd" transform="translate(1212,75)"><circle cx="8" cy="7" r="6"/><circle cx="25" cy="7" r="6"/><circle cx="8" cy="25" r="6"/><circle cx="25" cy="25" r="6"/><path d="M0 16h33" stroke-dasharray="3 2"/><path d="M16.500 0v33" stroke-dasharray="3 2"/></g>
 <!-- 6 split parts -->
 <g class="tbd" transform="translate(1256,75)"><path d="M1 14v-7a6 6 0 0 1 6-6h7v13z M19 1h7a6 6 0 0 1 6 6v7h-13z M1 19h13v13h-7a6 6 0 0 1-6-6z M19 19h13v7a6 6 0 0 1-6 6h-7z"/></g>
 <!-- 7 layers -->
 <g class="tbd" transform="translate(1301,75)"><path d="M2 1h28a2 2 0 0 1 0 4h-28a2 2 0 0 1 0-4z M2 10h28a2 2 0 0 1 0 4h-28a2 2 0 0 1 0-4z M2 19h28a2 2 0 0 1 0 4h-28a2 2 0 0 1 0-4z M2 28h28a2 2 0 0 1 0 4h-28a2 2 0 0 1 0-4z"/></g>
 <path d="M1354.500 76v30" stroke="#8a8a8a" stroke-width="1.300"/>
 <!-- 8 move -->
 <g class="tbd" transform="translate(1372,75)"><path d="M11 11h11v11h-11z M16.500 8v-7 M13 4l3.500-3.500 3.500 3.500 M16.500 25v7 M13 29l3.500 3.500 3.500-3.500 M8 16.500h-7 M4 13l-3.500 3.500 3.500 3.500 M25 16.500h7 M29 13l3.500 3.500-3.500 3.500"/></g>
 <!-- 9 rotate -->
 <g class="tbd" transform="translate(1416,75)"><path d="M11 11h11v11h-11z M3 9a15 15 0 1 1 -1 12" /><path d="M2 21a15 15 0 0 1 1-12" stroke-dasharray="3 2"/><path d="M2 3l1 6.500 6-1.500"/></g>
 <!-- 10 scale -->
 <g class="tbd" transform="translate(1460,75)"><path d="M1 1h31v31h-31z" stroke-dasharray="4 2.500"/><path d="M10 10h13v13h-13z M1 7v-6h6 M1 1l7 7 M26 1h6v6 M32 1l-7 7 M32 26v6h-6 M32 32l-7-7 M7 32h-6v-6 M1 32l7-7"/></g>
 <!-- 11 lay flat -->
 <g class="tbd" transform="translate(1504,75)"><path d="M18 1l14 13-14 13-14-13z M1 31h31 M9 20l-7 8 M2 23v5h5"/></g>
 <!-- 12 cut -->
 <g class="tbd" transform="translate(1548,75)"><path d="M10 1h22v22h-22z M1 10h22v22h-22z"/><path d="M10 10h13v13h-13z" fill="#dcdcdc"/></g>
 <!-- 13 support paint -->
 <g class="tbd" transform="translate(1592,75)"><path d="M1 31v-30h31v18 M1 13h19v18 M5 13v18 M9 13v18 M13 13v18 M17 13v18 M24 31l2-5 5-7 1.500 1-5 7z"/></g>
 <!-- 14 seam paint -->
 <g class="tbd" transform="translate(1636,75)"><path d="M1 31v-30h31v18 M1 31h19"/><path d="M11 3v28" stroke-dasharray="1.500 2"/><path d="M24 31l2-5 5-7 1.500 1-5 7z"/></g>
 <!-- 15 text -->
 <g class="tb" transform="translate(1680,75)"><path d="M3 2h25a2 2 0 0 1 2 2v3a2 2 0 0 1-2 2h-7.500v19a2 2 0 0 1-2 2h-5a2 2 0 0 1-2-2v-19h-8.500a2 2 0 0 1-2-2v-3a2 2 0 0 1 2-2z" stroke-width="1.500"/><path d="M30 4.500q1.800.3 1.800 2v2.500a2 2 0 0 1-2 2h-7v18a2 2 0 0 1-2 2h-5q-1.800 0-2-1.500" stroke-width="1.300"/></g>
 <!-- 16 measure -->
 <g class="tbd" transform="translate(1724,75)"><path d="M14 1h8v31h-8z M1 5h31 M3 5v4h10 M22 9h9v-4 M1 17h31 M3 17v-3h10 M22 14h9v3 M16 20h3 M16 23h4 M16 26h3 M16 29h4"/><circle cx="7" cy="11.500" r="3"/></g>
 <path d="M1778.500 76v30" stroke="#8a8a8a" stroke-width="1.300"/>
 <!-- 17 assemble -->
 <g class="tb" transform="translate(1797,75)"><path d="M1 1h31v31h-31z M16.500 1v4.500a3 3 0 1 1 0 6v5 M16.500 16.500v5a3 3 0 1 0 0 6v4.500 M1 16.500h4.500a3 3 0 1 0 6 0h5 M16.500 16.500h5a3 3 0 1 1 6 0h4.500"/></g>
</svg>
</div>
</body></html>
